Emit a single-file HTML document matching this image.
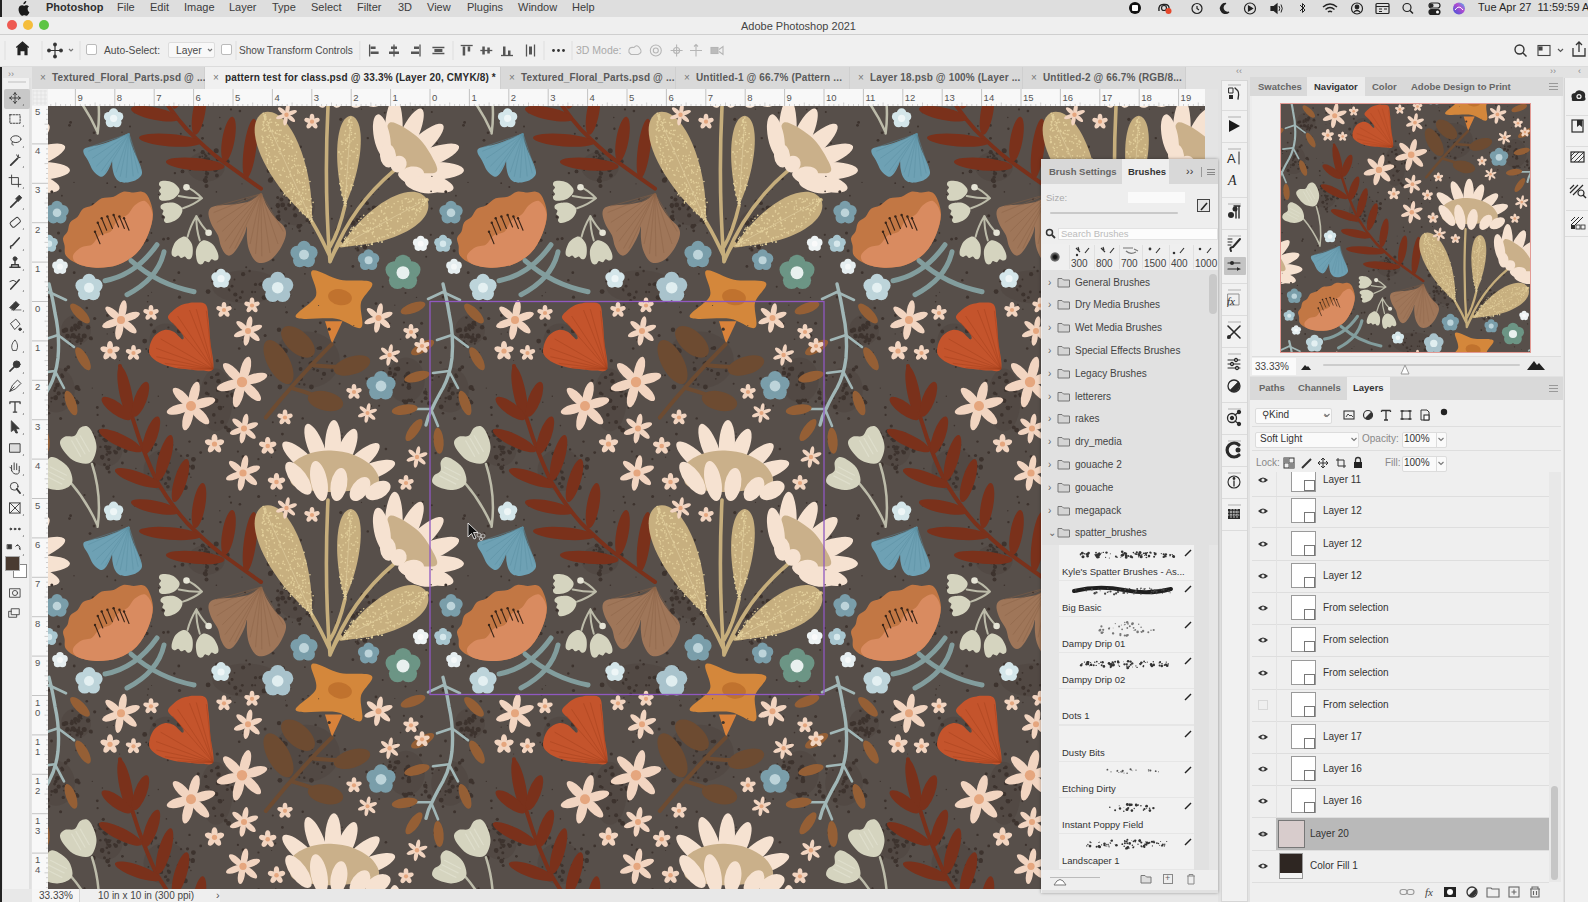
<!DOCTYPE html><html><head><meta charset="utf-8"><style>
*{margin:0;padding:0;box-sizing:border-box}
html,body{width:1588px;height:902px;overflow:hidden;background:#e9e9e9;font-family:"Liberation Sans",sans-serif;color:#333}
.a{position:absolute}
.t{position:absolute;white-space:nowrap;line-height:1}
</style></head><body><div class="a" style="left:0px;top:0px;width:1588px;height:17px;background:#dedede;"></div><div class="a" style="left:0px;top:0px;width:1.6px;height:902px;background:#222;"></div><svg class="a" style="left:16px;top:1px" width="14" height="15" viewBox="0 0 14 15"><path d="M9.5 2.2c.6-.7.9-1.5.8-2.2-.8 0-1.6.5-2.1 1.1-.5.5-.9 1.4-.8 2.2.8.1 1.6-.4 2.1-1.1zM11.6 8c0-1.6 1.3-2.4 1.4-2.4-.8-1.1-2-1.3-2.4-1.3-1-.1-2 .6-2.5.6s-1.3-.6-2.200-.6C4.800 4.300 3.700 5 3.100 6.100c-1.200 2.100-.3 5.200.9 6.900.6.800 1.200 1.700 2.100 1.700.8 0 1.200-.5 2.200-.5s1.300.5 2.200.5c.9 0 1.500-.9 2-1.700.6-.9.900-1.800.9-1.800S11.600 10.400 11.600 8z" fill="#1a1a1a"/></svg><div class="t" style="left:46px;top:2px;font-size:11px;color:#2e2e2e;font-weight:bold">Photoshop</div><div class="t" style="left:117px;top:2px;font-size:11px;color:#3c3c3c;">File</div><div class="t" style="left:150px;top:2px;font-size:11px;color:#3c3c3c;">Edit</div><div class="t" style="left:184px;top:2px;font-size:11px;color:#3c3c3c;">Image</div><div class="t" style="left:229px;top:2px;font-size:11px;color:#3c3c3c;">Layer</div><div class="t" style="left:272px;top:2px;font-size:11px;color:#3c3c3c;">Type</div><div class="t" style="left:311px;top:2px;font-size:11px;color:#3c3c3c;">Select</div><div class="t" style="left:357px;top:2px;font-size:11px;color:#3c3c3c;">Filter</div><div class="t" style="left:398px;top:2px;font-size:11px;color:#3c3c3c;">3D</div><div class="t" style="left:427px;top:2px;font-size:11px;color:#3c3c3c;">View</div><div class="t" style="left:467px;top:2px;font-size:11px;color:#3c3c3c;">Plugins</div><div class="t" style="left:518px;top:2px;font-size:11px;color:#3c3c3c;">Window</div><div class="t" style="left:572px;top:2px;font-size:11px;color:#3c3c3c;">Help</div><div class="t" style="left:1478px;top:2px;font-size:11px;color:#262626;">Tue Apr 27&nbsp;&nbsp;11:59:59 AM</div><div class="a" style="left:0px;top:17px;width:1588px;height:18px;background:#efefef;"></div><div class="a" style="left:0px;top:34px;width:1588px;height:1px;background:#cfcfcf;"></div><div class="a" style="left:7px;top:20px;width:10px;height:10px;border-radius:50%;background:#ee5a52"></div><div class="a" style="left:23px;top:20px;width:10px;height:10px;border-radius:50%;background:#f4bd3c"></div><div class="a" style="left:39px;top:20px;width:10px;height:10px;border-radius:50%;background:#5cc443"></div><div class="t" style="left:741px;top:21px;font-size:11px;color:#444;">Adobe Photoshop 2021</div><div class="a" style="left:0px;top:35px;width:1588px;height:31px;background:#f0f0f0;"></div><div class="a" style="left:0px;top:66px;width:1588px;height:1px;background:#dcdcdc;"></div><div class="t" style="left:104px;top:46px;font-size:10.3px;color:#4a4a4a;">Auto-Select:</div><div class="t" style="left:239px;top:46px;font-size:10.1px;color:#4a4a4a;">Show Transform Controls</div><div class="t" style="left:576px;top:45px;font-size:10.5px;color:#aaa;">3D Mode:</div><div class="a" style="left:168px;top:42px;width:47px;height:16px;background:#f8f8f8;border:1px solid #ddd;border-radius:2px"></div><div class="t" style="left:176px;top:46px;font-size:10.3px;color:#4a4a4a;">Layer</div><div class="a" style="left:86px;top:44px;width:11px;height:11px;background:#fff;border:1px solid #bbb;border-radius:2px"></div><div class="a" style="left:221px;top:44px;width:11px;height:11px;background:#fff;border:1px solid #bbb;border-radius:2px"></div><svg class="a" style="left:0;top:35px" width="1588" height="31" fill="none" stroke="#555" stroke-width="1.2"><g transform="translate(22.5,14) scale(0.78) translate(-22.5,-13)"><path d="M16 10 L22.5 4.5 L29 10 V21 H25 V16 H20 V21 H16Z" fill="#222" stroke="none"/><path d="M14.5 11 L22.5 4 L30.5 11" stroke="#222" stroke-width="1.6"/></g><g stroke="#333" stroke-width="1.2"><path d="M49 15.5 H61 M55 9.5 V21.5"/><circle cx="49" cy="15.5" r="1.3" fill="#333"/><circle cx="61" cy="15.5" r="1.3" fill="#333"/><circle cx="55" cy="9.5" r="1.3" fill="#333"/><circle cx="55" cy="21.5" r="1.3" fill="#333"/></g><path d="M69 14 L71 16 L73 14" stroke="#777"/><path d="M208 14 L210 16 L212 14" stroke="#777"/><line x1="5" y1="6" x2="5" y2="25" stroke="#dedede" stroke-width="1"/><line x1="42" y1="6" x2="42" y2="25" stroke="#dedede" stroke-width="1"/><line x1="80" y1="6" x2="80" y2="25" stroke="#dedede" stroke-width="1"/><line x1="359.8" y1="6" x2="359.8" y2="25" stroke="#dedede" stroke-width="1"/><line x1="453" y1="6" x2="453" y2="25" stroke="#dedede" stroke-width="1"/><line x1="544" y1="6" x2="544" y2="25" stroke="#dedede" stroke-width="1"/><line x1="572" y1="6" x2="572" y2="25" stroke="#dedede" stroke-width="1"/><line x1="236" y1="6" x2="236" y2="25" stroke="#dedede" stroke-width="1"/><g transform="translate(374.6,15.5)" stroke="#555" stroke-width="1.3"><path d="M-5 -6 V6"/><rect x="-4" y="-4" width="5" height="2.5" fill="#555" stroke="none"/><rect x="-4" y="1" width="8" height="2.5" fill="#555" stroke="none"/></g><g transform="translate(394,15.5)" stroke="#555" stroke-width="1.3"><path d="M0 -6 V6"/><rect x="-3" y="-4" width="6" height="2.5" fill="#555" stroke="none"/><rect x="-5" y="1" width="10" height="2.5" fill="#555" stroke="none"/></g><g transform="translate(415,15.5)" stroke="#555" stroke-width="1.3"><path d="M5 -6 V6"/><rect x="-1" y="-4" width="5" height="2.5" fill="#555" stroke="none"/><rect x="-4" y="1" width="8" height="2.5" fill="#555" stroke="none"/></g><g transform="translate(438.4,15.5)" stroke="#555" stroke-width="1.3"><path d="M-6 -3 H6 M-6 3 H6"/><rect x="-4" y="-1.5" width="8" height="3" fill="#555" stroke="none"/></g><g transform="translate(466.7,15.5)" stroke="#555" stroke-width="1.3"><path d="M-6 -5 H6"/><rect x="-4" y="-4" width="2.5" height="9" fill="#555" stroke="none"/><rect x="1" y="-4" width="2.5" height="5" fill="#555" stroke="none"/></g><g transform="translate(486.3,15.5)" stroke="#555" stroke-width="1.3"><path d="M-6 0 H6"/><rect x="-4" y="-4" width="2.5" height="8" fill="#555" stroke="none"/><rect x="1" y="-3" width="2.5" height="6" fill="#555" stroke="none"/></g><g transform="translate(507,15.5)" stroke="#555" stroke-width="1.3"><path d="M-6 5 H6"/><rect x="-4" y="-4" width="2.5" height="9" fill="#555" stroke="none"/><rect x="1" y="0" width="2.5" height="5" fill="#555" stroke="none"/></g><g transform="translate(530.5,15.5)" stroke="#555" stroke-width="1.3"><path d="M-4 -6 V6 M4 -6 V6"/><rect x="-1.5" y="-4" width="3" height="8" fill="#555" stroke="none"/></g><circle cx="553.5" cy="15.5" r="1.4" fill="#333" stroke="none"/><circle cx="558.5" cy="15.5" r="1.4" fill="#333" stroke="none"/><circle cx="563.5" cy="15.5" r="1.4" fill="#333" stroke="none"/><g transform="translate(635,15.5)" stroke="#b5b5b5" stroke-width="1.1"><path d="M-6 2 Q-7 -4 -1 -3 Q2 -7 5 -2 Q8 2 3 4 H-4Z"/></g><g transform="translate(655.8,15.5)" stroke="#b5b5b5" stroke-width="1.1"><circle r="5.5"/><circle r="2.5"/></g><g transform="translate(676.6,15.5)" stroke="#b5b5b5" stroke-width="1.1"><path d="M0 -6 V6 M-6 0 H6"/><circle r="3"/></g><g transform="translate(696,15.5)" stroke="#b5b5b5" stroke-width="1.1"><path d="M0 -6 V6 M-6 0 H6 M-2 -4 L0 -6 L2 -4"/></g><g transform="translate(717,15.5)" stroke="#b5b5b5" stroke-width="1.1"><rect x="-6" y="-3" width="7" height="6" fill="#bbb"/><path d="M2 -1 L6 -4 V4 L2 1"/></g><g stroke="#333" stroke-width="1.4"><circle cx="1519.5" cy="14.5" r="4.5"/><path d="M1523 18 L1526.5 21.5"/></g><g stroke="#444" stroke-width="1.1"><rect x="1538" y="10.5" width="12" height="10"/><rect x="1539" y="12" width="3" height="3" fill="#444"/></g><path d="M1558 14 L1560.5 16.5 L1563 14" stroke="#555"/><g stroke="#333" stroke-width="1.3"><path d="M1573 13 V21 H1585 V13 M1579 17 V7 M1576 10 L1579 7 L1582 10"/></g></svg><svg class="a" style="left:1120px;top:0" width="360" height="17" fill="none" stroke="#222" stroke-width="1.2"><circle cx="15" cy="8" r="6" fill="#111" stroke="none"/><rect x="12" y="5" width="6" height="6" rx="1" fill="#fff" stroke="none"/><path d="M39 11 Q38 4 44 4.5 Q50 4 49 10" stroke-width="1.4"/><circle cx="44" cy="8" r="2.5"/><circle cx="48.5" cy="11" r="3" fill="#e5482c" stroke="none"/><circle cx="77" cy="8.5" r="5"/><path d="M77 6 V8.5 L79 10"/><path d="M106 3.5 A5 5 0 1 0 109 12 A4 4 0 0 1 106 3.5Z" fill="#222"/><circle cx="130" cy="8.5" r="5.5"/><path d="M128.5 6 L132.5 8.5 L128.5 11Z" fill="#222"/><path d="M151 6.5 H154 L157 4 V13 L154 10.5 H151Z" fill="#222"/><path d="M159 6 Q160.5 8.5 159 11 M161 4.5 Q163.5 8.5 161 12.5" stroke-width="1"/><path d="M180 5 L185 10 L182.5 12.5 V3.5 L185 6 L180 11" stroke-width="1"/><path d="M203 7 Q210 1 217 7 M205.5 9.5 Q210 5.5 214.5 9.5 M208 12 Q210 10.5 212 12" stroke-width="1.5"/><circle cx="237" cy="8.5" r="5.5"/><circle cx="237" cy="7" r="1.8" fill="#222"/><path d="M234 12 Q237 9 240 12" /><rect x="256" y="3.5" width="13" height="10" rx="1"/><path d="M256 6.5 H269 M259 9 H262 M264 9 H267 M259 11.5 H262"/><circle cx="287" cy="7.5" r="4"/><path d="M290 10.5 L293 13.5" stroke-width="1.5"/><rect x="309" y="3" width="11" height="5" rx="2.5"/><circle cx="311.5" cy="5.5" r="1.5" fill="#222"/><rect x="309" y="9.5" width="11" height="5" rx="2.5" fill="#222"/><circle cx="317.5" cy="12" r="1.5" fill="#fff" stroke="none"/><defs><linearGradient id="sg" x1="0" x2="1" y1="1" y2="0"><stop offset="0" stop-color="#3a56d8"/><stop offset="0.6" stop-color="#b44bd0"/><stop offset="1" stop-color="#44c0ee"/></linearGradient></defs><circle cx="339" cy="8.5" r="6" fill="url(#sg)" stroke="none"/><path d="M335 10 Q339 4 343 10" stroke="#fff" stroke-width="1"/></svg><div class="a" style="left:2px;top:67px;width:1586px;height:22px;background:#e2e2e2;"></div><div class="a" style="left:32px;top:67px;width:173px;height:22px;background:#d9d9d9;border-right:1px solid #cfcfcf"></div><div class="t" style="left:40px;top:73px;font-size:10px;color:#777;">&#215;</div><div class="t" style="left:52px;top:73px;font-size:10px;color:#5a5a5a;font-weight:bold;letter-spacing:0.15px">Textured_Floral_Parts.psd @ ...</div><div class="a" style="left:205px;top:67px;width:296px;height:22px;background:#f0f0f0;border-right:1px solid #cfcfcf"></div><div class="t" style="left:213px;top:73px;font-size:10px;color:#777;">&#215;</div><div class="t" style="left:225px;top:73px;font-size:10px;color:#2a2a2a;font-weight:bold;letter-spacing:0.15px">pattern test for class.psd @ 33.3% (Layer 20, CMYK/8) *</div><div class="a" style="left:501px;top:67px;width:175px;height:22px;background:#d9d9d9;border-right:1px solid #cfcfcf"></div><div class="t" style="left:509px;top:73px;font-size:10px;color:#777;">&#215;</div><div class="t" style="left:521px;top:73px;font-size:10px;color:#5a5a5a;font-weight:bold;letter-spacing:0.15px">Textured_Floral_Parts.psd @ ...</div><div class="a" style="left:676px;top:67px;width:174px;height:22px;background:#d9d9d9;border-right:1px solid #cfcfcf"></div><div class="t" style="left:684px;top:73px;font-size:10px;color:#777;">&#215;</div><div class="t" style="left:696px;top:73px;font-size:10px;color:#5a5a5a;font-weight:bold;letter-spacing:0.15px">Untitled-1 @ 66.7% (Pattern ...</div><div class="a" style="left:850px;top:67px;width:173px;height:22px;background:#d9d9d9;border-right:1px solid #cfcfcf"></div><div class="t" style="left:858px;top:73px;font-size:10px;color:#777;">&#215;</div><div class="t" style="left:870px;top:73px;font-size:10px;color:#5a5a5a;font-weight:bold;letter-spacing:0.15px">Layer 18.psb @ 100% (Layer ...</div><div class="a" style="left:1023px;top:67px;width:163px;height:22px;background:#d9d9d9;border-right:1px solid #cfcfcf"></div><div class="t" style="left:1031px;top:73px;font-size:10px;color:#777;">&#215;</div><div class="t" style="left:1043px;top:73px;font-size:10px;color:#5a5a5a;font-weight:bold;letter-spacing:0.15px">Untitled-2 @ 66.7% (RGB/8...</div><div class="a" style="left:2px;top:67px;width:30px;height:835px;background:#e4e4e4;"></div><div class="a" style="left:3px;top:78px;width:28px;height:811px;background:#f1f1f1;border-right:2px solid #e0e0e0"></div><div class="t" style="left:8px;top:70px;font-size:9px;color:#888;">&#8250;&#8250;</div><div class="a" style="left:8px;top:81px;width:18px;height:1.5px;background:#d8d8d8;"></div><div class="a" style="left:4px;top:89px;width:26px;height:20px;background:#c8c8c8;border-radius:2px"></div><div class="a" style="left:32px;top:89px;width:1186px;height:17px;background:#e4e4e4;"></div><div class="a" style="left:48px;top:89px;width:1157px;height:17px;background:#f8f8f8;"></div><div class="a" style="left:32px;top:106px;width:16px;height:783px;background:#f8f8f8;"></div><div class="a" style="left:32px;top:89px;width:16px;height:17px;background:#f0f0f0;"></div><svg class="a" style="left:0;top:0" width="1218" height="902"><line x1="50.8" y1="104" x2="50.8" y2="106" stroke="#c4c4c4" stroke-width="0.8"/><line x1="55.7" y1="102.5" x2="55.7" y2="106" stroke="#c4c4c4" stroke-width="0.8"/><line x1="60.6" y1="104" x2="60.6" y2="106" stroke="#c4c4c4" stroke-width="0.8"/><line x1="65.6" y1="104" x2="65.6" y2="106" stroke="#c4c4c4" stroke-width="0.8"/><line x1="70.5" y1="104" x2="70.5" y2="106" stroke="#c4c4c4" stroke-width="0.8"/><line x1="75.4" y1="89" x2="75.4" y2="106" stroke="#b5b5b5" stroke-width="0.8"/><text x="77.4" y="101" font-size="9.5" fill="#555" font-family="Liberation Sans">9</text><line x1="80.3" y1="104" x2="80.3" y2="106" stroke="#c4c4c4" stroke-width="0.8"/><line x1="85.2" y1="104" x2="85.2" y2="106" stroke="#c4c4c4" stroke-width="0.8"/><line x1="90.2" y1="104" x2="90.2" y2="106" stroke="#c4c4c4" stroke-width="0.8"/><line x1="95.1" y1="102.5" x2="95.1" y2="106" stroke="#c4c4c4" stroke-width="0.8"/><line x1="100.0" y1="104" x2="100.0" y2="106" stroke="#c4c4c4" stroke-width="0.8"/><line x1="104.9" y1="104" x2="104.9" y2="106" stroke="#c4c4c4" stroke-width="0.8"/><line x1="109.9" y1="104" x2="109.9" y2="106" stroke="#c4c4c4" stroke-width="0.8"/><line x1="114.8" y1="89" x2="114.8" y2="106" stroke="#b5b5b5" stroke-width="0.8"/><text x="116.8" y="101" font-size="9.5" fill="#555" font-family="Liberation Sans">8</text><line x1="119.7" y1="104" x2="119.7" y2="106" stroke="#c4c4c4" stroke-width="0.8"/><line x1="124.7" y1="104" x2="124.7" y2="106" stroke="#c4c4c4" stroke-width="0.8"/><line x1="129.6" y1="104" x2="129.6" y2="106" stroke="#c4c4c4" stroke-width="0.8"/><line x1="134.5" y1="102.5" x2="134.5" y2="106" stroke="#c4c4c4" stroke-width="0.8"/><line x1="139.4" y1="104" x2="139.4" y2="106" stroke="#c4c4c4" stroke-width="0.8"/><line x1="144.4" y1="104" x2="144.4" y2="106" stroke="#c4c4c4" stroke-width="0.8"/><line x1="149.3" y1="104" x2="149.3" y2="106" stroke="#c4c4c4" stroke-width="0.8"/><line x1="154.2" y1="89" x2="154.2" y2="106" stroke="#b5b5b5" stroke-width="0.8"/><text x="156.2" y="101" font-size="9.5" fill="#555" font-family="Liberation Sans">7</text><line x1="159.1" y1="104" x2="159.1" y2="106" stroke="#c4c4c4" stroke-width="0.8"/><line x1="164.1" y1="104" x2="164.1" y2="106" stroke="#c4c4c4" stroke-width="0.8"/><line x1="169.0" y1="104" x2="169.0" y2="106" stroke="#c4c4c4" stroke-width="0.8"/><line x1="173.9" y1="102.5" x2="173.9" y2="106" stroke="#c4c4c4" stroke-width="0.8"/><line x1="178.8" y1="104" x2="178.8" y2="106" stroke="#c4c4c4" stroke-width="0.8"/><line x1="183.8" y1="104" x2="183.8" y2="106" stroke="#c4c4c4" stroke-width="0.8"/><line x1="188.7" y1="104" x2="188.7" y2="106" stroke="#c4c4c4" stroke-width="0.8"/><line x1="193.6" y1="89" x2="193.6" y2="106" stroke="#b5b5b5" stroke-width="0.8"/><text x="195.6" y="101" font-size="9.5" fill="#555" font-family="Liberation Sans">6</text><line x1="198.5" y1="104" x2="198.5" y2="106" stroke="#c4c4c4" stroke-width="0.8"/><line x1="203.5" y1="104" x2="203.5" y2="106" stroke="#c4c4c4" stroke-width="0.8"/><line x1="208.4" y1="104" x2="208.4" y2="106" stroke="#c4c4c4" stroke-width="0.8"/><line x1="213.3" y1="102.5" x2="213.3" y2="106" stroke="#c4c4c4" stroke-width="0.8"/><line x1="218.2" y1="104" x2="218.2" y2="106" stroke="#c4c4c4" stroke-width="0.8"/><line x1="223.2" y1="104" x2="223.2" y2="106" stroke="#c4c4c4" stroke-width="0.8"/><line x1="228.1" y1="104" x2="228.1" y2="106" stroke="#c4c4c4" stroke-width="0.8"/><line x1="233.0" y1="89" x2="233.0" y2="106" stroke="#b5b5b5" stroke-width="0.8"/><text x="235.0" y="101" font-size="9.5" fill="#555" font-family="Liberation Sans">5</text><line x1="237.9" y1="104" x2="237.9" y2="106" stroke="#c4c4c4" stroke-width="0.8"/><line x1="242.8" y1="104" x2="242.8" y2="106" stroke="#c4c4c4" stroke-width="0.8"/><line x1="247.8" y1="104" x2="247.8" y2="106" stroke="#c4c4c4" stroke-width="0.8"/><line x1="252.7" y1="102.5" x2="252.7" y2="106" stroke="#c4c4c4" stroke-width="0.8"/><line x1="257.6" y1="104" x2="257.6" y2="106" stroke="#c4c4c4" stroke-width="0.8"/><line x1="262.6" y1="104" x2="262.6" y2="106" stroke="#c4c4c4" stroke-width="0.8"/><line x1="267.5" y1="104" x2="267.5" y2="106" stroke="#c4c4c4" stroke-width="0.8"/><line x1="272.4" y1="89" x2="272.4" y2="106" stroke="#b5b5b5" stroke-width="0.8"/><text x="274.4" y="101" font-size="9.5" fill="#555" font-family="Liberation Sans">4</text><line x1="277.3" y1="104" x2="277.3" y2="106" stroke="#c4c4c4" stroke-width="0.8"/><line x1="282.2" y1="104" x2="282.2" y2="106" stroke="#c4c4c4" stroke-width="0.8"/><line x1="287.2" y1="104" x2="287.2" y2="106" stroke="#c4c4c4" stroke-width="0.8"/><line x1="292.1" y1="102.5" x2="292.1" y2="106" stroke="#c4c4c4" stroke-width="0.8"/><line x1="297.0" y1="104" x2="297.0" y2="106" stroke="#c4c4c4" stroke-width="0.8"/><line x1="302.0" y1="104" x2="302.0" y2="106" stroke="#c4c4c4" stroke-width="0.8"/><line x1="306.9" y1="104" x2="306.9" y2="106" stroke="#c4c4c4" stroke-width="0.8"/><line x1="311.8" y1="89" x2="311.8" y2="106" stroke="#b5b5b5" stroke-width="0.8"/><text x="313.8" y="101" font-size="9.5" fill="#555" font-family="Liberation Sans">3</text><line x1="316.7" y1="104" x2="316.7" y2="106" stroke="#c4c4c4" stroke-width="0.8"/><line x1="321.6" y1="104" x2="321.6" y2="106" stroke="#c4c4c4" stroke-width="0.8"/><line x1="326.6" y1="104" x2="326.6" y2="106" stroke="#c4c4c4" stroke-width="0.8"/><line x1="331.5" y1="102.5" x2="331.5" y2="106" stroke="#c4c4c4" stroke-width="0.8"/><line x1="336.4" y1="104" x2="336.4" y2="106" stroke="#c4c4c4" stroke-width="0.8"/><line x1="341.4" y1="104" x2="341.4" y2="106" stroke="#c4c4c4" stroke-width="0.8"/><line x1="346.3" y1="104" x2="346.3" y2="106" stroke="#c4c4c4" stroke-width="0.8"/><line x1="351.2" y1="89" x2="351.2" y2="106" stroke="#b5b5b5" stroke-width="0.8"/><text x="353.2" y="101" font-size="9.5" fill="#555" font-family="Liberation Sans">2</text><line x1="356.1" y1="104" x2="356.1" y2="106" stroke="#c4c4c4" stroke-width="0.8"/><line x1="361.1" y1="104" x2="361.1" y2="106" stroke="#c4c4c4" stroke-width="0.8"/><line x1="366.0" y1="104" x2="366.0" y2="106" stroke="#c4c4c4" stroke-width="0.8"/><line x1="370.9" y1="102.5" x2="370.9" y2="106" stroke="#c4c4c4" stroke-width="0.8"/><line x1="375.8" y1="104" x2="375.8" y2="106" stroke="#c4c4c4" stroke-width="0.8"/><line x1="380.8" y1="104" x2="380.8" y2="106" stroke="#c4c4c4" stroke-width="0.8"/><line x1="385.7" y1="104" x2="385.7" y2="106" stroke="#c4c4c4" stroke-width="0.8"/><line x1="390.6" y1="89" x2="390.6" y2="106" stroke="#b5b5b5" stroke-width="0.8"/><text x="392.6" y="101" font-size="9.5" fill="#555" font-family="Liberation Sans">1</text><line x1="395.5" y1="104" x2="395.5" y2="106" stroke="#c4c4c4" stroke-width="0.8"/><line x1="400.4" y1="104" x2="400.4" y2="106" stroke="#c4c4c4" stroke-width="0.8"/><line x1="405.4" y1="104" x2="405.4" y2="106" stroke="#c4c4c4" stroke-width="0.8"/><line x1="410.3" y1="102.5" x2="410.3" y2="106" stroke="#c4c4c4" stroke-width="0.8"/><line x1="415.2" y1="104" x2="415.2" y2="106" stroke="#c4c4c4" stroke-width="0.8"/><line x1="420.1" y1="104" x2="420.1" y2="106" stroke="#c4c4c4" stroke-width="0.8"/><line x1="425.1" y1="104" x2="425.1" y2="106" stroke="#c4c4c4" stroke-width="0.8"/><line x1="430.0" y1="89" x2="430.0" y2="106" stroke="#b5b5b5" stroke-width="0.8"/><text x="432.0" y="101" font-size="9.5" fill="#555" font-family="Liberation Sans">0</text><line x1="434.9" y1="104" x2="434.9" y2="106" stroke="#c4c4c4" stroke-width="0.8"/><line x1="439.9" y1="104" x2="439.9" y2="106" stroke="#c4c4c4" stroke-width="0.8"/><line x1="444.8" y1="104" x2="444.8" y2="106" stroke="#c4c4c4" stroke-width="0.8"/><line x1="449.7" y1="102.5" x2="449.7" y2="106" stroke="#c4c4c4" stroke-width="0.8"/><line x1="454.6" y1="104" x2="454.6" y2="106" stroke="#c4c4c4" stroke-width="0.8"/><line x1="459.6" y1="104" x2="459.6" y2="106" stroke="#c4c4c4" stroke-width="0.8"/><line x1="464.5" y1="104" x2="464.5" y2="106" stroke="#c4c4c4" stroke-width="0.8"/><line x1="469.4" y1="89" x2="469.4" y2="106" stroke="#b5b5b5" stroke-width="0.8"/><text x="471.4" y="101" font-size="9.5" fill="#555" font-family="Liberation Sans">1</text><line x1="474.3" y1="104" x2="474.3" y2="106" stroke="#c4c4c4" stroke-width="0.8"/><line x1="479.2" y1="104" x2="479.2" y2="106" stroke="#c4c4c4" stroke-width="0.8"/><line x1="484.2" y1="104" x2="484.2" y2="106" stroke="#c4c4c4" stroke-width="0.8"/><line x1="489.1" y1="102.5" x2="489.1" y2="106" stroke="#c4c4c4" stroke-width="0.8"/><line x1="494.0" y1="104" x2="494.0" y2="106" stroke="#c4c4c4" stroke-width="0.8"/><line x1="498.9" y1="104" x2="498.9" y2="106" stroke="#c4c4c4" stroke-width="0.8"/><line x1="503.9" y1="104" x2="503.9" y2="106" stroke="#c4c4c4" stroke-width="0.8"/><line x1="508.8" y1="89" x2="508.8" y2="106" stroke="#b5b5b5" stroke-width="0.8"/><text x="510.8" y="101" font-size="9.5" fill="#555" font-family="Liberation Sans">2</text><line x1="513.7" y1="104" x2="513.7" y2="106" stroke="#c4c4c4" stroke-width="0.8"/><line x1="518.6" y1="104" x2="518.6" y2="106" stroke="#c4c4c4" stroke-width="0.8"/><line x1="523.6" y1="104" x2="523.6" y2="106" stroke="#c4c4c4" stroke-width="0.8"/><line x1="528.5" y1="102.5" x2="528.5" y2="106" stroke="#c4c4c4" stroke-width="0.8"/><line x1="533.4" y1="104" x2="533.4" y2="106" stroke="#c4c4c4" stroke-width="0.8"/><line x1="538.4" y1="104" x2="538.4" y2="106" stroke="#c4c4c4" stroke-width="0.8"/><line x1="543.3" y1="104" x2="543.3" y2="106" stroke="#c4c4c4" stroke-width="0.8"/><line x1="548.2" y1="89" x2="548.2" y2="106" stroke="#b5b5b5" stroke-width="0.8"/><text x="550.2" y="101" font-size="9.5" fill="#555" font-family="Liberation Sans">3</text><line x1="553.1" y1="104" x2="553.1" y2="106" stroke="#c4c4c4" stroke-width="0.8"/><line x1="558.0" y1="104" x2="558.0" y2="106" stroke="#c4c4c4" stroke-width="0.8"/><line x1="563.0" y1="104" x2="563.0" y2="106" stroke="#c4c4c4" stroke-width="0.8"/><line x1="567.9" y1="102.5" x2="567.9" y2="106" stroke="#c4c4c4" stroke-width="0.8"/><line x1="572.8" y1="104" x2="572.8" y2="106" stroke="#c4c4c4" stroke-width="0.8"/><line x1="577.8" y1="104" x2="577.8" y2="106" stroke="#c4c4c4" stroke-width="0.8"/><line x1="582.7" y1="104" x2="582.7" y2="106" stroke="#c4c4c4" stroke-width="0.8"/><line x1="587.6" y1="89" x2="587.6" y2="106" stroke="#b5b5b5" stroke-width="0.8"/><text x="589.6" y="101" font-size="9.5" fill="#555" font-family="Liberation Sans">4</text><line x1="592.5" y1="104" x2="592.5" y2="106" stroke="#c4c4c4" stroke-width="0.8"/><line x1="597.5" y1="104" x2="597.5" y2="106" stroke="#c4c4c4" stroke-width="0.8"/><line x1="602.4" y1="104" x2="602.4" y2="106" stroke="#c4c4c4" stroke-width="0.8"/><line x1="607.3" y1="102.5" x2="607.3" y2="106" stroke="#c4c4c4" stroke-width="0.8"/><line x1="612.2" y1="104" x2="612.2" y2="106" stroke="#c4c4c4" stroke-width="0.8"/><line x1="617.1" y1="104" x2="617.1" y2="106" stroke="#c4c4c4" stroke-width="0.8"/><line x1="622.1" y1="104" x2="622.1" y2="106" stroke="#c4c4c4" stroke-width="0.8"/><line x1="627.0" y1="89" x2="627.0" y2="106" stroke="#b5b5b5" stroke-width="0.8"/><text x="629.0" y="101" font-size="9.5" fill="#555" font-family="Liberation Sans">5</text><line x1="631.9" y1="104" x2="631.9" y2="106" stroke="#c4c4c4" stroke-width="0.8"/><line x1="636.9" y1="104" x2="636.9" y2="106" stroke="#c4c4c4" stroke-width="0.8"/><line x1="641.8" y1="104" x2="641.8" y2="106" stroke="#c4c4c4" stroke-width="0.8"/><line x1="646.7" y1="102.5" x2="646.7" y2="106" stroke="#c4c4c4" stroke-width="0.8"/><line x1="651.6" y1="104" x2="651.6" y2="106" stroke="#c4c4c4" stroke-width="0.8"/><line x1="656.5" y1="104" x2="656.5" y2="106" stroke="#c4c4c4" stroke-width="0.8"/><line x1="661.5" y1="104" x2="661.5" y2="106" stroke="#c4c4c4" stroke-width="0.8"/><line x1="666.4" y1="89" x2="666.4" y2="106" stroke="#b5b5b5" stroke-width="0.8"/><text x="668.4" y="101" font-size="9.5" fill="#555" font-family="Liberation Sans">6</text><line x1="671.3" y1="104" x2="671.3" y2="106" stroke="#c4c4c4" stroke-width="0.8"/><line x1="676.2" y1="104" x2="676.2" y2="106" stroke="#c4c4c4" stroke-width="0.8"/><line x1="681.2" y1="104" x2="681.2" y2="106" stroke="#c4c4c4" stroke-width="0.8"/><line x1="686.1" y1="102.5" x2="686.1" y2="106" stroke="#c4c4c4" stroke-width="0.8"/><line x1="691.0" y1="104" x2="691.0" y2="106" stroke="#c4c4c4" stroke-width="0.8"/><line x1="696.0" y1="104" x2="696.0" y2="106" stroke="#c4c4c4" stroke-width="0.8"/><line x1="700.9" y1="104" x2="700.9" y2="106" stroke="#c4c4c4" stroke-width="0.8"/><line x1="705.8" y1="89" x2="705.8" y2="106" stroke="#b5b5b5" stroke-width="0.8"/><text x="707.8" y="101" font-size="9.5" fill="#555" font-family="Liberation Sans">7</text><line x1="710.7" y1="104" x2="710.7" y2="106" stroke="#c4c4c4" stroke-width="0.8"/><line x1="715.6" y1="104" x2="715.6" y2="106" stroke="#c4c4c4" stroke-width="0.8"/><line x1="720.6" y1="104" x2="720.6" y2="106" stroke="#c4c4c4" stroke-width="0.8"/><line x1="725.5" y1="102.5" x2="725.5" y2="106" stroke="#c4c4c4" stroke-width="0.8"/><line x1="730.4" y1="104" x2="730.4" y2="106" stroke="#c4c4c4" stroke-width="0.8"/><line x1="735.3" y1="104" x2="735.3" y2="106" stroke="#c4c4c4" stroke-width="0.8"/><line x1="740.3" y1="104" x2="740.3" y2="106" stroke="#c4c4c4" stroke-width="0.8"/><line x1="745.2" y1="89" x2="745.2" y2="106" stroke="#b5b5b5" stroke-width="0.8"/><text x="747.2" y="101" font-size="9.5" fill="#555" font-family="Liberation Sans">8</text><line x1="750.1" y1="104" x2="750.1" y2="106" stroke="#c4c4c4" stroke-width="0.8"/><line x1="755.0" y1="104" x2="755.0" y2="106" stroke="#c4c4c4" stroke-width="0.8"/><line x1="760.0" y1="104" x2="760.0" y2="106" stroke="#c4c4c4" stroke-width="0.8"/><line x1="764.9" y1="102.5" x2="764.9" y2="106" stroke="#c4c4c4" stroke-width="0.8"/><line x1="769.8" y1="104" x2="769.8" y2="106" stroke="#c4c4c4" stroke-width="0.8"/><line x1="774.8" y1="104" x2="774.8" y2="106" stroke="#c4c4c4" stroke-width="0.8"/><line x1="779.7" y1="104" x2="779.7" y2="106" stroke="#c4c4c4" stroke-width="0.8"/><line x1="784.6" y1="89" x2="784.6" y2="106" stroke="#b5b5b5" stroke-width="0.8"/><text x="786.6" y="101" font-size="9.5" fill="#555" font-family="Liberation Sans">9</text><line x1="789.5" y1="104" x2="789.5" y2="106" stroke="#c4c4c4" stroke-width="0.8"/><line x1="794.5" y1="104" x2="794.5" y2="106" stroke="#c4c4c4" stroke-width="0.8"/><line x1="799.4" y1="104" x2="799.4" y2="106" stroke="#c4c4c4" stroke-width="0.8"/><line x1="804.3" y1="102.5" x2="804.3" y2="106" stroke="#c4c4c4" stroke-width="0.8"/><line x1="809.2" y1="104" x2="809.2" y2="106" stroke="#c4c4c4" stroke-width="0.8"/><line x1="814.1" y1="104" x2="814.1" y2="106" stroke="#c4c4c4" stroke-width="0.8"/><line x1="819.1" y1="104" x2="819.1" y2="106" stroke="#c4c4c4" stroke-width="0.8"/><line x1="824.0" y1="89" x2="824.0" y2="106" stroke="#b5b5b5" stroke-width="0.8"/><text x="826.0" y="101" font-size="9.5" fill="#555" font-family="Liberation Sans">10</text><line x1="828.9" y1="104" x2="828.9" y2="106" stroke="#c4c4c4" stroke-width="0.8"/><line x1="833.8" y1="104" x2="833.8" y2="106" stroke="#c4c4c4" stroke-width="0.8"/><line x1="838.8" y1="104" x2="838.8" y2="106" stroke="#c4c4c4" stroke-width="0.8"/><line x1="843.7" y1="102.5" x2="843.7" y2="106" stroke="#c4c4c4" stroke-width="0.8"/><line x1="848.6" y1="104" x2="848.6" y2="106" stroke="#c4c4c4" stroke-width="0.8"/><line x1="853.5" y1="104" x2="853.5" y2="106" stroke="#c4c4c4" stroke-width="0.8"/><line x1="858.5" y1="104" x2="858.5" y2="106" stroke="#c4c4c4" stroke-width="0.8"/><line x1="863.4" y1="89" x2="863.4" y2="106" stroke="#b5b5b5" stroke-width="0.8"/><text x="865.4" y="101" font-size="9.5" fill="#555" font-family="Liberation Sans">11</text><line x1="868.3" y1="104" x2="868.3" y2="106" stroke="#c4c4c4" stroke-width="0.8"/><line x1="873.2" y1="104" x2="873.2" y2="106" stroke="#c4c4c4" stroke-width="0.8"/><line x1="878.2" y1="104" x2="878.2" y2="106" stroke="#c4c4c4" stroke-width="0.8"/><line x1="883.1" y1="102.5" x2="883.1" y2="106" stroke="#c4c4c4" stroke-width="0.8"/><line x1="888.0" y1="104" x2="888.0" y2="106" stroke="#c4c4c4" stroke-width="0.8"/><line x1="893.0" y1="104" x2="893.0" y2="106" stroke="#c4c4c4" stroke-width="0.8"/><line x1="897.9" y1="104" x2="897.9" y2="106" stroke="#c4c4c4" stroke-width="0.8"/><line x1="902.8" y1="89" x2="902.8" y2="106" stroke="#b5b5b5" stroke-width="0.8"/><text x="904.8" y="101" font-size="9.5" fill="#555" font-family="Liberation Sans">12</text><line x1="907.7" y1="104" x2="907.7" y2="106" stroke="#c4c4c4" stroke-width="0.8"/><line x1="912.6" y1="104" x2="912.6" y2="106" stroke="#c4c4c4" stroke-width="0.8"/><line x1="917.6" y1="104" x2="917.6" y2="106" stroke="#c4c4c4" stroke-width="0.8"/><line x1="922.5" y1="102.5" x2="922.5" y2="106" stroke="#c4c4c4" stroke-width="0.8"/><line x1="927.4" y1="104" x2="927.4" y2="106" stroke="#c4c4c4" stroke-width="0.8"/><line x1="932.3" y1="104" x2="932.3" y2="106" stroke="#c4c4c4" stroke-width="0.8"/><line x1="937.3" y1="104" x2="937.3" y2="106" stroke="#c4c4c4" stroke-width="0.8"/><line x1="942.2" y1="89" x2="942.2" y2="106" stroke="#b5b5b5" stroke-width="0.8"/><text x="944.2" y="101" font-size="9.5" fill="#555" font-family="Liberation Sans">13</text><line x1="947.1" y1="104" x2="947.1" y2="106" stroke="#c4c4c4" stroke-width="0.8"/><line x1="952.0" y1="104" x2="952.0" y2="106" stroke="#c4c4c4" stroke-width="0.8"/><line x1="957.0" y1="104" x2="957.0" y2="106" stroke="#c4c4c4" stroke-width="0.8"/><line x1="961.9" y1="102.5" x2="961.9" y2="106" stroke="#c4c4c4" stroke-width="0.8"/><line x1="966.8" y1="104" x2="966.8" y2="106" stroke="#c4c4c4" stroke-width="0.8"/><line x1="971.8" y1="104" x2="971.8" y2="106" stroke="#c4c4c4" stroke-width="0.8"/><line x1="976.7" y1="104" x2="976.7" y2="106" stroke="#c4c4c4" stroke-width="0.8"/><line x1="981.6" y1="89" x2="981.6" y2="106" stroke="#b5b5b5" stroke-width="0.8"/><text x="983.6" y="101" font-size="9.5" fill="#555" font-family="Liberation Sans">14</text><line x1="986.5" y1="104" x2="986.5" y2="106" stroke="#c4c4c4" stroke-width="0.8"/><line x1="991.4" y1="104" x2="991.4" y2="106" stroke="#c4c4c4" stroke-width="0.8"/><line x1="996.4" y1="104" x2="996.4" y2="106" stroke="#c4c4c4" stroke-width="0.8"/><line x1="1001.3" y1="102.5" x2="1001.3" y2="106" stroke="#c4c4c4" stroke-width="0.8"/><line x1="1006.2" y1="104" x2="1006.2" y2="106" stroke="#c4c4c4" stroke-width="0.8"/><line x1="1011.1" y1="104" x2="1011.1" y2="106" stroke="#c4c4c4" stroke-width="0.8"/><line x1="1016.1" y1="104" x2="1016.1" y2="106" stroke="#c4c4c4" stroke-width="0.8"/><line x1="1021.0" y1="89" x2="1021.0" y2="106" stroke="#b5b5b5" stroke-width="0.8"/><text x="1023.0" y="101" font-size="9.5" fill="#555" font-family="Liberation Sans">15</text><line x1="1025.9" y1="104" x2="1025.9" y2="106" stroke="#c4c4c4" stroke-width="0.8"/><line x1="1030.8" y1="104" x2="1030.8" y2="106" stroke="#c4c4c4" stroke-width="0.8"/><line x1="1035.8" y1="104" x2="1035.8" y2="106" stroke="#c4c4c4" stroke-width="0.8"/><line x1="1040.7" y1="102.5" x2="1040.7" y2="106" stroke="#c4c4c4" stroke-width="0.8"/><line x1="1045.6" y1="104" x2="1045.6" y2="106" stroke="#c4c4c4" stroke-width="0.8"/><line x1="1050.5" y1="104" x2="1050.5" y2="106" stroke="#c4c4c4" stroke-width="0.8"/><line x1="1055.5" y1="104" x2="1055.5" y2="106" stroke="#c4c4c4" stroke-width="0.8"/><line x1="1060.4" y1="89" x2="1060.4" y2="106" stroke="#b5b5b5" stroke-width="0.8"/><text x="1062.4" y="101" font-size="9.5" fill="#555" font-family="Liberation Sans">16</text><line x1="1065.3" y1="104" x2="1065.3" y2="106" stroke="#c4c4c4" stroke-width="0.8"/><line x1="1070.2" y1="104" x2="1070.2" y2="106" stroke="#c4c4c4" stroke-width="0.8"/><line x1="1075.2" y1="104" x2="1075.2" y2="106" stroke="#c4c4c4" stroke-width="0.8"/><line x1="1080.1" y1="102.5" x2="1080.1" y2="106" stroke="#c4c4c4" stroke-width="0.8"/><line x1="1085.0" y1="104" x2="1085.0" y2="106" stroke="#c4c4c4" stroke-width="0.8"/><line x1="1089.9" y1="104" x2="1089.9" y2="106" stroke="#c4c4c4" stroke-width="0.8"/><line x1="1094.9" y1="104" x2="1094.9" y2="106" stroke="#c4c4c4" stroke-width="0.8"/><line x1="1099.8" y1="89" x2="1099.8" y2="106" stroke="#b5b5b5" stroke-width="0.8"/><text x="1101.8" y="101" font-size="9.5" fill="#555" font-family="Liberation Sans">17</text><line x1="1104.7" y1="104" x2="1104.7" y2="106" stroke="#c4c4c4" stroke-width="0.8"/><line x1="1109.7" y1="104" x2="1109.7" y2="106" stroke="#c4c4c4" stroke-width="0.8"/><line x1="1114.6" y1="104" x2="1114.6" y2="106" stroke="#c4c4c4" stroke-width="0.8"/><line x1="1119.5" y1="102.5" x2="1119.5" y2="106" stroke="#c4c4c4" stroke-width="0.8"/><line x1="1124.4" y1="104" x2="1124.4" y2="106" stroke="#c4c4c4" stroke-width="0.8"/><line x1="1129.3" y1="104" x2="1129.3" y2="106" stroke="#c4c4c4" stroke-width="0.8"/><line x1="1134.3" y1="104" x2="1134.3" y2="106" stroke="#c4c4c4" stroke-width="0.8"/><line x1="1139.2" y1="89" x2="1139.2" y2="106" stroke="#b5b5b5" stroke-width="0.8"/><text x="1141.2" y="101" font-size="9.5" fill="#555" font-family="Liberation Sans">18</text><line x1="1144.1" y1="104" x2="1144.1" y2="106" stroke="#c4c4c4" stroke-width="0.8"/><line x1="1149.0" y1="104" x2="1149.0" y2="106" stroke="#c4c4c4" stroke-width="0.8"/><line x1="1154.0" y1="104" x2="1154.0" y2="106" stroke="#c4c4c4" stroke-width="0.8"/><line x1="1158.9" y1="102.5" x2="1158.9" y2="106" stroke="#c4c4c4" stroke-width="0.8"/><line x1="1163.8" y1="104" x2="1163.8" y2="106" stroke="#c4c4c4" stroke-width="0.8"/><line x1="1168.8" y1="104" x2="1168.8" y2="106" stroke="#c4c4c4" stroke-width="0.8"/><line x1="1173.7" y1="104" x2="1173.7" y2="106" stroke="#c4c4c4" stroke-width="0.8"/><line x1="1178.6" y1="89" x2="1178.6" y2="106" stroke="#b5b5b5" stroke-width="0.8"/><text x="1180.6" y="101" font-size="9.5" fill="#555" font-family="Liberation Sans">19</text><line x1="1183.5" y1="104" x2="1183.5" y2="106" stroke="#c4c4c4" stroke-width="0.8"/><line x1="1188.4" y1="104" x2="1188.4" y2="106" stroke="#c4c4c4" stroke-width="0.8"/><line x1="1193.4" y1="104" x2="1193.4" y2="106" stroke="#c4c4c4" stroke-width="0.8"/><line x1="1198.3" y1="102.5" x2="1198.3" y2="106" stroke="#c4c4c4" stroke-width="0.8"/><line x1="1203.2" y1="104" x2="1203.2" y2="106" stroke="#c4c4c4" stroke-width="0.8"/><text x="35" y="114.5" font-size="9.5" fill="#555" font-family="Liberation Sans">5</text><line x1="46" y1="109.4" x2="48" y2="109.4" stroke="#c4c4c4" stroke-width="0.8"/><line x1="46" y1="114.3" x2="48" y2="114.3" stroke="#c4c4c4" stroke-width="0.8"/><line x1="46" y1="119.3" x2="48" y2="119.3" stroke="#c4c4c4" stroke-width="0.8"/><line x1="44.5" y1="124.2" x2="48" y2="124.2" stroke="#c4c4c4" stroke-width="0.8"/><line x1="46" y1="129.1" x2="48" y2="129.1" stroke="#c4c4c4" stroke-width="0.8"/><line x1="46" y1="134.1" x2="48" y2="134.1" stroke="#c4c4c4" stroke-width="0.8"/><line x1="46" y1="139.0" x2="48" y2="139.0" stroke="#c4c4c4" stroke-width="0.8"/><line x1="32" y1="143.9" x2="48" y2="143.9" stroke="#b5b5b5" stroke-width="0.8"/><text x="35" y="153.9" font-size="9.5" fill="#555" font-family="Liberation Sans">4</text><line x1="46" y1="148.8" x2="48" y2="148.8" stroke="#c4c4c4" stroke-width="0.8"/><line x1="46" y1="153.8" x2="48" y2="153.8" stroke="#c4c4c4" stroke-width="0.8"/><line x1="46" y1="158.7" x2="48" y2="158.7" stroke="#c4c4c4" stroke-width="0.8"/><line x1="44.5" y1="163.6" x2="48" y2="163.6" stroke="#c4c4c4" stroke-width="0.8"/><line x1="46" y1="168.5" x2="48" y2="168.5" stroke="#c4c4c4" stroke-width="0.8"/><line x1="46" y1="173.5" x2="48" y2="173.5" stroke="#c4c4c4" stroke-width="0.8"/><line x1="46" y1="178.4" x2="48" y2="178.4" stroke="#c4c4c4" stroke-width="0.8"/><line x1="32" y1="183.3" x2="48" y2="183.3" stroke="#b5b5b5" stroke-width="0.8"/><text x="35" y="193.3" font-size="9.5" fill="#555" font-family="Liberation Sans">3</text><line x1="46" y1="188.2" x2="48" y2="188.2" stroke="#c4c4c4" stroke-width="0.8"/><line x1="46" y1="193.2" x2="48" y2="193.2" stroke="#c4c4c4" stroke-width="0.8"/><line x1="46" y1="198.1" x2="48" y2="198.1" stroke="#c4c4c4" stroke-width="0.8"/><line x1="44.5" y1="203.0" x2="48" y2="203.0" stroke="#c4c4c4" stroke-width="0.8"/><line x1="46" y1="207.9" x2="48" y2="207.9" stroke="#c4c4c4" stroke-width="0.8"/><line x1="46" y1="212.9" x2="48" y2="212.9" stroke="#c4c4c4" stroke-width="0.8"/><line x1="46" y1="217.8" x2="48" y2="217.8" stroke="#c4c4c4" stroke-width="0.8"/><line x1="32" y1="222.7" x2="48" y2="222.7" stroke="#b5b5b5" stroke-width="0.8"/><text x="35" y="232.7" font-size="9.5" fill="#555" font-family="Liberation Sans">2</text><line x1="46" y1="227.6" x2="48" y2="227.6" stroke="#c4c4c4" stroke-width="0.8"/><line x1="46" y1="232.6" x2="48" y2="232.6" stroke="#c4c4c4" stroke-width="0.8"/><line x1="46" y1="237.5" x2="48" y2="237.5" stroke="#c4c4c4" stroke-width="0.8"/><line x1="44.5" y1="242.4" x2="48" y2="242.4" stroke="#c4c4c4" stroke-width="0.8"/><line x1="46" y1="247.3" x2="48" y2="247.3" stroke="#c4c4c4" stroke-width="0.8"/><line x1="46" y1="252.2" x2="48" y2="252.2" stroke="#c4c4c4" stroke-width="0.8"/><line x1="46" y1="257.2" x2="48" y2="257.2" stroke="#c4c4c4" stroke-width="0.8"/><line x1="32" y1="262.1" x2="48" y2="262.1" stroke="#b5b5b5" stroke-width="0.8"/><text x="35" y="272.1" font-size="9.5" fill="#555" font-family="Liberation Sans">1</text><line x1="46" y1="267.0" x2="48" y2="267.0" stroke="#c4c4c4" stroke-width="0.8"/><line x1="46" y1="271.9" x2="48" y2="271.9" stroke="#c4c4c4" stroke-width="0.8"/><line x1="46" y1="276.9" x2="48" y2="276.9" stroke="#c4c4c4" stroke-width="0.8"/><line x1="44.5" y1="281.8" x2="48" y2="281.8" stroke="#c4c4c4" stroke-width="0.8"/><line x1="46" y1="286.7" x2="48" y2="286.7" stroke="#c4c4c4" stroke-width="0.8"/><line x1="46" y1="291.6" x2="48" y2="291.6" stroke="#c4c4c4" stroke-width="0.8"/><line x1="46" y1="296.6" x2="48" y2="296.6" stroke="#c4c4c4" stroke-width="0.8"/><line x1="32" y1="301.5" x2="48" y2="301.5" stroke="#b5b5b5" stroke-width="0.8"/><text x="35" y="311.5" font-size="9.5" fill="#555" font-family="Liberation Sans">0</text><line x1="46" y1="306.4" x2="48" y2="306.4" stroke="#c4c4c4" stroke-width="0.8"/><line x1="46" y1="311.4" x2="48" y2="311.4" stroke="#c4c4c4" stroke-width="0.8"/><line x1="46" y1="316.3" x2="48" y2="316.3" stroke="#c4c4c4" stroke-width="0.8"/><line x1="44.5" y1="321.2" x2="48" y2="321.2" stroke="#c4c4c4" stroke-width="0.8"/><line x1="46" y1="326.1" x2="48" y2="326.1" stroke="#c4c4c4" stroke-width="0.8"/><line x1="46" y1="331.1" x2="48" y2="331.1" stroke="#c4c4c4" stroke-width="0.8"/><line x1="46" y1="336.0" x2="48" y2="336.0" stroke="#c4c4c4" stroke-width="0.8"/><line x1="32" y1="340.9" x2="48" y2="340.9" stroke="#b5b5b5" stroke-width="0.8"/><text x="35" y="350.9" font-size="9.5" fill="#555" font-family="Liberation Sans">1</text><line x1="46" y1="345.8" x2="48" y2="345.8" stroke="#c4c4c4" stroke-width="0.8"/><line x1="46" y1="350.8" x2="48" y2="350.8" stroke="#c4c4c4" stroke-width="0.8"/><line x1="46" y1="355.7" x2="48" y2="355.7" stroke="#c4c4c4" stroke-width="0.8"/><line x1="44.5" y1="360.6" x2="48" y2="360.6" stroke="#c4c4c4" stroke-width="0.8"/><line x1="46" y1="365.5" x2="48" y2="365.5" stroke="#c4c4c4" stroke-width="0.8"/><line x1="46" y1="370.4" x2="48" y2="370.4" stroke="#c4c4c4" stroke-width="0.8"/><line x1="46" y1="375.4" x2="48" y2="375.4" stroke="#c4c4c4" stroke-width="0.8"/><line x1="32" y1="380.3" x2="48" y2="380.3" stroke="#b5b5b5" stroke-width="0.8"/><text x="35" y="390.3" font-size="9.5" fill="#555" font-family="Liberation Sans">2</text><line x1="46" y1="385.2" x2="48" y2="385.2" stroke="#c4c4c4" stroke-width="0.8"/><line x1="46" y1="390.1" x2="48" y2="390.1" stroke="#c4c4c4" stroke-width="0.8"/><line x1="46" y1="395.1" x2="48" y2="395.1" stroke="#c4c4c4" stroke-width="0.8"/><line x1="44.5" y1="400.0" x2="48" y2="400.0" stroke="#c4c4c4" stroke-width="0.8"/><line x1="46" y1="404.9" x2="48" y2="404.9" stroke="#c4c4c4" stroke-width="0.8"/><line x1="46" y1="409.9" x2="48" y2="409.9" stroke="#c4c4c4" stroke-width="0.8"/><line x1="46" y1="414.8" x2="48" y2="414.8" stroke="#c4c4c4" stroke-width="0.8"/><line x1="32" y1="419.7" x2="48" y2="419.7" stroke="#b5b5b5" stroke-width="0.8"/><text x="35" y="429.7" font-size="9.5" fill="#555" font-family="Liberation Sans">3</text><line x1="46" y1="424.6" x2="48" y2="424.6" stroke="#c4c4c4" stroke-width="0.8"/><line x1="46" y1="429.5" x2="48" y2="429.5" stroke="#c4c4c4" stroke-width="0.8"/><line x1="46" y1="434.5" x2="48" y2="434.5" stroke="#c4c4c4" stroke-width="0.8"/><line x1="44.5" y1="439.4" x2="48" y2="439.4" stroke="#c4c4c4" stroke-width="0.8"/><line x1="46" y1="444.3" x2="48" y2="444.3" stroke="#c4c4c4" stroke-width="0.8"/><line x1="46" y1="449.2" x2="48" y2="449.2" stroke="#c4c4c4" stroke-width="0.8"/><line x1="46" y1="454.2" x2="48" y2="454.2" stroke="#c4c4c4" stroke-width="0.8"/><line x1="32" y1="459.1" x2="48" y2="459.1" stroke="#b5b5b5" stroke-width="0.8"/><text x="35" y="469.1" font-size="9.5" fill="#555" font-family="Liberation Sans">4</text><line x1="46" y1="464.0" x2="48" y2="464.0" stroke="#c4c4c4" stroke-width="0.8"/><line x1="46" y1="468.9" x2="48" y2="468.9" stroke="#c4c4c4" stroke-width="0.8"/><line x1="46" y1="473.9" x2="48" y2="473.9" stroke="#c4c4c4" stroke-width="0.8"/><line x1="44.5" y1="478.8" x2="48" y2="478.8" stroke="#c4c4c4" stroke-width="0.8"/><line x1="46" y1="483.7" x2="48" y2="483.7" stroke="#c4c4c4" stroke-width="0.8"/><line x1="46" y1="488.6" x2="48" y2="488.6" stroke="#c4c4c4" stroke-width="0.8"/><line x1="46" y1="493.6" x2="48" y2="493.6" stroke="#c4c4c4" stroke-width="0.8"/><line x1="32" y1="498.5" x2="48" y2="498.5" stroke="#b5b5b5" stroke-width="0.8"/><text x="35" y="508.5" font-size="9.5" fill="#555" font-family="Liberation Sans">5</text><line x1="46" y1="503.4" x2="48" y2="503.4" stroke="#c4c4c4" stroke-width="0.8"/><line x1="46" y1="508.4" x2="48" y2="508.4" stroke="#c4c4c4" stroke-width="0.8"/><line x1="46" y1="513.3" x2="48" y2="513.3" stroke="#c4c4c4" stroke-width="0.8"/><line x1="44.5" y1="518.2" x2="48" y2="518.2" stroke="#c4c4c4" stroke-width="0.8"/><line x1="46" y1="523.1" x2="48" y2="523.1" stroke="#c4c4c4" stroke-width="0.8"/><line x1="46" y1="528.0" x2="48" y2="528.0" stroke="#c4c4c4" stroke-width="0.8"/><line x1="46" y1="533.0" x2="48" y2="533.0" stroke="#c4c4c4" stroke-width="0.8"/><line x1="32" y1="537.9" x2="48" y2="537.9" stroke="#b5b5b5" stroke-width="0.8"/><text x="35" y="547.9" font-size="9.5" fill="#555" font-family="Liberation Sans">6</text><line x1="46" y1="542.8" x2="48" y2="542.8" stroke="#c4c4c4" stroke-width="0.8"/><line x1="46" y1="547.8" x2="48" y2="547.8" stroke="#c4c4c4" stroke-width="0.8"/><line x1="46" y1="552.7" x2="48" y2="552.7" stroke="#c4c4c4" stroke-width="0.8"/><line x1="44.5" y1="557.6" x2="48" y2="557.6" stroke="#c4c4c4" stroke-width="0.8"/><line x1="46" y1="562.5" x2="48" y2="562.5" stroke="#c4c4c4" stroke-width="0.8"/><line x1="46" y1="567.5" x2="48" y2="567.5" stroke="#c4c4c4" stroke-width="0.8"/><line x1="46" y1="572.4" x2="48" y2="572.4" stroke="#c4c4c4" stroke-width="0.8"/><line x1="32" y1="577.3" x2="48" y2="577.3" stroke="#b5b5b5" stroke-width="0.8"/><text x="35" y="587.3" font-size="9.5" fill="#555" font-family="Liberation Sans">7</text><line x1="46" y1="582.2" x2="48" y2="582.2" stroke="#c4c4c4" stroke-width="0.8"/><line x1="46" y1="587.1" x2="48" y2="587.1" stroke="#c4c4c4" stroke-width="0.8"/><line x1="46" y1="592.1" x2="48" y2="592.1" stroke="#c4c4c4" stroke-width="0.8"/><line x1="44.5" y1="597.0" x2="48" y2="597.0" stroke="#c4c4c4" stroke-width="0.8"/><line x1="46" y1="601.9" x2="48" y2="601.9" stroke="#c4c4c4" stroke-width="0.8"/><line x1="46" y1="606.8" x2="48" y2="606.8" stroke="#c4c4c4" stroke-width="0.8"/><line x1="46" y1="611.8" x2="48" y2="611.8" stroke="#c4c4c4" stroke-width="0.8"/><line x1="32" y1="616.7" x2="48" y2="616.7" stroke="#b5b5b5" stroke-width="0.8"/><text x="35" y="626.7" font-size="9.5" fill="#555" font-family="Liberation Sans">8</text><line x1="46" y1="621.6" x2="48" y2="621.6" stroke="#c4c4c4" stroke-width="0.8"/><line x1="46" y1="626.5" x2="48" y2="626.5" stroke="#c4c4c4" stroke-width="0.8"/><line x1="46" y1="631.5" x2="48" y2="631.5" stroke="#c4c4c4" stroke-width="0.8"/><line x1="44.5" y1="636.4" x2="48" y2="636.4" stroke="#c4c4c4" stroke-width="0.8"/><line x1="46" y1="641.3" x2="48" y2="641.3" stroke="#c4c4c4" stroke-width="0.8"/><line x1="46" y1="646.2" x2="48" y2="646.2" stroke="#c4c4c4" stroke-width="0.8"/><line x1="46" y1="651.2" x2="48" y2="651.2" stroke="#c4c4c4" stroke-width="0.8"/><line x1="32" y1="656.1" x2="48" y2="656.1" stroke="#b5b5b5" stroke-width="0.8"/><text x="35" y="666.1" font-size="9.5" fill="#555" font-family="Liberation Sans">9</text><line x1="46" y1="661.0" x2="48" y2="661.0" stroke="#c4c4c4" stroke-width="0.8"/><line x1="46" y1="666.0" x2="48" y2="666.0" stroke="#c4c4c4" stroke-width="0.8"/><line x1="46" y1="670.9" x2="48" y2="670.9" stroke="#c4c4c4" stroke-width="0.8"/><line x1="44.5" y1="675.8" x2="48" y2="675.8" stroke="#c4c4c4" stroke-width="0.8"/><line x1="46" y1="680.7" x2="48" y2="680.7" stroke="#c4c4c4" stroke-width="0.8"/><line x1="46" y1="685.6" x2="48" y2="685.6" stroke="#c4c4c4" stroke-width="0.8"/><line x1="46" y1="690.6" x2="48" y2="690.6" stroke="#c4c4c4" stroke-width="0.8"/><line x1="32" y1="695.5" x2="48" y2="695.5" stroke="#b5b5b5" stroke-width="0.8"/><text x="35" y="705.5" font-size="9.5" fill="#555" font-family="Liberation Sans">1</text><text x="35" y="715.5" font-size="9.5" fill="#555" font-family="Liberation Sans">0</text><line x1="46" y1="700.4" x2="48" y2="700.4" stroke="#c4c4c4" stroke-width="0.8"/><line x1="46" y1="705.3" x2="48" y2="705.3" stroke="#c4c4c4" stroke-width="0.8"/><line x1="46" y1="710.3" x2="48" y2="710.3" stroke="#c4c4c4" stroke-width="0.8"/><line x1="44.5" y1="715.2" x2="48" y2="715.2" stroke="#c4c4c4" stroke-width="0.8"/><line x1="46" y1="720.1" x2="48" y2="720.1" stroke="#c4c4c4" stroke-width="0.8"/><line x1="46" y1="725.0" x2="48" y2="725.0" stroke="#c4c4c4" stroke-width="0.8"/><line x1="46" y1="730.0" x2="48" y2="730.0" stroke="#c4c4c4" stroke-width="0.8"/><line x1="32" y1="734.9" x2="48" y2="734.9" stroke="#b5b5b5" stroke-width="0.8"/><text x="35" y="744.9" font-size="9.5" fill="#555" font-family="Liberation Sans">1</text><text x="35" y="754.9" font-size="9.5" fill="#555" font-family="Liberation Sans">1</text><line x1="46" y1="739.8" x2="48" y2="739.8" stroke="#c4c4c4" stroke-width="0.8"/><line x1="46" y1="744.8" x2="48" y2="744.8" stroke="#c4c4c4" stroke-width="0.8"/><line x1="46" y1="749.7" x2="48" y2="749.7" stroke="#c4c4c4" stroke-width="0.8"/><line x1="44.5" y1="754.6" x2="48" y2="754.6" stroke="#c4c4c4" stroke-width="0.8"/><line x1="46" y1="759.5" x2="48" y2="759.5" stroke="#c4c4c4" stroke-width="0.8"/><line x1="46" y1="764.5" x2="48" y2="764.5" stroke="#c4c4c4" stroke-width="0.8"/><line x1="46" y1="769.4" x2="48" y2="769.4" stroke="#c4c4c4" stroke-width="0.8"/><line x1="32" y1="774.3" x2="48" y2="774.3" stroke="#b5b5b5" stroke-width="0.8"/><text x="35" y="784.3" font-size="9.5" fill="#555" font-family="Liberation Sans">1</text><text x="35" y="794.3" font-size="9.5" fill="#555" font-family="Liberation Sans">2</text><line x1="46" y1="779.2" x2="48" y2="779.2" stroke="#c4c4c4" stroke-width="0.8"/><line x1="46" y1="784.1" x2="48" y2="784.1" stroke="#c4c4c4" stroke-width="0.8"/><line x1="46" y1="789.1" x2="48" y2="789.1" stroke="#c4c4c4" stroke-width="0.8"/><line x1="44.5" y1="794.0" x2="48" y2="794.0" stroke="#c4c4c4" stroke-width="0.8"/><line x1="46" y1="798.9" x2="48" y2="798.9" stroke="#c4c4c4" stroke-width="0.8"/><line x1="46" y1="803.8" x2="48" y2="803.8" stroke="#c4c4c4" stroke-width="0.8"/><line x1="46" y1="808.8" x2="48" y2="808.8" stroke="#c4c4c4" stroke-width="0.8"/><line x1="32" y1="813.7" x2="48" y2="813.7" stroke="#b5b5b5" stroke-width="0.8"/><text x="35" y="823.7" font-size="9.5" fill="#555" font-family="Liberation Sans">1</text><text x="35" y="833.7" font-size="9.5" fill="#555" font-family="Liberation Sans">3</text><line x1="46" y1="818.6" x2="48" y2="818.6" stroke="#c4c4c4" stroke-width="0.8"/><line x1="46" y1="823.5" x2="48" y2="823.5" stroke="#c4c4c4" stroke-width="0.8"/><line x1="46" y1="828.5" x2="48" y2="828.5" stroke="#c4c4c4" stroke-width="0.8"/><line x1="44.5" y1="833.4" x2="48" y2="833.4" stroke="#c4c4c4" stroke-width="0.8"/><line x1="46" y1="838.3" x2="48" y2="838.3" stroke="#c4c4c4" stroke-width="0.8"/><line x1="46" y1="843.2" x2="48" y2="843.2" stroke="#c4c4c4" stroke-width="0.8"/><line x1="46" y1="848.2" x2="48" y2="848.2" stroke="#c4c4c4" stroke-width="0.8"/><line x1="32" y1="853.1" x2="48" y2="853.1" stroke="#b5b5b5" stroke-width="0.8"/><text x="35" y="863.1" font-size="9.5" fill="#555" font-family="Liberation Sans">1</text><text x="35" y="873.1" font-size="9.5" fill="#555" font-family="Liberation Sans">4</text><line x1="46" y1="858.0" x2="48" y2="858.0" stroke="#c4c4c4" stroke-width="0.8"/><line x1="46" y1="862.9" x2="48" y2="862.9" stroke="#c4c4c4" stroke-width="0.8"/><line x1="46" y1="867.9" x2="48" y2="867.9" stroke="#c4c4c4" stroke-width="0.8"/><line x1="44.5" y1="872.8" x2="48" y2="872.8" stroke="#c4c4c4" stroke-width="0.8"/><line x1="46" y1="877.7" x2="48" y2="877.7" stroke="#c4c4c4" stroke-width="0.8"/><line x1="46" y1="882.6" x2="48" y2="882.6" stroke="#c4c4c4" stroke-width="0.8"/><line x1="46" y1="887.6" x2="48" y2="887.6" stroke="#c4c4c4" stroke-width="0.8"/><line x1="33" y1="90" x2="33" y2="105" stroke="#ddd" stroke-width="0.6"/><line x1="33" y1="91" x2="47" y2="91" stroke="#ddd" stroke-width="0.6"/><line x1="37" y1="90" x2="37" y2="105" stroke="#ddd" stroke-width="0.6"/><line x1="33" y1="95" x2="47" y2="95" stroke="#ddd" stroke-width="0.6"/><line x1="41" y1="90" x2="41" y2="105" stroke="#ddd" stroke-width="0.6"/><line x1="33" y1="99" x2="47" y2="99" stroke="#ddd" stroke-width="0.6"/><line x1="45" y1="90" x2="45" y2="105" stroke="#ddd" stroke-width="0.6"/><line x1="33" y1="103" x2="47" y2="103" stroke="#ddd" stroke-width="0.6"/></svg><svg class="a" style="left:0;top:0" width="32" height="630" fill="none" stroke="#3a3a3a" stroke-width="1.1" stroke-linecap="round" stroke-linejoin="round"><g transform="translate(15,98) scale(0.85)"><path d="M-6 0H6M0 -6V6M-6 0l2-2M-6 0l2 2M6 0l-2-2M6 0l-2 2M0 -6l-2 2M0 -6l2 2M0 6l-2-2M0 6l2-2"/></g><path d="M22.5 105.5 l1.5 -1.5 v1.5z" fill="#555" stroke="none"/><g transform="translate(15,119) scale(0.85)"><rect x="-6" y="-5" width="12" height="10" stroke-dasharray="2 1.5"/></g><path d="M22.5 126.5 l1.5 -1.5 v1.5z" fill="#555" stroke="none"/><g transform="translate(15,140) scale(0.85)"><ellipse cx="1" cy="-1" rx="6" ry="4"/><path d="M-3 2 Q-5 6 -2 6"/></g><path d="M22.5 147.5 l1.5 -1.5 v1.5z" fill="#555" stroke="none"/><g transform="translate(15,160) scale(0.85)"><path d="M-5 6 L3 -2" stroke-width="2.2"/><path d="M4 -6 V-4 M6 -3 H4 M2 -6 L3 -4"/></g><path d="M22.5 167.5 l1.5 -1.5 v1.5z" fill="#555" stroke="none"/><g transform="translate(15,181) scale(0.85)"><path d="M-4 -7 V4 H7 M-7 -4 H4 V7"/></g><path d="M22.5 188.5 l1.5 -1.5 v1.5z" fill="#555" stroke="none"/><g transform="translate(15,202) scale(0.85)"><path d="M-5 6 L3 -2" stroke-width="2"/><path d="M1 -4 L5 -8 L8 -5 L4 -1Z" fill="#3a3a3a"/></g><path d="M22.5 209.5 l1.5 -1.5 v1.5z" fill="#555" stroke="none"/><g transform="translate(15,222) scale(0.85)"><rect x="-6" y="-3" width="12" height="7" rx="2" transform="rotate(-40)"/></g><path d="M22.5 229.5 l1.5 -1.5 v1.5z" fill="#555" stroke="none"/><g transform="translate(15,243) scale(0.85)"><path d="M-5 6 Q-6 3 -3 3 L5 -6" stroke-width="1.8"/></g><path d="M22.5 250.5 l1.5 -1.5 v1.5z" fill="#555" stroke="none"/><g transform="translate(15,263) scale(0.85)"><path d="M-6 5 H6 M-4 2 H4 V5 H-4Z M0 2 V-3" stroke-width="1.6"/><circle cx="0" cy="-5" r="2.3" fill="#3a3a3a"/></g><path d="M22.5 270.5 l1.5 -1.5 v1.5z" fill="#555" stroke="none"/><g transform="translate(15,284) scale(0.85)"><path d="M-5 6 L5 -5" stroke-width="1.8"/><path d="M-6 -3 Q-2 -6 1 -3"/></g><path d="M22.5 291.5 l1.5 -1.5 v1.5z" fill="#555" stroke="none"/><g transform="translate(15,304) scale(0.85)"><path d="M-6 4 L1 -3 L5 1 L-1 7Z M-1 -1 L3 3" fill="#3a3a3a"/><path d="M-4 7 H7" stroke-width="0.8"/></g><path d="M22.5 311.5 l1.5 -1.5 v1.5z" fill="#555" stroke="none"/><g transform="translate(15,325) scale(0.85)"><path d="M-5 -2 L1 -7 L6 -1 L0 5Z"/><circle cx="6" cy="5" r="1.5" fill="#3a3a3a"/></g><path d="M22.5 332.5 l1.5 -1.5 v1.5z" fill="#555" stroke="none"/><g transform="translate(15,345) scale(0.85)"><path d="M-3 6 Q-6 0 0 -6 Q5 0 2 6Z" stroke-width="1"/></g><path d="M22.5 352.5 l1.5 -1.5 v1.5z" fill="#555" stroke="none"/><g transform="translate(15,366) scale(0.85)"><circle cx="2" cy="-2" r="4" fill="#3a3a3a"/><path d="M-1 1 L-6 6" stroke-width="1.8"/></g><path d="M22.5 373.5 l1.5 -1.5 v1.5z" fill="#555" stroke="none"/><g transform="translate(15,386) scale(0.85)"><path d="M-6 6 L-3 -1 L3 -7 L7 -3 L1 3Z M-6 6 L-1 1"/></g><path d="M22.5 393.5 l1.5 -1.5 v1.5z" fill="#555" stroke="none"/><g transform="translate(15,407) scale(0.85)"><path d="M-6 -6 H6 M0 -6 V6 M-2 6 H2 M-6 -6 V-4 M6 -6 V-4" stroke-width="1.5"/></g><path d="M22.5 414.5 l1.5 -1.5 v1.5z" fill="#555" stroke="none"/><g transform="translate(15,427) scale(0.85)"><path d="M-4 -7 L5 2 L1 2 L3 7 L1 7 L-1 3 L-4 5Z" fill="#3a3a3a"/></g><path d="M22.5 434.5 l1.5 -1.5 v1.5z" fill="#555" stroke="none"/><g transform="translate(15,448) scale(0.85)"><rect x="-6" y="-5" width="12" height="10" fill="#ddd"/></g><path d="M22.5 455.5 l1.5 -1.5 v1.5z" fill="#555" stroke="none"/><g transform="translate(15,468) scale(0.85)"><path d="M-4 3 V-3 M-1 2 V-6 M2 2 V-5 M5 3 V-2 M-4 3 Q-2 8 3 7 Q6 6 5 3 M-4 1 L-6 -1"/></g><path d="M22.5 475.5 l1.5 -1.5 v1.5z" fill="#555" stroke="none"/><g transform="translate(15,488) scale(0.85)"><circle cx="-1" cy="-2" r="4.5"/><path d="M2 1 L6 6" stroke-width="2"/></g><path d="M22.5 495.5 l1.5 -1.5 v1.5z" fill="#555" stroke="none"/><g transform="translate(15,508) scale(0.85)"><rect x="-6" y="-6" width="12" height="12"/><path d="M-6 -6 L6 6 M6 -6 L-6 6"/></g><path d="M22.5 515.5 l1.5 -1.5 v1.5z" fill="#555" stroke="none"/><g transform="translate(15,529) scale(0.85)"><circle cx="-5" cy="0" r="1" fill="#3a3a3a"/><circle cx="0" cy="0" r="1" fill="#3a3a3a"/><circle cx="5" cy="0" r="1" fill="#3a3a3a"/></g><path d="M22.5 536.5 l1.5 -1.5 v1.5z" fill="#555" stroke="none"/><g transform="translate(15,548) scale(0.85)"><rect x="-9" y="-4" width="5" height="5" fill="#3a3a3a" stroke-width="0.8"/><path d="M2 -3 Q6 -4 6 1 M1 -2 L3 -4 M5 0 L6 2"/></g><path d="M22.5 555.5 l1.5 -1.5 v1.5z" fill="#555" stroke="none"/><g transform="translate(15,593) scale(0.85)"><rect x="-6" y="-5" width="12" height="10" stroke-width="1"/><circle cx="0" cy="0" r="3" stroke-width="1"/></g><g transform="translate(15,613) scale(0.85)"><rect x="-7" y="-2" width="9" height="7" stroke-width="1"/><rect x="-4" y="-5" width="9" height="7" stroke-width="1" fill="#f2f2f2"/></g></svg><div class="a" style="left:13px;top:564px;width:14px;height:14px;background:#fff;border:1px solid #888"></div><div class="a" style="left:5px;top:556px;width:15px;height:15px;background:#4a3b31;border:1px solid #aaa"></div><svg class="a" style="left:0;top:0" width="1588" height="902"><defs><clipPath id="cc"><rect x="48" y="106" width="1157" height="783"/></clipPath><g id="tile"><ellipse cx="700.0" cy="360.0" rx="33.8" ry="28.5" transform="rotate(0.0 700.0 360.0)" fill="#4b423d" opacity="0.4"/><circle cx="694.6" cy="369.0" r="1.9" fill="#3d332e"/><circle cx="726.1" cy="370.8" r="1.4" fill="#3d332e"/><circle cx="726.2" cy="368.4" r="0.9" fill="#3d332e"/><circle cx="693.6" cy="362.4" r="1.0" fill="#3d332e"/><circle cx="665.0" cy="375.2" r="1.0" fill="#3d332e"/><circle cx="705.4" cy="387.0" r="2.4" fill="#3d332e"/><circle cx="679.2" cy="350.7" r="2.5" fill="#3d332e"/><circle cx="738.7" cy="369.9" r="1.3" fill="#3d332e"/><circle cx="706.2" cy="366.7" r="1.3" fill="#3d332e"/><circle cx="705.5" cy="349.5" r="1.8" fill="#3d332e"/><circle cx="685.5" cy="345.4" r="1.7" fill="#3d332e"/><circle cx="705.8" cy="362.0" r="1.2" fill="#3d332e"/><circle cx="689.5" cy="341.0" r="1.3" fill="#3d332e"/><circle cx="677.8" cy="348.8" r="1.3" fill="#3d332e"/><circle cx="709.6" cy="331.6" r="1.2" fill="#3d332e"/><circle cx="674.4" cy="349.1" r="2.3" fill="#3d332e"/><circle cx="697.6" cy="344.2" r="2.5" fill="#3d332e"/><circle cx="718.0" cy="373.9" r="2.1" fill="#3d332e"/><circle cx="715.8" cy="378.8" r="0.9" fill="#3d332e"/><circle cx="681.7" cy="332.6" r="1.8" fill="#3d332e"/><circle cx="714.2" cy="348.1" r="2.0" fill="#3d332e"/><circle cx="674.5" cy="345.5" r="1.6" fill="#3d332e"/><circle cx="723.2" cy="329.2" r="1.6" fill="#3d332e"/><circle cx="696.7" cy="355.4" r="2.0" fill="#3d332e"/><circle cx="673.0" cy="329.8" r="2.2" fill="#3d332e"/><circle cx="695.0" cy="379.0" r="1.9" fill="#3d332e"/><circle cx="725.9" cy="363.1" r="1.1" fill="#3d332e"/><circle cx="704.6" cy="363.5" r="2.1" fill="#3d332e"/><circle cx="711.6" cy="370.4" r="1.5" fill="#3d332e"/><circle cx="705.3" cy="355.3" r="1.6" fill="#3d332e"/><circle cx="660.7" cy="349.4" r="2.2" fill="#3d332e"/><circle cx="712.1" cy="348.3" r="1.5" fill="#3d332e"/><circle cx="673.9" cy="387.0" r="2.4" fill="#3d332e"/><circle cx="707.8" cy="369.2" r="1.2" fill="#3d332e"/><ellipse cx="560.0" cy="470.0" rx="22.5" ry="21.0" transform="rotate(0.0 560.0 470.0)" fill="#4b423d" opacity="0.4"/><circle cx="561.9" cy="486.8" r="1.8" fill="#3d332e"/><circle cx="559.9" cy="470.6" r="1.5" fill="#3d332e"/><circle cx="546.3" cy="483.8" r="2.4" fill="#3d332e"/><circle cx="553.1" cy="453.6" r="1.8" fill="#3d332e"/><circle cx="558.3" cy="466.8" r="2.3" fill="#3d332e"/><circle cx="565.1" cy="445.0" r="2.2" fill="#3d332e"/><circle cx="547.7" cy="479.2" r="1.0" fill="#3d332e"/><circle cx="557.1" cy="467.0" r="0.9" fill="#3d332e"/><circle cx="562.2" cy="477.6" r="1.4" fill="#3d332e"/><circle cx="560.1" cy="470.0" r="1.1" fill="#3d332e"/><circle cx="571.9" cy="478.2" r="0.8" fill="#3d332e"/><circle cx="575.0" cy="455.9" r="1.1" fill="#3d332e"/><circle cx="559.8" cy="483.4" r="1.4" fill="#3d332e"/><circle cx="579.2" cy="487.4" r="2.5" fill="#3d332e"/><circle cx="542.4" cy="473.6" r="0.9" fill="#3d332e"/><circle cx="571.4" cy="477.9" r="1.3" fill="#3d332e"/><circle cx="564.0" cy="463.1" r="0.8" fill="#3d332e"/><circle cx="578.3" cy="464.6" r="1.0" fill="#3d332e"/><circle cx="557.7" cy="469.4" r="1.7" fill="#3d332e"/><circle cx="586.8" cy="466.6" r="2.0" fill="#3d332e"/><circle cx="559.0" cy="483.8" r="1.1" fill="#3d332e"/><circle cx="562.6" cy="452.2" r="2.1" fill="#3d332e"/><circle cx="555.0" cy="478.6" r="2.2" fill="#3d332e"/><circle cx="586.7" cy="467.6" r="2.2" fill="#3d332e"/><circle cx="570.1" cy="449.4" r="1.2" fill="#3d332e"/><circle cx="545.5" cy="468.5" r="0.8" fill="#3d332e"/><circle cx="572.1" cy="472.0" r="1.2" fill="#3d332e"/><circle cx="549.7" cy="444.6" r="1.6" fill="#3d332e"/><circle cx="587.4" cy="459.3" r="2.4" fill="#3d332e"/><circle cx="553.1" cy="477.3" r="1.2" fill="#3d332e"/><circle cx="563.2" cy="478.7" r="1.9" fill="#3d332e"/><circle cx="581.5" cy="455.5" r="1.6" fill="#3d332e"/><circle cx="545.3" cy="450.4" r="0.9" fill="#3d332e"/><circle cx="545.0" cy="447.8" r="2.1" fill="#3d332e"/><ellipse cx="610.0" cy="400.0" rx="16.5" ry="31.5" transform="rotate(0.0 610.0 400.0)" fill="#4b423d" opacity="0.4"/><circle cx="610.0" cy="374.9" r="1.1" fill="#3d332e"/><circle cx="612.5" cy="381.2" r="2.2" fill="#3d332e"/><circle cx="621.3" cy="396.1" r="1.5" fill="#3d332e"/><circle cx="626.6" cy="389.0" r="1.1" fill="#3d332e"/><circle cx="614.1" cy="408.0" r="2.3" fill="#3d332e"/><circle cx="612.0" cy="389.8" r="2.2" fill="#3d332e"/><circle cx="626.3" cy="396.1" r="1.4" fill="#3d332e"/><circle cx="604.9" cy="397.0" r="0.8" fill="#3d332e"/><circle cx="626.0" cy="394.3" r="1.7" fill="#3d332e"/><circle cx="621.2" cy="390.5" r="2.3" fill="#3d332e"/><circle cx="613.4" cy="387.5" r="1.2" fill="#3d332e"/><circle cx="607.8" cy="414.9" r="1.8" fill="#3d332e"/><circle cx="609.3" cy="422.8" r="1.0" fill="#3d332e"/><circle cx="619.0" cy="389.1" r="1.6" fill="#3d332e"/><circle cx="592.2" cy="380.4" r="1.5" fill="#3d332e"/><circle cx="621.8" cy="387.2" r="1.7" fill="#3d332e"/><circle cx="608.7" cy="399.6" r="1.5" fill="#3d332e"/><circle cx="610.2" cy="400.8" r="2.2" fill="#3d332e"/><circle cx="616.1" cy="422.0" r="2.0" fill="#3d332e"/><circle cx="600.6" cy="393.3" r="1.7" fill="#3d332e"/><circle cx="592.6" cy="387.9" r="1.0" fill="#3d332e"/><circle cx="602.3" cy="394.1" r="1.3" fill="#3d332e"/><circle cx="611.9" cy="374.1" r="1.8" fill="#3d332e"/><circle cx="611.3" cy="360.7" r="1.6" fill="#3d332e"/><circle cx="599.6" cy="383.1" r="1.7" fill="#3d332e"/><circle cx="605.6" cy="377.4" r="1.7" fill="#3d332e"/><circle cx="589.1" cy="405.5" r="2.0" fill="#3d332e"/><circle cx="625.1" cy="371.8" r="1.2" fill="#3d332e"/><circle cx="590.3" cy="385.3" r="2.2" fill="#3d332e"/><circle cx="613.3" cy="407.3" r="1.6" fill="#3d332e"/><circle cx="617.3" cy="406.8" r="0.9" fill="#3d332e"/><circle cx="601.0" cy="369.0" r="2.3" fill="#3d332e"/><circle cx="619.8" cy="427.4" r="1.9" fill="#3d332e"/><circle cx="622.6" cy="430.1" r="2.4" fill="#3d332e"/><ellipse cx="450.0" cy="390.0" rx="18.8" ry="22.5" transform="rotate(0.0 450.0 390.0)" fill="#4b423d" opacity="0.4"/><circle cx="454.6" cy="418.5" r="1.5" fill="#3d332e"/><circle cx="425.3" cy="392.4" r="2.2" fill="#3d332e"/><circle cx="457.3" cy="404.1" r="1.7" fill="#3d332e"/><circle cx="445.8" cy="398.1" r="1.3" fill="#3d332e"/><circle cx="449.7" cy="388.1" r="1.7" fill="#3d332e"/><circle cx="448.6" cy="390.7" r="1.4" fill="#3d332e"/><circle cx="438.9" cy="376.8" r="0.9" fill="#3d332e"/><circle cx="471.1" cy="387.6" r="2.5" fill="#3d332e"/><circle cx="457.8" cy="397.3" r="0.9" fill="#3d332e"/><circle cx="451.8" cy="378.2" r="1.0" fill="#3d332e"/><circle cx="429.3" cy="403.2" r="2.2" fill="#3d332e"/><circle cx="449.6" cy="397.9" r="2.4" fill="#3d332e"/><circle cx="432.4" cy="380.0" r="1.0" fill="#3d332e"/><circle cx="468.0" cy="398.2" r="1.5" fill="#3d332e"/><circle cx="471.5" cy="402.6" r="1.9" fill="#3d332e"/><circle cx="451.4" cy="385.0" r="2.3" fill="#3d332e"/><circle cx="470.6" cy="401.0" r="1.6" fill="#3d332e"/><circle cx="441.2" cy="406.8" r="2.4" fill="#3d332e"/><circle cx="449.3" cy="397.1" r="1.7" fill="#3d332e"/><circle cx="450.4" cy="396.4" r="1.1" fill="#3d332e"/><circle cx="457.7" cy="393.0" r="1.3" fill="#3d332e"/><circle cx="443.0" cy="413.3" r="1.3" fill="#3d332e"/><circle cx="442.5" cy="390.0" r="1.4" fill="#3d332e"/><circle cx="459.4" cy="391.3" r="0.8" fill="#3d332e"/><circle cx="448.2" cy="370.3" r="1.1" fill="#3d332e"/><circle cx="426.5" cy="394.5" r="1.0" fill="#3d332e"/><circle cx="455.8" cy="374.9" r="1.6" fill="#3d332e"/><circle cx="456.6" cy="376.5" r="1.7" fill="#3d332e"/><circle cx="440.6" cy="362.6" r="1.4" fill="#3d332e"/><circle cx="459.7" cy="369.5" r="1.9" fill="#3d332e"/><circle cx="440.1" cy="398.1" r="0.9" fill="#3d332e"/><circle cx="452.7" cy="393.4" r="2.1" fill="#3d332e"/><circle cx="449.8" cy="398.4" r="0.9" fill="#3d332e"/><circle cx="462.3" cy="367.1" r="1.9" fill="#3d332e"/><ellipse cx="520.0" cy="620.0" rx="22.5" ry="18.8" transform="rotate(0.0 520.0 620.0)" fill="#4b423d" opacity="0.4"/><circle cx="517.8" cy="629.1" r="1.3" fill="#3d332e"/><circle cx="512.0" cy="621.7" r="1.6" fill="#3d332e"/><circle cx="517.6" cy="644.2" r="2.5" fill="#3d332e"/><circle cx="509.3" cy="617.3" r="2.4" fill="#3d332e"/><circle cx="514.7" cy="631.3" r="0.8" fill="#3d332e"/><circle cx="506.9" cy="630.0" r="1.7" fill="#3d332e"/><circle cx="525.6" cy="634.8" r="0.8" fill="#3d332e"/><circle cx="519.5" cy="624.6" r="1.5" fill="#3d332e"/><circle cx="522.0" cy="620.5" r="1.3" fill="#3d332e"/><circle cx="522.2" cy="637.1" r="1.7" fill="#3d332e"/><circle cx="520.1" cy="601.4" r="2.0" fill="#3d332e"/><circle cx="531.2" cy="611.1" r="1.4" fill="#3d332e"/><circle cx="527.9" cy="619.4" r="2.0" fill="#3d332e"/><circle cx="517.9" cy="617.8" r="2.2" fill="#3d332e"/><circle cx="536.8" cy="608.7" r="2.0" fill="#3d332e"/><circle cx="522.9" cy="614.2" r="1.7" fill="#3d332e"/><circle cx="493.6" cy="619.4" r="2.2" fill="#3d332e"/><circle cx="529.5" cy="604.8" r="2.3" fill="#3d332e"/><circle cx="510.5" cy="602.3" r="1.2" fill="#3d332e"/><circle cx="527.2" cy="621.2" r="1.4" fill="#3d332e"/><circle cx="540.9" cy="633.5" r="1.7" fill="#3d332e"/><circle cx="505.0" cy="607.0" r="2.0" fill="#3d332e"/><circle cx="519.4" cy="620.0" r="2.2" fill="#3d332e"/><circle cx="519.8" cy="604.5" r="1.7" fill="#3d332e"/><circle cx="517.6" cy="616.9" r="2.1" fill="#3d332e"/><circle cx="519.9" cy="624.1" r="1.3" fill="#3d332e"/><circle cx="518.7" cy="611.8" r="2.1" fill="#3d332e"/><circle cx="538.1" cy="617.7" r="1.5" fill="#3d332e"/><circle cx="497.2" cy="622.5" r="2.1" fill="#3d332e"/><circle cx="503.7" cy="607.7" r="0.9" fill="#3d332e"/><circle cx="526.9" cy="627.7" r="2.1" fill="#3d332e"/><circle cx="513.2" cy="635.8" r="0.8" fill="#3d332e"/><circle cx="531.1" cy="623.7" r="1.9" fill="#3d332e"/><circle cx="511.9" cy="602.2" r="1.3" fill="#3d332e"/><ellipse cx="640.0" cy="680.0" rx="33.8" ry="16.5" transform="rotate(0.0 640.0 680.0)" fill="#4b423d" opacity="0.4"/><circle cx="613.8" cy="678.7" r="1.6" fill="#3d332e"/><circle cx="670.6" cy="693.8" r="1.1" fill="#3d332e"/><circle cx="682.6" cy="677.1" r="0.8" fill="#3d332e"/><circle cx="602.1" cy="684.9" r="2.4" fill="#3d332e"/><circle cx="623.0" cy="682.7" r="1.2" fill="#3d332e"/><circle cx="654.3" cy="677.5" r="1.8" fill="#3d332e"/><circle cx="658.0" cy="690.9" r="2.4" fill="#3d332e"/><circle cx="666.3" cy="694.2" r="1.7" fill="#3d332e"/><circle cx="666.7" cy="668.8" r="1.2" fill="#3d332e"/><circle cx="661.7" cy="672.0" r="0.8" fill="#3d332e"/><circle cx="667.4" cy="680.3" r="1.6" fill="#3d332e"/><circle cx="636.3" cy="685.3" r="1.4" fill="#3d332e"/><circle cx="623.9" cy="697.8" r="0.8" fill="#3d332e"/><circle cx="640.2" cy="660.5" r="1.0" fill="#3d332e"/><circle cx="671.8" cy="672.3" r="2.3" fill="#3d332e"/><circle cx="634.4" cy="690.7" r="1.5" fill="#3d332e"/><circle cx="671.1" cy="679.9" r="1.4" fill="#3d332e"/><circle cx="623.6" cy="683.9" r="0.9" fill="#3d332e"/><circle cx="671.8" cy="691.6" r="1.3" fill="#3d332e"/><circle cx="655.6" cy="676.7" r="1.3" fill="#3d332e"/><circle cx="626.0" cy="679.5" r="1.4" fill="#3d332e"/><circle cx="679.7" cy="674.5" r="2.2" fill="#3d332e"/><circle cx="611.3" cy="664.9" r="2.4" fill="#3d332e"/><circle cx="606.0" cy="674.7" r="0.9" fill="#3d332e"/><circle cx="637.1" cy="667.5" r="2.1" fill="#3d332e"/><circle cx="628.5" cy="672.8" r="0.9" fill="#3d332e"/><circle cx="649.5" cy="677.7" r="1.6" fill="#3d332e"/><circle cx="629.3" cy="687.8" r="2.1" fill="#3d332e"/><circle cx="657.3" cy="678.7" r="1.9" fill="#3d332e"/><circle cx="630.6" cy="693.9" r="1.5" fill="#3d332e"/><circle cx="646.2" cy="685.3" r="1.2" fill="#3d332e"/><circle cx="662.9" cy="672.5" r="1.2" fill="#3d332e"/><circle cx="677.3" cy="667.8" r="1.6" fill="#3d332e"/><circle cx="649.1" cy="685.3" r="1.0" fill="#3d332e"/><ellipse cx="600.0" cy="560.0" rx="18.8" ry="15.0" transform="rotate(0.0 600.0 560.0)" fill="#4b423d" opacity="0.4"/><circle cx="597.4" cy="563.1" r="1.2" fill="#3d332e"/><circle cx="599.1" cy="573.5" r="2.3" fill="#3d332e"/><circle cx="600.0" cy="549.2" r="1.5" fill="#3d332e"/><circle cx="587.5" cy="558.5" r="1.4" fill="#3d332e"/><circle cx="609.4" cy="563.1" r="2.4" fill="#3d332e"/><circle cx="610.9" cy="568.8" r="1.9" fill="#3d332e"/><circle cx="605.6" cy="554.8" r="1.3" fill="#3d332e"/><circle cx="600.1" cy="570.5" r="1.6" fill="#3d332e"/><circle cx="621.4" cy="554.9" r="2.3" fill="#3d332e"/><circle cx="602.2" cy="560.2" r="2.0" fill="#3d332e"/><circle cx="611.7" cy="552.8" r="1.8" fill="#3d332e"/><circle cx="613.0" cy="560.0" r="2.4" fill="#3d332e"/><circle cx="610.2" cy="544.1" r="2.5" fill="#3d332e"/><circle cx="600.1" cy="564.2" r="1.1" fill="#3d332e"/><circle cx="581.1" cy="557.9" r="2.4" fill="#3d332e"/><circle cx="596.7" cy="545.5" r="2.1" fill="#3d332e"/><circle cx="584.1" cy="563.5" r="0.9" fill="#3d332e"/><circle cx="601.8" cy="552.9" r="2.4" fill="#3d332e"/><circle cx="593.4" cy="553.1" r="1.0" fill="#3d332e"/><circle cx="599.8" cy="574.6" r="2.0" fill="#3d332e"/><circle cx="603.0" cy="562.0" r="1.7" fill="#3d332e"/><circle cx="588.8" cy="554.9" r="1.2" fill="#3d332e"/><circle cx="599.2" cy="559.5" r="1.3" fill="#3d332e"/><circle cx="576.5" cy="564.7" r="1.9" fill="#3d332e"/><circle cx="611.1" cy="552.1" r="1.2" fill="#3d332e"/><circle cx="600.5" cy="579.4" r="2.0" fill="#3d332e"/><circle cx="599.4" cy="561.3" r="1.6" fill="#3d332e"/><circle cx="593.8" cy="550.3" r="1.2" fill="#3d332e"/><circle cx="588.2" cy="543.6" r="1.2" fill="#3d332e"/><circle cx="611.4" cy="562.0" r="1.5" fill="#3d332e"/><circle cx="596.7" cy="554.1" r="2.2" fill="#3d332e"/><circle cx="598.9" cy="547.6" r="1.1" fill="#3d332e"/><circle cx="610.9" cy="558.3" r="2.2" fill="#3d332e"/><circle cx="601.0" cy="566.9" r="2.1" fill="#3d332e"/><ellipse cx="760.0" cy="620.0" rx="22.5" ry="18.8" transform="rotate(0.0 760.0 620.0)" fill="#4b423d" opacity="0.4"/><circle cx="751.9" cy="643.2" r="1.6" fill="#3d332e"/><circle cx="764.0" cy="628.1" r="1.5" fill="#3d332e"/><circle cx="745.3" cy="599.2" r="1.0" fill="#3d332e"/><circle cx="752.0" cy="625.3" r="2.5" fill="#3d332e"/><circle cx="762.4" cy="622.5" r="0.9" fill="#3d332e"/><circle cx="738.2" cy="634.4" r="2.3" fill="#3d332e"/><circle cx="756.8" cy="595.2" r="2.4" fill="#3d332e"/><circle cx="755.6" cy="626.8" r="2.4" fill="#3d332e"/><circle cx="759.9" cy="617.8" r="1.9" fill="#3d332e"/><circle cx="749.1" cy="628.7" r="1.4" fill="#3d332e"/><circle cx="760.2" cy="620.4" r="1.3" fill="#3d332e"/><circle cx="742.7" cy="639.5" r="1.0" fill="#3d332e"/><circle cx="769.7" cy="618.1" r="1.4" fill="#3d332e"/><circle cx="771.4" cy="600.4" r="1.5" fill="#3d332e"/><circle cx="776.9" cy="624.5" r="1.4" fill="#3d332e"/><circle cx="768.3" cy="616.2" r="1.4" fill="#3d332e"/><circle cx="762.1" cy="618.7" r="1.5" fill="#3d332e"/><circle cx="769.4" cy="600.8" r="0.9" fill="#3d332e"/><circle cx="764.2" cy="620.8" r="2.4" fill="#3d332e"/><circle cx="758.9" cy="640.4" r="2.3" fill="#3d332e"/><circle cx="753.6" cy="628.5" r="2.4" fill="#3d332e"/><circle cx="751.3" cy="613.4" r="2.0" fill="#3d332e"/><circle cx="755.1" cy="629.3" r="0.8" fill="#3d332e"/><circle cx="761.0" cy="596.5" r="1.9" fill="#3d332e"/><circle cx="762.1" cy="619.4" r="1.2" fill="#3d332e"/><circle cx="731.3" cy="623.8" r="2.4" fill="#3d332e"/><circle cx="751.4" cy="626.2" r="1.5" fill="#3d332e"/><circle cx="731.6" cy="621.0" r="1.1" fill="#3d332e"/><circle cx="767.9" cy="600.9" r="2.2" fill="#3d332e"/><circle cx="763.0" cy="602.5" r="1.4" fill="#3d332e"/><circle cx="753.8" cy="631.1" r="2.1" fill="#3d332e"/><circle cx="768.5" cy="623.8" r="2.1" fill="#3d332e"/><circle cx="760.1" cy="623.7" r="0.9" fill="#3d332e"/><circle cx="747.1" cy="616.3" r="2.5" fill="#3d332e"/><ellipse cx="680.0" cy="560.0" rx="15.0" ry="22.5" transform="rotate(0.0 680.0 560.0)" fill="#4b423d" opacity="0.4"/><circle cx="694.7" cy="540.1" r="1.3" fill="#3d332e"/><circle cx="683.4" cy="562.9" r="1.6" fill="#3d332e"/><circle cx="677.2" cy="543.5" r="1.2" fill="#3d332e"/><circle cx="667.6" cy="570.7" r="1.9" fill="#3d332e"/><circle cx="679.8" cy="533.3" r="1.9" fill="#3d332e"/><circle cx="692.8" cy="578.3" r="1.3" fill="#3d332e"/><circle cx="670.8" cy="553.9" r="2.1" fill="#3d332e"/><circle cx="682.4" cy="570.7" r="1.2" fill="#3d332e"/><circle cx="690.5" cy="582.6" r="1.8" fill="#3d332e"/><circle cx="675.2" cy="573.9" r="2.5" fill="#3d332e"/><circle cx="672.8" cy="559.5" r="2.2" fill="#3d332e"/><circle cx="668.7" cy="535.5" r="1.0" fill="#3d332e"/><circle cx="662.8" cy="564.1" r="2.2" fill="#3d332e"/><circle cx="681.8" cy="558.4" r="1.3" fill="#3d332e"/><circle cx="684.6" cy="566.4" r="2.5" fill="#3d332e"/><circle cx="663.5" cy="545.8" r="1.4" fill="#3d332e"/><circle cx="687.6" cy="547.2" r="1.2" fill="#3d332e"/><circle cx="683.3" cy="531.6" r="1.0" fill="#3d332e"/><circle cx="668.2" cy="547.8" r="1.2" fill="#3d332e"/><circle cx="676.5" cy="565.6" r="1.1" fill="#3d332e"/><circle cx="679.6" cy="581.0" r="1.9" fill="#3d332e"/><circle cx="680.3" cy="561.3" r="1.4" fill="#3d332e"/><circle cx="677.3" cy="551.7" r="1.3" fill="#3d332e"/><circle cx="684.9" cy="584.5" r="1.7" fill="#3d332e"/><circle cx="683.7" cy="562.3" r="1.5" fill="#3d332e"/><circle cx="666.1" cy="553.2" r="1.0" fill="#3d332e"/><circle cx="688.0" cy="579.9" r="1.5" fill="#3d332e"/><circle cx="678.2" cy="572.9" r="2.4" fill="#3d332e"/><circle cx="674.9" cy="578.6" r="1.4" fill="#3d332e"/><circle cx="664.4" cy="573.6" r="2.5" fill="#3d332e"/><circle cx="675.8" cy="567.3" r="2.0" fill="#3d332e"/><circle cx="680.2" cy="560.8" r="2.3" fill="#3d332e"/><circle cx="664.5" cy="572.0" r="1.5" fill="#3d332e"/><circle cx="688.6" cy="548.3" r="1.1" fill="#3d332e"/><ellipse cx="560.0" cy="340.0" rx="16.5" ry="16.5" transform="rotate(0.0 560.0 340.0)" fill="#4b423d" opacity="0.4"/><circle cx="574.4" cy="341.4" r="1.9" fill="#3d332e"/><circle cx="563.4" cy="337.8" r="1.9" fill="#3d332e"/><circle cx="550.6" cy="349.9" r="1.0" fill="#3d332e"/><circle cx="557.1" cy="353.6" r="2.4" fill="#3d332e"/><circle cx="570.4" cy="348.4" r="2.2" fill="#3d332e"/><circle cx="566.9" cy="338.5" r="1.0" fill="#3d332e"/><circle cx="580.3" cy="332.4" r="1.6" fill="#3d332e"/><circle cx="579.7" cy="346.9" r="1.5" fill="#3d332e"/><circle cx="573.0" cy="331.1" r="2.2" fill="#3d332e"/><circle cx="569.9" cy="355.7" r="1.2" fill="#3d332e"/><circle cx="543.8" cy="351.1" r="2.2" fill="#3d332e"/><circle cx="563.1" cy="346.9" r="1.5" fill="#3d332e"/><circle cx="548.8" cy="338.7" r="1.0" fill="#3d332e"/><circle cx="560.3" cy="357.6" r="2.3" fill="#3d332e"/><circle cx="574.2" cy="343.8" r="2.1" fill="#3d332e"/><circle cx="578.9" cy="344.6" r="1.0" fill="#3d332e"/><circle cx="548.3" cy="331.5" r="1.9" fill="#3d332e"/><circle cx="555.9" cy="351.2" r="1.8" fill="#3d332e"/><circle cx="545.3" cy="347.4" r="1.6" fill="#3d332e"/><circle cx="558.5" cy="340.6" r="1.9" fill="#3d332e"/><circle cx="552.0" cy="340.5" r="2.1" fill="#3d332e"/><circle cx="562.4" cy="327.5" r="1.1" fill="#3d332e"/><circle cx="555.5" cy="340.8" r="1.0" fill="#3d332e"/><circle cx="556.3" cy="341.7" r="1.6" fill="#3d332e"/><circle cx="557.7" cy="339.9" r="1.9" fill="#3d332e"/><circle cx="575.4" cy="348.7" r="2.1" fill="#3d332e"/><circle cx="557.1" cy="339.8" r="1.7" fill="#3d332e"/><circle cx="544.7" cy="354.7" r="1.0" fill="#3d332e"/><circle cx="573.7" cy="322.8" r="2.0" fill="#3d332e"/><circle cx="562.8" cy="333.6" r="2.5" fill="#3d332e"/><circle cx="538.7" cy="341.1" r="2.4" fill="#3d332e"/><circle cx="569.5" cy="356.0" r="2.4" fill="#3d332e"/><circle cx="569.7" cy="344.2" r="2.1" fill="#3d332e"/><circle cx="571.1" cy="357.1" r="1.3" fill="#3d332e"/><ellipse cx="800.0" cy="380.0" rx="18.8" ry="22.5" transform="rotate(0.0 800.0 380.0)" fill="#4b423d" opacity="0.4"/><circle cx="802.6" cy="372.9" r="1.7" fill="#3d332e"/><circle cx="807.3" cy="375.2" r="1.2" fill="#3d332e"/><circle cx="788.8" cy="379.5" r="0.9" fill="#3d332e"/><circle cx="802.9" cy="387.6" r="2.4" fill="#3d332e"/><circle cx="790.1" cy="354.9" r="1.1" fill="#3d332e"/><circle cx="801.2" cy="373.6" r="1.7" fill="#3d332e"/><circle cx="792.0" cy="368.9" r="2.3" fill="#3d332e"/><circle cx="783.9" cy="373.0" r="2.3" fill="#3d332e"/><circle cx="819.7" cy="398.2" r="1.9" fill="#3d332e"/><circle cx="783.2" cy="395.8" r="1.3" fill="#3d332e"/><circle cx="817.0" cy="378.8" r="1.4" fill="#3d332e"/><circle cx="801.3" cy="363.1" r="1.1" fill="#3d332e"/><circle cx="799.9" cy="376.4" r="2.2" fill="#3d332e"/><circle cx="799.6" cy="401.9" r="2.5" fill="#3d332e"/><circle cx="783.9" cy="368.4" r="1.3" fill="#3d332e"/><circle cx="802.3" cy="380.0" r="1.1" fill="#3d332e"/><circle cx="789.6" cy="368.9" r="1.7" fill="#3d332e"/><circle cx="804.8" cy="375.6" r="1.2" fill="#3d332e"/><circle cx="799.0" cy="378.3" r="0.8" fill="#3d332e"/><circle cx="796.8" cy="384.9" r="1.4" fill="#3d332e"/><circle cx="802.8" cy="400.3" r="1.8" fill="#3d332e"/><circle cx="805.1" cy="400.7" r="1.6" fill="#3d332e"/><circle cx="815.8" cy="401.5" r="1.2" fill="#3d332e"/><circle cx="802.9" cy="384.7" r="1.9" fill="#3d332e"/><circle cx="814.5" cy="361.7" r="1.5" fill="#3d332e"/><circle cx="799.9" cy="381.3" r="1.9" fill="#3d332e"/><circle cx="788.9" cy="374.5" r="1.9" fill="#3d332e"/><circle cx="777.6" cy="389.9" r="2.0" fill="#3d332e"/><circle cx="800.2" cy="407.9" r="0.9" fill="#3d332e"/><circle cx="787.0" cy="376.9" r="1.2" fill="#3d332e"/><circle cx="819.6" cy="389.0" r="0.8" fill="#3d332e"/><circle cx="777.3" cy="371.0" r="1.0" fill="#3d332e"/><circle cx="805.5" cy="400.1" r="1.7" fill="#3d332e"/><circle cx="786.4" cy="359.8" r="1.1" fill="#3d332e"/><ellipse cx="500.0" cy="450.0" rx="16.5" ry="16.5" transform="rotate(0.0 500.0 450.0)" fill="#4b423d" opacity="0.4"/><circle cx="496.5" cy="458.8" r="0.9" fill="#3d332e"/><circle cx="514.2" cy="438.1" r="2.0" fill="#3d332e"/><circle cx="519.5" cy="450.8" r="2.1" fill="#3d332e"/><circle cx="482.6" cy="453.9" r="1.6" fill="#3d332e"/><circle cx="500.7" cy="454.5" r="1.2" fill="#3d332e"/><circle cx="509.9" cy="452.5" r="2.1" fill="#3d332e"/><circle cx="493.4" cy="431.6" r="2.0" fill="#3d332e"/><circle cx="498.5" cy="464.5" r="1.5" fill="#3d332e"/><circle cx="503.3" cy="436.4" r="1.3" fill="#3d332e"/><circle cx="486.5" cy="433.3" r="1.2" fill="#3d332e"/><circle cx="500.9" cy="449.2" r="1.2" fill="#3d332e"/><circle cx="501.6" cy="467.8" r="2.4" fill="#3d332e"/><circle cx="499.8" cy="439.9" r="2.3" fill="#3d332e"/><circle cx="496.2" cy="457.1" r="2.3" fill="#3d332e"/><circle cx="488.4" cy="437.5" r="1.9" fill="#3d332e"/><circle cx="512.8" cy="448.3" r="2.2" fill="#3d332e"/><circle cx="493.6" cy="431.3" r="1.5" fill="#3d332e"/><circle cx="497.6" cy="435.3" r="1.3" fill="#3d332e"/><circle cx="503.7" cy="465.3" r="0.9" fill="#3d332e"/><circle cx="504.8" cy="447.0" r="0.8" fill="#3d332e"/><circle cx="516.4" cy="463.0" r="1.4" fill="#3d332e"/><circle cx="501.2" cy="451.4" r="0.9" fill="#3d332e"/><circle cx="494.4" cy="435.0" r="2.0" fill="#3d332e"/><circle cx="499.7" cy="446.7" r="1.8" fill="#3d332e"/><circle cx="487.5" cy="464.5" r="2.2" fill="#3d332e"/><circle cx="502.5" cy="447.9" r="2.3" fill="#3d332e"/><circle cx="518.2" cy="439.2" r="1.0" fill="#3d332e"/><circle cx="501.3" cy="454.6" r="0.9" fill="#3d332e"/><circle cx="511.0" cy="434.5" r="1.9" fill="#3d332e"/><circle cx="507.2" cy="435.8" r="1.3" fill="#3d332e"/><circle cx="503.5" cy="452.5" r="2.1" fill="#3d332e"/><circle cx="502.8" cy="459.5" r="1.5" fill="#3d332e"/><circle cx="508.4" cy="451.1" r="1.3" fill="#3d332e"/><circle cx="497.7" cy="439.3" r="1.3" fill="#3d332e"/><ellipse cx="470.0" cy="330.0" rx="15.0" ry="15.0" transform="rotate(0.0 470.0 330.0)" fill="#4b423d" opacity="0.4"/><circle cx="482.1" cy="327.2" r="2.2" fill="#3d332e"/><circle cx="468.7" cy="328.8" r="1.5" fill="#3d332e"/><circle cx="454.6" cy="336.5" r="1.4" fill="#3d332e"/><circle cx="466.4" cy="317.6" r="1.2" fill="#3d332e"/><circle cx="472.4" cy="327.2" r="2.2" fill="#3d332e"/><circle cx="470.1" cy="330.2" r="1.1" fill="#3d332e"/><circle cx="471.5" cy="310.4" r="0.8" fill="#3d332e"/><circle cx="457.9" cy="330.7" r="2.2" fill="#3d332e"/><circle cx="474.9" cy="341.2" r="1.4" fill="#3d332e"/><circle cx="473.8" cy="323.2" r="2.4" fill="#3d332e"/><circle cx="468.6" cy="336.7" r="2.0" fill="#3d332e"/><circle cx="465.7" cy="330.0" r="1.9" fill="#3d332e"/><circle cx="484.8" cy="338.2" r="2.0" fill="#3d332e"/><circle cx="473.3" cy="315.9" r="1.4" fill="#3d332e"/><circle cx="461.5" cy="336.1" r="2.3" fill="#3d332e"/><circle cx="485.8" cy="339.5" r="0.8" fill="#3d332e"/><circle cx="472.1" cy="337.6" r="2.3" fill="#3d332e"/><circle cx="459.9" cy="329.9" r="2.3" fill="#3d332e"/><circle cx="471.2" cy="341.6" r="1.7" fill="#3d332e"/><circle cx="470.5" cy="313.6" r="1.9" fill="#3d332e"/><circle cx="464.7" cy="337.4" r="1.1" fill="#3d332e"/><circle cx="478.3" cy="317.5" r="2.1" fill="#3d332e"/><circle cx="475.4" cy="339.8" r="2.1" fill="#3d332e"/><circle cx="465.9" cy="327.8" r="1.6" fill="#3d332e"/><circle cx="475.5" cy="325.2" r="1.1" fill="#3d332e"/><circle cx="465.0" cy="344.8" r="2.2" fill="#3d332e"/><circle cx="473.1" cy="334.5" r="1.2" fill="#3d332e"/><circle cx="464.1" cy="341.3" r="1.1" fill="#3d332e"/><circle cx="467.1" cy="335.5" r="2.5" fill="#3d332e"/><circle cx="469.5" cy="326.0" r="2.4" fill="#3d332e"/><circle cx="478.2" cy="336.1" r="2.5" fill="#3d332e"/><circle cx="474.5" cy="314.5" r="1.5" fill="#3d332e"/><circle cx="474.8" cy="343.8" r="1.0" fill="#3d332e"/><circle cx="472.8" cy="339.9" r="0.9" fill="#3d332e"/><ellipse cx="690.0" cy="600.0" rx="18.8" ry="18.8" transform="rotate(0.0 690.0 600.0)" fill="#4b423d" opacity="0.4"/><circle cx="672.9" cy="612.6" r="2.0" fill="#3d332e"/><circle cx="671.9" cy="599.9" r="1.6" fill="#3d332e"/><circle cx="701.0" cy="613.7" r="1.5" fill="#3d332e"/><circle cx="688.7" cy="576.7" r="1.5" fill="#3d332e"/><circle cx="671.7" cy="590.8" r="1.5" fill="#3d332e"/><circle cx="692.7" cy="619.7" r="2.3" fill="#3d332e"/><circle cx="692.9" cy="580.7" r="2.2" fill="#3d332e"/><circle cx="682.2" cy="583.4" r="1.6" fill="#3d332e"/><circle cx="683.0" cy="616.7" r="1.0" fill="#3d332e"/><circle cx="671.6" cy="610.2" r="2.0" fill="#3d332e"/><circle cx="683.5" cy="593.1" r="1.5" fill="#3d332e"/><circle cx="672.8" cy="605.0" r="1.5" fill="#3d332e"/><circle cx="679.2" cy="578.8" r="1.1" fill="#3d332e"/><circle cx="678.2" cy="582.7" r="1.5" fill="#3d332e"/><circle cx="665.5" cy="601.6" r="0.9" fill="#3d332e"/><circle cx="683.3" cy="598.1" r="2.1" fill="#3d332e"/><circle cx="704.7" cy="594.2" r="1.0" fill="#3d332e"/><circle cx="675.5" cy="592.7" r="2.0" fill="#3d332e"/><circle cx="671.8" cy="598.6" r="2.2" fill="#3d332e"/><circle cx="676.7" cy="598.2" r="2.4" fill="#3d332e"/><circle cx="694.8" cy="618.6" r="1.5" fill="#3d332e"/><circle cx="690.5" cy="594.3" r="2.5" fill="#3d332e"/><circle cx="687.9" cy="602.6" r="1.3" fill="#3d332e"/><circle cx="689.0" cy="600.7" r="1.5" fill="#3d332e"/><circle cx="672.9" cy="609.3" r="1.4" fill="#3d332e"/><circle cx="689.2" cy="608.7" r="2.1" fill="#3d332e"/><circle cx="704.8" cy="594.1" r="1.2" fill="#3d332e"/><circle cx="694.1" cy="587.7" r="1.2" fill="#3d332e"/><circle cx="704.4" cy="615.2" r="2.2" fill="#3d332e"/><circle cx="680.2" cy="589.0" r="1.8" fill="#3d332e"/><circle cx="693.7" cy="624.1" r="1.4" fill="#3d332e"/><circle cx="676.0" cy="583.4" r="2.2" fill="#3d332e"/><circle cx="679.6" cy="602.1" r="1.7" fill="#3d332e"/><circle cx="705.5" cy="615.6" r="1.4" fill="#3d332e"/><circle cx="765.2" cy="406.1" r="0.9" fill="#3d332e"/><circle cx="529.9" cy="468.5" r="0.7" fill="#3d332e"/><circle cx="431.1" cy="584.7" r="0.8" fill="#3d332e"/><circle cx="526.5" cy="419.6" r="1.0" fill="#3d332e"/><circle cx="598.8" cy="551.5" r="1.2" fill="#3d332e"/><circle cx="572.8" cy="666.0" r="1.4" fill="#3d332e"/><circle cx="452.5" cy="626.4" r="1.5" fill="#3d332e"/><circle cx="738.9" cy="356.2" r="1.4" fill="#3d332e"/><circle cx="679.5" cy="306.9" r="0.5" fill="#3d332e"/><circle cx="805.0" cy="558.8" r="0.8" fill="#3d332e"/><circle cx="470.0" cy="357.1" r="0.8" fill="#3d332e"/><circle cx="735.9" cy="437.2" r="0.7" fill="#3d332e"/><circle cx="786.2" cy="612.1" r="0.7" fill="#3d332e"/><circle cx="781.1" cy="540.1" r="1.4" fill="#3d332e"/><circle cx="693.4" cy="652.3" r="1.4" fill="#3d332e"/><circle cx="760.5" cy="378.6" r="1.3" fill="#3d332e"/><circle cx="639.1" cy="592.6" r="1.0" fill="#3d332e"/><circle cx="777.8" cy="519.1" r="0.8" fill="#3d332e"/><circle cx="522.3" cy="355.8" r="1.0" fill="#3d332e"/><circle cx="453.0" cy="484.6" r="0.7" fill="#3d332e"/><circle cx="623.6" cy="496.8" r="1.1" fill="#3d332e"/><circle cx="770.0" cy="303.6" r="1.4" fill="#3d332e"/><circle cx="614.4" cy="522.1" r="1.2" fill="#3d332e"/><circle cx="761.2" cy="448.4" r="1.0" fill="#3d332e"/><circle cx="808.5" cy="330.6" r="1.2" fill="#3d332e"/><circle cx="680.6" cy="312.2" r="1.2" fill="#3d332e"/><circle cx="698.9" cy="667.1" r="0.9" fill="#3d332e"/><circle cx="816.8" cy="501.7" r="1.0" fill="#3d332e"/><circle cx="783.6" cy="314.3" r="1.3" fill="#3d332e"/><circle cx="676.4" cy="434.1" r="1.4" fill="#3d332e"/><circle cx="574.3" cy="487.5" r="1.1" fill="#3d332e"/><circle cx="733.6" cy="383.8" r="1.0" fill="#3d332e"/><circle cx="596.4" cy="518.7" r="1.4" fill="#3d332e"/><circle cx="545.4" cy="626.3" r="0.9" fill="#3d332e"/><circle cx="628.5" cy="407.8" r="1.1" fill="#3d332e"/><circle cx="814.1" cy="558.2" r="1.4" fill="#3d332e"/><circle cx="560.4" cy="425.6" r="0.8" fill="#3d332e"/><circle cx="661.1" cy="550.5" r="1.4" fill="#3d332e"/><circle cx="445.8" cy="585.0" r="1.5" fill="#3d332e"/><circle cx="644.9" cy="320.5" r="0.8" fill="#3d332e"/><circle cx="432.4" cy="375.6" r="1.5" fill="#3d332e"/><circle cx="669.8" cy="559.6" r="1.4" fill="#3d332e"/><circle cx="788.5" cy="541.4" r="1.2" fill="#3d332e"/><circle cx="677.0" cy="574.7" r="1.2" fill="#3d332e"/><circle cx="698.3" cy="384.5" r="1.2" fill="#3d332e"/><circle cx="610.4" cy="600.7" r="0.6" fill="#3d332e"/><circle cx="501.4" cy="315.5" r="1.4" fill="#3d332e"/><circle cx="790.1" cy="558.7" r="0.9" fill="#3d332e"/><circle cx="754.1" cy="610.1" r="1.1" fill="#3d332e"/><circle cx="531.7" cy="419.7" r="1.0" fill="#3d332e"/><circle cx="555.5" cy="470.3" r="1.2" fill="#3d332e"/><circle cx="797.9" cy="322.5" r="1.1" fill="#3d332e"/><circle cx="445.5" cy="347.7" r="1.4" fill="#3d332e"/><circle cx="656.7" cy="662.0" r="1.0" fill="#3d332e"/><circle cx="435.6" cy="453.1" r="1.2" fill="#3d332e"/><circle cx="799.5" cy="686.4" r="1.0" fill="#3d332e"/><circle cx="592.5" cy="341.1" r="1.2" fill="#3d332e"/><circle cx="513.6" cy="360.6" r="0.5" fill="#3d332e"/><circle cx="431.9" cy="569.7" r="0.6" fill="#3d332e"/><circle cx="810.7" cy="335.6" r="1.5" fill="#3d332e"/><circle cx="480.8" cy="308.0" r="1.3" fill="#3d332e"/><circle cx="525.5" cy="589.3" r="0.7" fill="#3d332e"/><circle cx="449.8" cy="605.2" r="1.3" fill="#3d332e"/><circle cx="767.1" cy="587.8" r="0.6" fill="#3d332e"/><circle cx="677.7" cy="579.7" r="1.0" fill="#3d332e"/><circle cx="797.3" cy="400.8" r="1.6" fill="#3d332e"/><circle cx="712.6" cy="305.5" r="0.5" fill="#3d332e"/><circle cx="686.4" cy="622.2" r="0.6" fill="#3d332e"/><circle cx="552.6" cy="587.7" r="0.7" fill="#3d332e"/><circle cx="769.2" cy="492.1" r="0.6" fill="#3d332e"/><circle cx="574.8" cy="527.0" r="1.0" fill="#3d332e"/><circle cx="696.7" cy="357.9" r="1.4" fill="#3d332e"/><circle cx="573.1" cy="554.4" r="1.2" fill="#3d332e"/><circle cx="594.7" cy="452.6" r="1.4" fill="#3d332e"/><circle cx="802.3" cy="609.4" r="1.1" fill="#3d332e"/><circle cx="545.2" cy="324.8" r="1.6" fill="#3d332e"/><circle cx="707.1" cy="626.2" r="0.9" fill="#3d332e"/><circle cx="668.7" cy="685.1" r="1.4" fill="#3d332e"/><circle cx="666.8" cy="422.3" r="1.0" fill="#3d332e"/><circle cx="779.9" cy="449.0" r="1.3" fill="#3d332e"/><circle cx="667.1" cy="653.2" r="1.4" fill="#3d332e"/><circle cx="541.6" cy="301.7" r="0.8" fill="#3d332e"/><circle cx="596.5" cy="531.6" r="1.4" fill="#3d332e"/><circle cx="779.6" cy="317.6" r="1.4" fill="#3d332e"/><circle cx="749.8" cy="641.8" r="1.1" fill="#3d332e"/><circle cx="537.9" cy="635.5" r="1.4" fill="#3d332e"/><circle cx="699.7" cy="660.1" r="0.9" fill="#3d332e"/><circle cx="463.5" cy="518.6" r="1.4" fill="#3d332e"/><circle cx="509.0" cy="595.8" r="1.5" fill="#3d332e"/><circle cx="522.2" cy="539.5" r="1.2" fill="#3d332e"/><circle cx="613.3" cy="382.2" r="0.8" fill="#3d332e"/><circle cx="725.9" cy="612.1" r="1.0" fill="#3d332e"/><circle cx="464.6" cy="618.0" r="1.3" fill="#3d332e"/><circle cx="521.7" cy="528.8" r="1.5" fill="#3d332e"/><circle cx="778.7" cy="506.1" r="1.0" fill="#3d332e"/><circle cx="662.2" cy="375.3" r="0.7" fill="#3d332e"/><circle cx="501.2" cy="576.5" r="0.9" fill="#3d332e"/><circle cx="652.4" cy="459.2" r="1.1" fill="#3d332e"/><circle cx="488.7" cy="318.5" r="1.6" fill="#3d332e"/><circle cx="577.4" cy="342.7" r="1.2" fill="#3d332e"/><circle cx="740.2" cy="362.4" r="1.2" fill="#3d332e"/><circle cx="565.9" cy="505.1" r="0.5" fill="#3d332e"/><circle cx="443.2" cy="690.2" r="1.5" fill="#3d332e"/><circle cx="621.6" cy="523.9" r="0.8" fill="#3d332e"/><circle cx="737.0" cy="468.4" r="1.5" fill="#3d332e"/><circle cx="732.3" cy="622.8" r="1.6" fill="#3d332e"/><circle cx="530.1" cy="315.9" r="0.7" fill="#3d332e"/><circle cx="501.2" cy="333.9" r="0.6" fill="#3d332e"/><circle cx="649.6" cy="643.2" r="1.0" fill="#3d332e"/><circle cx="803.2" cy="658.6" r="0.6" fill="#3d332e"/><circle cx="665.6" cy="457.2" r="0.6" fill="#3d332e"/><circle cx="808.0" cy="402.1" r="1.1" fill="#3d332e"/><circle cx="682.4" cy="676.9" r="1.2" fill="#3d332e"/><circle cx="584.9" cy="477.2" r="0.7" fill="#3d332e"/><circle cx="810.5" cy="690.7" r="0.7" fill="#3d332e"/><circle cx="445.2" cy="401.6" r="0.9" fill="#3d332e"/><circle cx="785.7" cy="656.5" r="1.4" fill="#3d332e"/><circle cx="448.5" cy="610.0" r="1.3" fill="#3d332e"/><circle cx="684.8" cy="688.3" r="0.6" fill="#3d332e"/><circle cx="487.1" cy="597.7" r="1.5" fill="#3d332e"/><circle cx="696.7" cy="418.4" r="1.2" fill="#3d332e"/><circle cx="728.6" cy="342.4" r="0.9" fill="#3d332e"/><circle cx="531.3" cy="349.8" r="1.0" fill="#3d332e"/><circle cx="496.4" cy="394.7" r="0.7" fill="#3d332e"/><circle cx="697.0" cy="306.0" r="1.3" fill="#3d332e"/><circle cx="506.9" cy="315.2" r="1.5" fill="#3d332e"/><circle cx="516.9" cy="668.1" r="1.5" fill="#3d332e"/><circle cx="780.2" cy="355.9" r="1.0" fill="#3d332e"/><circle cx="468.2" cy="666.0" r="1.4" fill="#3d332e"/><circle cx="677.6" cy="478.8" r="0.9" fill="#3d332e"/><circle cx="754.3" cy="488.7" r="1.2" fill="#3d332e"/><circle cx="486.3" cy="388.1" r="0.6" fill="#3d332e"/><circle cx="711.2" cy="518.5" r="0.7" fill="#3d332e"/><circle cx="773.1" cy="405.7" r="1.0" fill="#3d332e"/><circle cx="491.3" cy="407.5" r="1.4" fill="#3d332e"/><circle cx="561.8" cy="366.9" r="1.0" fill="#3d332e"/><circle cx="555.3" cy="655.9" r="0.6" fill="#3d332e"/><circle cx="815.6" cy="323.3" r="1.5" fill="#3d332e"/><circle cx="693.3" cy="384.0" r="1.0" fill="#3d332e"/><circle cx="542.8" cy="402.3" r="0.7" fill="#3d332e"/><circle cx="573.5" cy="690.5" r="1.6" fill="#3d332e"/><circle cx="794.5" cy="339.3" r="0.8" fill="#3d332e"/><circle cx="783.1" cy="323.6" r="1.3" fill="#3d332e"/><circle cx="545.6" cy="685.6" r="0.5" fill="#3d332e"/><circle cx="748.0" cy="435.0" r="0.7" fill="#3d332e"/><circle cx="430.8" cy="628.1" r="1.1" fill="#3d332e"/><circle cx="503.2" cy="472.1" r="1.5" fill="#3d332e"/><circle cx="516.0" cy="525.5" r="0.7" fill="#3d332e"/><circle cx="501.0" cy="603.8" r="1.3" fill="#3d332e"/><circle cx="507.5" cy="332.2" r="0.6" fill="#3d332e"/><circle cx="669.8" cy="495.7" r="0.8" fill="#3d332e"/><circle cx="511.2" cy="541.7" r="1.3" fill="#3d332e"/><circle cx="749.8" cy="530.1" r="0.7" fill="#3d332e"/><circle cx="455.9" cy="589.0" r="0.9" fill="#3d332e"/><circle cx="714.3" cy="322.8" r="1.4" fill="#3d332e"/><circle cx="562.1" cy="631.9" r="1.5" fill="#3d332e"/><circle cx="624.2" cy="307.1" r="1.5" fill="#3d332e"/><circle cx="617.8" cy="643.7" r="0.8" fill="#3d332e"/><circle cx="503.3" cy="627.8" r="0.9" fill="#3d332e"/><circle cx="494.4" cy="446.9" r="1.2" fill="#3d332e"/><circle cx="431.8" cy="505.3" r="1.0" fill="#3d332e"/><circle cx="633.2" cy="348.5" r="1.3" fill="#3d332e"/><circle cx="751.7" cy="641.1" r="0.9" fill="#3d332e"/><circle cx="710.2" cy="450.9" r="1.3" fill="#3d332e"/><circle cx="454.1" cy="644.0" r="1.5" fill="#3d332e"/><circle cx="625.0" cy="502.7" r="1.1" fill="#3d332e"/><circle cx="641.7" cy="309.1" r="1.6" fill="#3d332e"/><circle cx="518.1" cy="372.7" r="0.6" fill="#3d332e"/><circle cx="528.7" cy="622.1" r="0.5" fill="#3d332e"/><circle cx="468.0" cy="575.7" r="0.7" fill="#3d332e"/><circle cx="437.0" cy="536.6" r="1.1" fill="#3d332e"/><circle cx="636.0" cy="577.1" r="0.6" fill="#3d332e"/><circle cx="772.6" cy="582.8" r="0.5" fill="#3d332e"/><circle cx="478.5" cy="495.0" r="1.1" fill="#3d332e"/><circle cx="540.2" cy="349.0" r="0.9" fill="#3d332e"/><circle cx="484.0" cy="533.6" r="1.4" fill="#3d332e"/><circle cx="488.0" cy="526.1" r="1.3" fill="#3d332e"/><circle cx="494.7" cy="625.6" r="1.5" fill="#3d332e"/><circle cx="583.2" cy="466.3" r="1.4" fill="#3d332e"/><circle cx="637.1" cy="456.5" r="1.5" fill="#3d332e"/><circle cx="736.1" cy="434.0" r="0.8" fill="#3d332e"/><circle cx="562.0" cy="472.2" r="1.6" fill="#3d332e"/><circle cx="746.9" cy="659.7" r="1.4" fill="#3d332e"/><circle cx="764.0" cy="322.0" r="1.1" fill="#3d332e"/><circle cx="807.4" cy="668.2" r="0.8" fill="#3d332e"/><circle cx="596.3" cy="549.6" r="0.9" fill="#3d332e"/><circle cx="639.1" cy="328.2" r="1.0" fill="#3d332e"/><circle cx="628.9" cy="309.2" r="0.7" fill="#3d332e"/><circle cx="812.1" cy="606.2" r="1.5" fill="#3d332e"/><circle cx="679.5" cy="619.0" r="1.5" fill="#3d332e"/><circle cx="778.5" cy="314.5" r="1.2" fill="#3d332e"/><circle cx="534.7" cy="567.6" r="0.8" fill="#3d332e"/><circle cx="643.6" cy="664.3" r="1.2" fill="#3d332e"/><circle cx="528.7" cy="505.5" r="1.0" fill="#3d332e"/><circle cx="804.6" cy="414.0" r="0.8" fill="#3d332e"/><circle cx="685.1" cy="348.3" r="1.2" fill="#3d332e"/><circle cx="806.7" cy="502.9" r="0.8" fill="#3d332e"/><circle cx="613.8" cy="510.8" r="0.7" fill="#3d332e"/><circle cx="478.8" cy="352.6" r="0.8" fill="#3d332e"/><circle cx="590.2" cy="414.3" r="0.8" fill="#3d332e"/><circle cx="464.6" cy="515.7" r="1.4" fill="#3d332e"/><circle cx="670.3" cy="525.1" r="1.2" fill="#3d332e"/><circle cx="509.3" cy="580.2" r="1.0" fill="#3d332e"/><circle cx="645.9" cy="541.8" r="1.0" fill="#3d332e"/><circle cx="552.3" cy="396.2" r="0.7" fill="#3d332e"/><circle cx="631.9" cy="451.6" r="1.1" fill="#3d332e"/><circle cx="434.7" cy="439.6" r="1.4" fill="#3d332e"/><circle cx="524.0" cy="519.8" r="1.0" fill="#3d332e"/><circle cx="542.2" cy="689.1" r="0.8" fill="#3d332e"/><circle cx="734.2" cy="363.3" r="0.6" fill="#3d332e"/><circle cx="773.3" cy="473.9" r="0.6" fill="#3d332e"/><circle cx="582.8" cy="473.9" r="1.3" fill="#3d332e"/><circle cx="473.0" cy="389.5" r="1.6" fill="#3d332e"/><circle cx="721.0" cy="361.7" r="0.9" fill="#3d332e"/><circle cx="568.9" cy="566.4" r="1.2" fill="#3d332e"/><circle cx="764.9" cy="623.7" r="1.1" fill="#3d332e"/><circle cx="721.1" cy="593.1" r="1.3" fill="#3d332e"/><circle cx="617.2" cy="609.5" r="1.3" fill="#3d332e"/><circle cx="790.4" cy="351.0" r="1.5" fill="#3d332e"/><circle cx="431.7" cy="601.9" r="1.1" fill="#3d332e"/><circle cx="626.2" cy="679.4" r="1.1" fill="#3d332e"/><circle cx="594.7" cy="609.0" r="1.5" fill="#3d332e"/><circle cx="669.3" cy="450.2" r="1.0" fill="#3d332e"/><circle cx="610.4" cy="585.2" r="0.8" fill="#3d332e"/><circle cx="583.9" cy="519.3" r="0.9" fill="#3d332e"/><circle cx="556.9" cy="610.3" r="1.4" fill="#3d332e"/><circle cx="626.8" cy="475.5" r="0.7" fill="#3d332e"/><circle cx="549.8" cy="358.0" r="1.1" fill="#3d332e"/><circle cx="659.1" cy="335.6" r="1.5" fill="#3d332e"/><circle cx="557.6" cy="632.5" r="1.4" fill="#3d332e"/><circle cx="807.8" cy="381.3" r="1.0" fill="#3d332e"/><circle cx="788.8" cy="305.2" r="0.6" fill="#3d332e"/><circle cx="652.6" cy="496.5" r="1.5" fill="#3d332e"/><circle cx="734.8" cy="512.6" r="1.6" fill="#3d332e"/><circle cx="633.9" cy="504.3" r="1.3" fill="#3d332e"/><circle cx="583.5" cy="441.6" r="1.2" fill="#3d332e"/><circle cx="568.3" cy="673.5" r="1.2" fill="#3d332e"/><circle cx="636.9" cy="339.9" r="0.9" fill="#3d332e"/><circle cx="588.0" cy="521.6" r="1.1" fill="#3d332e"/><circle cx="776.7" cy="680.0" r="1.0" fill="#3d332e"/><circle cx="603.4" cy="546.5" r="1.6" fill="#3d332e"/><circle cx="565.3" cy="509.3" r="1.4" fill="#3d332e"/><circle cx="497.3" cy="426.0" r="1.6" fill="#3d332e"/><circle cx="755.5" cy="502.4" r="0.6" fill="#3d332e"/><circle cx="782.4" cy="572.1" r="1.4" fill="#3d332e"/><circle cx="820.2" cy="650.0" r="1.0" fill="#3d332e"/><circle cx="491.6" cy="414.9" r="1.1" fill="#3d332e"/><circle cx="628.9" cy="374.9" r="0.7" fill="#3d332e"/><circle cx="678.3" cy="538.0" r="0.9" fill="#3d332e"/><circle cx="821.5" cy="551.1" r="0.5" fill="#3d332e"/><circle cx="592.1" cy="610.5" r="0.8" fill="#3d332e"/><circle cx="702.1" cy="302.5" r="0.8" fill="#3d332e"/><circle cx="761.8" cy="531.4" r="1.2" fill="#3d332e"/><circle cx="507.5" cy="496.7" r="1.1" fill="#3d332e"/><circle cx="534.8" cy="555.2" r="1.1" fill="#3d332e"/><circle cx="822.9" cy="526.8" r="1.0" fill="#3d332e"/><circle cx="477.9" cy="362.6" r="1.3" fill="#3d332e"/><circle cx="472.0" cy="340.3" r="0.7" fill="#3d332e"/><circle cx="635.9" cy="624.5" r="1.2" fill="#3d332e"/><circle cx="747.8" cy="325.4" r="0.5" fill="#3d332e"/><path d="M443 284 Q447 300 449 313 Q454 335 452 358 Q450 375 443 388 Q436 400 432 409 Q428 416 426 425" fill="none" stroke="#a1b7b7" stroke-width="3.4" stroke-linecap="round" stroke-linejoin="round" /><path d="M443 292 L428 299" fill="none" stroke="#a1b7b7" stroke-width="2.6" stroke-linecap="round" stroke-linejoin="round" /><path d="M443 292 L460 300" fill="none" stroke="#a1b7b7" stroke-width="2.6" stroke-linecap="round" stroke-linejoin="round" /><path d="M452 335 L437 340" fill="none" stroke="#a1b7b7" stroke-width="2.6" stroke-linecap="round" stroke-linejoin="round" /><path d="M452 335 L468 347" fill="none" stroke="#a1b7b7" stroke-width="2.6" stroke-linecap="round" stroke-linejoin="round" /><path d="M449 371 L433 373" fill="none" stroke="#a1b7b7" stroke-width="2.6" stroke-linecap="round" stroke-linejoin="round" /><path d="M449 371 L458 388" fill="none" stroke="#a1b7b7" stroke-width="2.6" stroke-linecap="round" stroke-linejoin="round" /><path d="M431 409 L413 409" fill="none" stroke="#a1b7b7" stroke-width="2.6" stroke-linecap="round" stroke-linejoin="round" /><path d="M431 409 L438 426" fill="none" stroke="#a1b7b7" stroke-width="2.6" stroke-linecap="round" stroke-linejoin="round" /><ellipse cx="413.0" cy="308.0" rx="13.0" ry="5.0" transform="rotate(-20.0 413.0 308.0)" fill="#955f35" /><ellipse cx="474.0" cy="313.5" rx="13.0" ry="5.0" transform="rotate(45.0 474.0 313.5)" fill="#955f35" /><ellipse cx="422.6" cy="347.5" rx="13.0" ry="5.0" transform="rotate(-30.0 422.6 347.5)" fill="#955f35" /><ellipse cx="477.0" cy="358.8" rx="13.0" ry="5.0" transform="rotate(60.0 477.0 358.8)" fill="#955f35" /><ellipse cx="417.0" cy="376.7" rx="13.0" ry="5.0" transform="rotate(-15.0 417.0 376.7)" fill="#955f35" /><ellipse cx="465.0" cy="403.0" rx="13.0" ry="5.0" transform="rotate(70.0 465.0 403.0)" fill="#955f35" /><ellipse cx="404.7" cy="409.6" rx="13.0" ry="5.0" transform="rotate(-8.0 404.7 409.6)" fill="#955f35" /><ellipse cx="414.0" cy="430.0" rx="13.0" ry="5.0" transform="rotate(-55.0 414.0 430.0)" fill="#955f35" /><ellipse cx="438.6" cy="440.7" rx="13.0" ry="5.0" transform="rotate(85.0 438.6 440.7)" fill="#955f35" /><path d="M514 366 Q520 400 533 438 Q545 470 552 483 Q565 505 581 523 Q600 542 613 552 Q635 568 655 582" fill="none" stroke="#7a311b" stroke-width="4" stroke-linecap="round" stroke-linejoin="round" /><ellipse cx="519.5" cy="392.5" rx="27.1" ry="6.2" transform="rotate(-101.7 519.5 392.5)" fill="#7a311b" /><ellipse cx="510.5" cy="408.5" rx="17.9" ry="6.2" transform="rotate(-144.1 510.5 408.5)" fill="#7a311b" /><ellipse cx="514.5" cy="440.5" rx="23.9" ry="6.2" transform="rotate(-154.0 514.5 440.5)" fill="#7a311b" /><ellipse cx="531.8" cy="478.0" rx="24.2" ry="6.2" transform="rotate(-160.7 531.8 478.0)" fill="#7a311b" /><ellipse cx="549.0" cy="507.0" rx="24.5" ry="6.2" transform="rotate(-168.2 549.0 507.0)" fill="#7a311b" /><ellipse cx="563.8" cy="533.5" rx="30.9" ry="6.2" transform="rotate(-175.4 563.8 533.5)" fill="#7a311b" /><ellipse cx="589.2" cy="557.5" rx="29.4" ry="6.2" transform="rotate(-175.1 589.2 557.5)" fill="#7a311b" /><ellipse cx="534.5" cy="399.3" rx="18.5" ry="6.2" transform="rotate(-69.4 534.5 399.3)" fill="#7a311b" /><ellipse cx="545.3" cy="435.3" rx="19.9" ry="6.2" transform="rotate(-70.3 545.3 435.3)" fill="#7a311b" /><ellipse cx="558.5" cy="457.8" rx="23.7" ry="6.2" transform="rotate(-74.1 558.5 457.8)" fill="#7a311b" /><ellipse cx="574.5" cy="480.5" rx="22.5" ry="6.2" transform="rotate(-73.2 574.5 480.5)" fill="#7a311b" /><ellipse cx="593.0" cy="505.5" rx="22.9" ry="6.2" transform="rotate(-79.9 593.0 505.5)" fill="#7a311b" /><ellipse cx="622.5" cy="532.5" rx="22.9" ry="6.2" transform="rotate(-79.9 622.5 532.5)" fill="#7a311b" /><ellipse cx="644.0" cy="542.0" rx="30.3" ry="6.2" transform="rotate(-82.4 644.0 542.0)" fill="#7a311b" /><path d="M580.9 303.5C583.2 303.0 585.3 302.4 588.4 302.5C591.5 302.7 597.4 301.8 599.7 304.4C602.1 307.1 601.7 312.3 602.5 318.6C603.3 324.8 603.6 333.8 604.4 342.1C605.2 350.4 608.7 363.8 607.2 368.5C605.8 373.2 600.0 370.2 595.9 370.4C591.9 370.5 587.5 369.9 582.8 369.4C578.0 368.9 572.5 368.6 567.7 367.5C562.8 366.4 557.5 364.9 553.5 362.8C549.6 360.8 545.8 358.1 544.1 355.3C542.5 352.5 542.9 349.2 543.7 345.9C544.4 342.6 546.4 338.2 548.8 335.5C551.3 332.8 555.1 330.5 558.3 329.9C561.4 329.2 564.7 330.2 567.7 331.7C570.7 333.3 574.6 338.6 576.2 339.3C577.7 339.9 578.2 337.7 577.1 335.5C576.0 333.3 572.1 329.1 569.6 326.1C567.1 323.1 562.3 320.3 562.0 317.6C561.7 314.9 565.6 312.1 567.7 310.1C569.7 308.0 572.1 306.5 574.3 305.4C576.5 304.3 578.5 303.9 580.9 303.5Z" fill="#c4542c" /><path d="M607.0 369.0 L583.5 310.0" stroke="#a3401c" stroke-width="0.9" opacity="0.5"/><path d="M607.0 369.0 L590.3 309.2" stroke="#a3401c" stroke-width="0.9" opacity="0.5"/><path d="M607.0 369.0 L600.4 310.9" stroke="#a3401c" stroke-width="0.9" opacity="0.5"/><path d="M607.0 369.0 L585.2 369.4" stroke="#a3401c" stroke-width="0.9" opacity="0.5"/><path d="M607.0 369.0 L571.6 367.7" stroke="#a3401c" stroke-width="0.9" opacity="0.5"/><path d="M607.0 369.0 L558.9 363.4" stroke="#a3401c" stroke-width="0.9" opacity="0.5"/><path d="M607.0 369.0 L550.4 356.7" stroke="#a3401c" stroke-width="0.9" opacity="0.5"/><path d="M607.0 369.0 L550.0 348.2" stroke="#a3401c" stroke-width="0.9" opacity="0.5"/><path d="M607.0 369.0 L554.7 338.9" stroke="#a3401c" stroke-width="0.9" opacity="0.5"/><path d="M607.0 369.0 L566.5 322.7" stroke="#a3401c" stroke-width="0.9" opacity="0.5"/><path d="M607.0 369.0 L571.6 316.0" stroke="#a3401c" stroke-width="0.9" opacity="0.5"/><path d="M458.6 639.0C458.1 636.0 456.6 633.7 457.1 631.3C457.6 628.9 460.3 627.4 461.5 624.8C462.7 622.2 462.4 618.2 464.1 615.7C465.8 613.2 469.5 612.3 471.6 610.0C473.7 607.7 474.6 603.9 477.0 602.0C479.4 600.2 482.9 600.5 486.0 598.8C489.1 597.1 492.1 593.1 495.7 591.6C499.3 590.2 504.0 591.1 507.6 590.0C511.2 588.9 513.7 585.7 517.1 585.0C520.5 584.3 524.7 585.9 527.8 585.9C530.9 585.9 533.4 584.4 535.8 585.1C538.2 585.7 540.3 586.3 542.2 590.0C544.1 593.7 547.0 601.2 547.0 607.5C547.0 613.8 544.9 621.1 542.2 627.6C539.5 634.1 535.7 641.3 530.7 646.4C525.7 651.5 518.7 655.6 512.0 658.0C505.3 660.4 497.0 661.2 490.3 661.0C483.6 660.8 476.7 659.0 471.6 657.0C466.6 655.0 462.2 652.0 460.0 649.0C457.8 646.0 459.1 642.0 458.6 639.0Z" fill="#c27744" /><path d="M467.0 649.0C467.6 646.3 471.8 642.7 475.0 640.8C478.1 638.9 482.9 639.7 486.0 637.7C489.1 635.7 490.6 630.9 493.7 628.8C496.8 626.6 501.9 627.3 504.8 624.8C507.7 622.3 508.4 616.9 511.3 614.0C514.1 611.2 519.1 610.1 522.0 607.5C524.9 604.9 526.0 600.8 528.8 598.6C531.7 596.4 536.4 593.0 539.3 594.5C542.2 596.0 546.0 602.0 546.5 607.5C547.0 613.0 544.8 621.1 542.2 627.6C539.6 634.1 535.7 641.3 530.7 646.4C525.7 651.5 518.7 655.6 512.0 658.0C505.3 660.4 497.0 661.2 490.3 661.0C483.6 660.8 475.5 659.0 471.6 657.0C467.7 655.0 466.4 651.7 467.0 649.0Z" fill="#d98b60" /><path d="M494.0 637.0 L489.0 625.0" fill="none" stroke="#3a2518" stroke-width="1.1" stroke-linecap="round" stroke-linejoin="round" /><circle cx="489.0" cy="625.0" r="1.2" fill="#3a2518"/><path d="M496.8 628.0 L491.8 616.0" fill="none" stroke="#3a2518" stroke-width="1.1" stroke-linecap="round" stroke-linejoin="round" /><circle cx="491.8" cy="616.0" r="1.2" fill="#3a2518"/><path d="M500.7 623.5 L495.7 611.5" fill="none" stroke="#3a2518" stroke-width="1.1" stroke-linecap="round" stroke-linejoin="round" /><circle cx="495.7" cy="611.5" r="1.2" fill="#3a2518"/><path d="M506.4 621.8 L501.4 609.8" fill="none" stroke="#3a2518" stroke-width="1.1" stroke-linecap="round" stroke-linejoin="round" /><circle cx="501.4" cy="609.8" r="1.2" fill="#3a2518"/><path d="M512.6 620.3 L507.6 608.3" fill="none" stroke="#3a2518" stroke-width="1.1" stroke-linecap="round" stroke-linejoin="round" /><circle cx="507.6" cy="608.3" r="1.2" fill="#3a2518"/><path d="M518.4 621.8 L513.4 609.8" fill="none" stroke="#3a2518" stroke-width="1.1" stroke-linecap="round" stroke-linejoin="round" /><circle cx="513.4" cy="609.8" r="1.2" fill="#3a2518"/><path d="M523.0 623.5 L518.0 611.5" fill="none" stroke="#3a2518" stroke-width="1.1" stroke-linecap="round" stroke-linejoin="round" /><circle cx="518.0" cy="611.5" r="1.2" fill="#3a2518"/><path d="M499 674 Q530 668 551 638" fill="none" stroke="#829d9d" stroke-width="5" stroke-linecap="round" stroke-linejoin="round" /><path d="M521 688 Q552 672 558 645" fill="none" stroke="#829d9d" stroke-width="5" stroke-linecap="round" stroke-linejoin="round" /><path d="M525 654 Q552 678 588 685" fill="none" stroke="#829d9d" stroke-width="5" stroke-linecap="round" stroke-linejoin="round" /><path d="M522.7 526.6C521.0 526.8 517.2 529.4 513.2 531.0C509.3 532.7 503.4 535.1 498.8 536.6C494.2 538.1 488.9 539.0 485.5 539.9C482.1 540.8 479.6 541.0 478.3 542.1C477.0 543.2 477.1 544.5 477.7 546.6C478.4 548.6 480.7 551.5 482.2 554.3C483.7 557.1 485.0 560.8 486.6 563.2C488.3 565.6 490.5 567.6 492.2 568.7C493.8 569.8 495.1 570.4 496.6 569.8C498.1 569.3 499.7 567.3 501.0 565.4C502.3 563.6 503.5 560.5 504.4 558.8C505.2 557.0 505.7 554.3 506.0 554.9C506.4 555.4 506.1 559.6 506.6 562.1C507.0 564.6 507.7 567.7 508.8 569.8C509.9 572.0 511.4 573.8 513.2 574.8C515.1 575.9 517.5 576.0 519.9 575.9C522.3 575.9 525.4 575.1 527.6 574.3C529.9 573.5 531.8 572.3 533.2 571.0C534.6 569.7 535.8 568.6 536.0 566.5C536.2 564.5 535.3 561.7 534.3 558.8C533.3 555.8 531.3 552.3 529.9 548.8C528.4 545.3 526.5 540.8 525.4 537.7C524.3 534.5 523.7 531.8 523.2 529.9C522.8 528.1 524.3 526.4 522.7 526.6Z" fill="#6ea1b4" /><path d="M523.0 527.0 L482.8 540.6" stroke="#5a8ea2" stroke-width="0.9" opacity="0.5"/><path d="M523.0 527.0 L482.3 544.6" stroke="#5a8ea2" stroke-width="0.9" opacity="0.5"/><path d="M523.0 527.0 L486.3 551.6" stroke="#5a8ea2" stroke-width="0.9" opacity="0.5"/><path d="M523.0 527.0 L490.3 559.6" stroke="#5a8ea2" stroke-width="0.9" opacity="0.5"/><path d="M523.0 527.0 L495.2 564.6" stroke="#5a8ea2" stroke-width="0.9" opacity="0.5"/><path d="M523.0 527.0 L499.2 565.6" stroke="#5a8ea2" stroke-width="0.9" opacity="0.5"/><path d="M523.0 527.0 L510.2 565.6" stroke="#5a8ea2" stroke-width="0.9" opacity="0.5"/><path d="M523.0 527.0 L514.2 570.1" stroke="#5a8ea2" stroke-width="0.9" opacity="0.5"/><path d="M523.0 527.0 L520.2 571.1" stroke="#5a8ea2" stroke-width="0.9" opacity="0.5"/><path d="M523.0 527.0 L527.2 569.6" stroke="#5a8ea2" stroke-width="0.9" opacity="0.5"/><path d="M523.0 527.0 L532.2 566.6" stroke="#5a8ea2" stroke-width="0.9" opacity="0.5"/><path d="M523.0 527.0 L534.7 562.6" stroke="#5a8ea2" stroke-width="0.9" opacity="0.5"/><path d="M654.9 587.0C652.9 587.6 649.1 592.2 644.9 594.0C640.7 595.7 634.9 596.7 629.9 597.5C624.9 598.2 619.1 597.9 615.0 598.5C610.8 599.0 607.1 599.4 605.0 600.9C602.9 602.5 602.3 604.9 602.5 607.9C602.7 610.9 604.4 615.4 606.0 618.9C607.6 622.4 610.5 625.4 612.0 628.9C613.5 632.4 613.6 636.7 615.0 639.9C616.3 643.0 618.1 646.5 620.0 647.9C621.8 649.2 623.8 649.4 625.9 647.9C628.1 646.4 630.8 642.4 632.9 638.9C635.1 635.4 637.6 630.1 638.9 626.9C640.2 623.7 640.6 619.2 640.9 619.9C641.2 620.6 640.6 627.1 640.9 630.9C641.2 634.7 641.6 639.0 642.9 642.9C644.2 646.7 646.7 651.6 648.9 653.8C651.1 656.1 653.2 656.5 655.9 656.3C658.5 656.2 661.9 655.1 664.9 652.8C667.9 650.6 671.3 646.9 673.8 642.9C676.3 638.9 679.2 632.7 679.8 628.9C680.5 625.1 679.7 622.9 677.8 619.9C676.0 616.9 671.7 614.4 668.9 610.9C666.0 607.4 662.9 602.4 660.9 599.0C658.9 595.5 657.9 592.0 656.9 590.0C655.9 588.0 656.9 586.3 654.9 587.0Z" fill="#9f7659" /><path d="M655.0 587.0 L610.0 599.6" stroke="#8a6246" stroke-width="0.9" opacity="0.5"/><path d="M655.0 587.0 L607.7 605.8" stroke="#8a6246" stroke-width="0.9" opacity="0.5"/><path d="M655.0 587.0 L610.9 615.7" stroke="#8a6246" stroke-width="0.9" opacity="0.5"/><path d="M655.0 587.0 L616.3 624.7" stroke="#8a6246" stroke-width="0.9" opacity="0.5"/><path d="M655.0 587.0 L619.0 634.6" stroke="#8a6246" stroke-width="0.9" opacity="0.5"/><path d="M655.0 587.0 L623.5 641.8" stroke="#8a6246" stroke-width="0.9" opacity="0.5"/><path d="M655.0 587.0 L628.8 641.8" stroke="#8a6246" stroke-width="0.9" opacity="0.5"/><path d="M655.0 587.0 L644.1 637.3" stroke="#8a6246" stroke-width="0.9" opacity="0.5"/><path d="M655.0 587.0 L649.5 647.2" stroke="#8a6246" stroke-width="0.9" opacity="0.5"/><path d="M655.0 587.0 L655.8 649.4" stroke="#8a6246" stroke-width="0.9" opacity="0.5"/><path d="M655.0 587.0 L663.9 646.3" stroke="#8a6246" stroke-width="0.9" opacity="0.5"/><path d="M655.0 587.0 L672.0 637.3" stroke="#8a6246" stroke-width="0.9" opacity="0.5"/><path d="M655.0 587.0 L677.3 624.7" stroke="#8a6246" stroke-width="0.9" opacity="0.5"/><path d="M596 591.6 Q585 592 572.7 589.4 M596 591.6 Q588 598 577 601.6 M596 591.6 Q588 583 580.5 580.5" fill="none" stroke="#bdbcaa" stroke-width="2" stroke-linecap="round" stroke-linejoin="round" /><path d="M590.4 609.3 Q584 620 581.6 630 M590.4 609.3 Q590 622 593.8 633.7 M590.4 609.3 Q596 620 602.6 626" fill="none" stroke="#bdbcaa" stroke-width="2" stroke-linecap="round" stroke-linejoin="round" /><circle cx="580.5" cy="580.5" r="3.3" fill="#e6e4d6"/><circle cx="602.6" cy="626.0" r="3.3" fill="#e6e4d6"/><path d="M573.0 581.6C573.9 583.3 573.9 584.7 573.0 586.4C572.1 588.1 569.7 590.7 567.4 592.0C565.1 593.3 561.6 593.8 559.4 594.0C557.2 594.2 555.3 593.9 554.2 593.2C553.1 592.5 552.9 591.0 553.0 590.0C553.1 589.0 555.0 588.2 555.0 587.2C555.0 586.2 553.0 585.1 553.0 584.0C553.0 582.9 555.0 581.8 555.0 580.8C555.0 579.8 553.1 579.0 553.0 578.0C552.9 577.0 553.1 575.5 554.2 574.8C555.3 574.1 557.2 573.8 559.4 574.0C561.6 574.2 565.1 574.7 567.4 576.0C569.7 577.3 572.1 579.9 573.0 581.6Z" fill="#d5d4bf" /><path d="M575.0 600.1C576.4 601.5 576.7 602.8 576.3 604.7C575.8 606.6 574.2 609.8 572.3 611.6C570.5 613.4 567.2 614.8 565.1 615.6C563.0 616.4 561.1 616.5 559.9 616.2C558.7 615.8 558.0 614.4 557.9 613.4C557.8 612.4 559.4 611.1 559.1 610.2C558.8 609.2 556.6 608.6 556.3 607.6C556.1 606.6 557.7 604.9 557.4 604.0C557.2 603.0 555.2 602.7 554.8 601.8C554.4 600.9 554.3 599.3 555.1 598.4C556.0 597.5 557.8 596.6 559.9 596.3C562.1 595.9 565.7 595.5 568.2 596.1C570.7 596.8 573.7 598.7 575.0 600.1Z" fill="#d5d4bf" /><path d="M576.3 630.2C578.3 629.6 579.7 629.8 581.3 631.1C582.9 632.4 585.2 635.3 586.1 637.9C587.0 640.5 586.9 644.2 586.7 646.5C586.5 648.9 585.8 650.8 584.9 651.8C584.0 652.8 582.4 652.8 581.4 652.4C580.4 652.1 579.9 650.0 578.9 649.9C577.8 649.7 576.3 651.5 575.2 651.3C574.1 651.1 573.3 648.9 572.2 648.7C571.2 648.5 570.0 650.3 569.0 650.2C567.9 650.2 566.4 649.6 565.9 648.4C565.4 647.2 565.4 645.1 566.0 642.9C566.6 640.7 567.8 637.1 569.5 635.0C571.3 632.9 574.4 630.9 576.3 630.2Z" fill="#d5d4bf" /><path d="M594.6 635.1C596.2 633.6 597.6 633.2 599.7 633.7C601.8 634.2 605.3 636.0 607.2 638.0C609.2 640.1 610.8 643.7 611.7 646.0C612.5 648.3 612.7 650.4 612.3 651.7C611.9 653.1 610.3 653.8 609.2 653.9C608.1 654.1 606.7 652.3 605.7 652.6C604.6 652.9 604.0 655.3 602.8 655.6C601.7 655.9 599.9 654.1 598.9 654.4C597.8 654.7 597.5 656.9 596.5 657.3C595.4 657.8 593.7 657.9 592.7 657.0C591.7 656.0 590.8 654.1 590.4 651.7C590.0 649.3 589.5 645.4 590.2 642.6C590.9 639.8 593.0 636.5 594.6 635.1Z" fill="#d5d4bf" /><path d="M486 464 Q496 495 491.6 526.8 M465 483 Q481 501.5 491.6 525.5" fill="none" stroke="#bdbcaa" stroke-width="2.5" stroke-linecap="round" stroke-linejoin="round" /><path d="M487.0 459.7C485.3 462.5 483.3 463.7 480.0 463.8C476.6 463.9 470.8 462.5 467.0 460.3C463.2 458.0 459.4 453.3 457.2 450.2C455.1 447.1 453.7 444.1 454.0 441.9C454.3 439.6 456.7 437.5 459.1 436.5C461.6 435.5 466.1 437.2 468.5 435.8C471.0 434.4 471.8 429.6 473.9 428.0C475.9 426.4 478.9 425.4 481.1 426.2C483.2 427.1 485.1 429.8 486.7 433.2C488.2 436.6 490.5 442.3 490.5 446.7C490.6 451.1 488.8 456.8 487.0 459.7Z" fill="#d5d4bf" /><path d="M466.5 479.7C466.6 482.8 465.6 484.6 463.1 486.4C460.6 488.1 455.5 490.0 451.4 490.1C447.4 490.3 442.2 488.5 439.0 487.3C435.8 486.0 433.3 484.4 432.4 482.5C431.5 480.6 432.3 477.8 433.7 475.9C435.0 473.9 439.3 473.0 440.5 470.7C441.7 468.4 439.9 464.3 440.7 462.1C441.5 459.8 443.3 457.5 445.3 457.1C447.4 456.7 450.2 457.8 453.1 459.7C456.0 461.5 460.5 464.7 462.7 468.0C464.9 471.4 466.4 476.7 466.5 479.7Z" fill="#d5d4bf" /><path d="M483.3 451.4 L474.3 435.8" fill="none" stroke="#e2e3d2" stroke-width="1.2" stroke-linecap="round" stroke-linejoin="round" opacity="0.7"/><path d="M479.0 453.9 L470.0 438.3" fill="none" stroke="#e2e3d2" stroke-width="1.2" stroke-linecap="round" stroke-linejoin="round" opacity="0.7"/><path d="M474.7 456.4 L465.7 440.8" fill="none" stroke="#e2e3d2" stroke-width="1.2" stroke-linecap="round" stroke-linejoin="round" opacity="0.7"/><path d="M460.4 475.2 L444.4 467.0" fill="none" stroke="#e2e3d2" stroke-width="1.2" stroke-linecap="round" stroke-linejoin="round" opacity="0.7"/><path d="M458.1 479.6 L442.1 471.5" fill="none" stroke="#e2e3d2" stroke-width="1.2" stroke-linecap="round" stroke-linejoin="round" opacity="0.7"/><path d="M455.9 484.1 L439.8 475.9" fill="none" stroke="#e2e3d2" stroke-width="1.2" stroke-linecap="round" stroke-linejoin="round" opacity="0.7"/><path d="M722 500 Q718 580 724 655 M724 655 Q745 600 788 564 M724 655 Q735 630 735 639 M739 599 Q733 625 724 640 M706 615 Q715 630 724 650 M735 639 Q780 635 821 593" fill="none" stroke="#c6ae7c" stroke-width="3.6" stroke-linecap="round" stroke-linejoin="round" /><path d="M0 0C2.4 -26.0 65.7 -26.0 119.5 0C65.7 26.0 2.4 26.0 0 0Z" transform="translate(657.0 506.0) rotate(65.8)" fill="#c7af7f" /><path d="M0 0C1.8 -15.5 49.6 -15.5 90.2 0C49.6 15.5 1.8 15.5 0 0Z" transform="translate(745.0 509.0) rotate(93.8)" fill="#c7af7f" /><path d="M0 0C2.0 -24.8 53.8 -24.8 97.8 0C53.8 24.8 2.0 24.8 0 0Z" transform="translate(821.0 592.5) rotate(151.6)" fill="#c7af7f" /><path d="M661.9 516.9 L706.0 615.0" fill="none" stroke="#d9c596" stroke-width="0.9" stroke-linecap="round" stroke-linejoin="round" /><path d="M744.4 518.0 L739.0 599.0" fill="none" stroke="#d9c596" stroke-width="0.9" stroke-linecap="round" stroke-linejoin="round" /><path d="M812.4 597.1 L735.0 639.0" fill="none" stroke="#d9c596" stroke-width="0.9" stroke-linecap="round" stroke-linejoin="round" /><circle cx="695.4" cy="588.6" r="0.8" fill="#e3d09c"/><circle cx="691.1" cy="573.2" r="0.8" fill="#e3d09c"/><circle cx="661.6" cy="553.0" r="0.8" fill="#e3d09c"/><circle cx="705.9" cy="613.3" r="0.8" fill="#e3d09c"/><circle cx="686.4" cy="589.8" r="0.8" fill="#e3d09c"/><circle cx="657.2" cy="506.5" r="0.8" fill="#e3d09c"/><circle cx="664.6" cy="524.0" r="0.8" fill="#e3d09c"/><circle cx="663.8" cy="550.2" r="0.8" fill="#e3d09c"/><circle cx="686.4" cy="540.6" r="0.8" fill="#e3d09c"/><circle cx="688.5" cy="554.3" r="0.8" fill="#e3d09c"/><circle cx="660.1" cy="547.6" r="0.8" fill="#e3d09c"/><circle cx="671.1" cy="531.3" r="0.8" fill="#e3d09c"/><circle cx="677.9" cy="588.1" r="0.8" fill="#e3d09c"/><circle cx="663.2" cy="520.8" r="0.8" fill="#e3d09c"/><circle cx="681.1" cy="532.0" r="0.8" fill="#e3d09c"/><circle cx="682.6" cy="531.9" r="0.8" fill="#e3d09c"/><circle cx="696.3" cy="567.6" r="0.8" fill="#e3d09c"/><circle cx="698.7" cy="560.0" r="0.8" fill="#e3d09c"/><circle cx="657.2" cy="521.8" r="0.8" fill="#e3d09c"/><circle cx="694.9" cy="602.2" r="0.8" fill="#e3d09c"/><circle cx="658.4" cy="509.9" r="0.8" fill="#e3d09c"/><circle cx="669.0" cy="549.5" r="0.8" fill="#e3d09c"/><circle cx="677.3" cy="561.4" r="0.8" fill="#e3d09c"/><circle cx="691.4" cy="575.6" r="0.8" fill="#e3d09c"/><circle cx="690.6" cy="545.4" r="0.8" fill="#e3d09c"/><circle cx="685.1" cy="535.0" r="0.8" fill="#e3d09c"/><circle cx="672.2" cy="518.0" r="0.8" fill="#e3d09c"/><circle cx="663.1" cy="546.3" r="0.8" fill="#e3d09c"/><circle cx="671.3" cy="517.8" r="0.8" fill="#e3d09c"/><circle cx="662.5" cy="516.0" r="0.8" fill="#e3d09c"/><circle cx="663.1" cy="540.8" r="0.8" fill="#e3d09c"/><circle cx="666.6" cy="523.7" r="0.8" fill="#e3d09c"/><circle cx="680.0" cy="589.3" r="0.8" fill="#e3d09c"/><circle cx="672.4" cy="518.2" r="0.8" fill="#e3d09c"/><circle cx="704.9" cy="603.9" r="0.8" fill="#e3d09c"/><circle cx="674.5" cy="575.4" r="0.8" fill="#e3d09c"/><circle cx="699.1" cy="579.6" r="0.8" fill="#e3d09c"/><circle cx="656.4" cy="522.9" r="0.8" fill="#e3d09c"/><circle cx="661.4" cy="554.6" r="0.8" fill="#e3d09c"/><circle cx="666.2" cy="538.8" r="0.8" fill="#e3d09c"/><circle cx="669.6" cy="515.9" r="0.8" fill="#e3d09c"/><circle cx="698.0" cy="552.4" r="0.8" fill="#e3d09c"/><circle cx="678.6" cy="586.7" r="0.8" fill="#e3d09c"/><circle cx="661.4" cy="556.4" r="0.8" fill="#e3d09c"/><circle cx="694.4" cy="594.4" r="0.8" fill="#e3d09c"/><circle cx="665.1" cy="553.4" r="0.8" fill="#e3d09c"/><circle cx="705.9" cy="609.5" r="0.8" fill="#e3d09c"/><circle cx="703.9" cy="574.8" r="0.8" fill="#e3d09c"/><circle cx="660.5" cy="518.0" r="0.8" fill="#e3d09c"/><circle cx="684.1" cy="564.5" r="0.8" fill="#e3d09c"/><circle cx="677.4" cy="543.5" r="0.8" fill="#e3d09c"/><circle cx="682.6" cy="552.2" r="0.8" fill="#e3d09c"/><circle cx="660.0" cy="512.4" r="0.8" fill="#e3d09c"/><circle cx="692.2" cy="564.7" r="0.8" fill="#e3d09c"/><circle cx="689.5" cy="591.3" r="0.8" fill="#e3d09c"/><circle cx="658.1" cy="508.4" r="0.8" fill="#e3d09c"/><circle cx="662.8" cy="562.6" r="0.8" fill="#e3d09c"/><circle cx="688.3" cy="568.6" r="0.8" fill="#e3d09c"/><circle cx="705.3" cy="612.7" r="0.8" fill="#e3d09c"/><circle cx="661.2" cy="552.3" r="0.8" fill="#e3d09c"/><circle cx="674.2" cy="547.1" r="0.8" fill="#e3d09c"/><circle cx="668.4" cy="542.9" r="0.8" fill="#e3d09c"/><circle cx="678.0" cy="535.0" r="0.8" fill="#e3d09c"/><circle cx="703.6" cy="613.2" r="0.8" fill="#e3d09c"/><circle cx="686.6" cy="535.2" r="0.8" fill="#e3d09c"/><circle cx="692.6" cy="588.1" r="0.8" fill="#e3d09c"/><circle cx="671.1" cy="553.0" r="0.8" fill="#e3d09c"/><circle cx="682.3" cy="578.0" r="0.8" fill="#e3d09c"/><circle cx="690.9" cy="573.4" r="0.8" fill="#e3d09c"/><circle cx="687.8" cy="583.8" r="0.8" fill="#e3d09c"/><circle cx="656.9" cy="535.9" r="0.8" fill="#e3d09c"/><circle cx="685.9" cy="549.5" r="0.8" fill="#e3d09c"/><circle cx="682.8" cy="584.8" r="0.8" fill="#e3d09c"/><circle cx="661.1" cy="529.9" r="0.8" fill="#e3d09c"/><circle cx="695.5" cy="595.2" r="0.8" fill="#e3d09c"/><circle cx="660.5" cy="544.0" r="0.8" fill="#e3d09c"/><circle cx="685.3" cy="582.1" r="0.8" fill="#e3d09c"/><circle cx="664.0" cy="524.7" r="0.8" fill="#e3d09c"/><circle cx="658.6" cy="524.2" r="0.8" fill="#e3d09c"/><circle cx="694.0" cy="576.3" r="0.8" fill="#e3d09c"/><circle cx="662.0" cy="518.8" r="0.8" fill="#e3d09c"/><circle cx="686.1" cy="594.5" r="0.8" fill="#e3d09c"/><circle cx="669.7" cy="561.9" r="0.8" fill="#e3d09c"/><circle cx="673.6" cy="523.9" r="0.8" fill="#e3d09c"/><circle cx="692.5" cy="597.0" r="0.8" fill="#e3d09c"/><circle cx="669.4" cy="525.7" r="0.8" fill="#e3d09c"/><circle cx="663.2" cy="528.6" r="0.8" fill="#e3d09c"/><circle cx="696.5" cy="602.3" r="0.8" fill="#e3d09c"/><circle cx="662.1" cy="530.7" r="0.8" fill="#e3d09c"/><circle cx="686.5" cy="578.4" r="0.8" fill="#e3d09c"/><circle cx="682.5" cy="570.6" r="0.8" fill="#e3d09c"/><circle cx="657.5" cy="516.2" r="0.8" fill="#e3d09c"/><circle cx="706.0" cy="614.4" r="0.8" fill="#e3d09c"/><circle cx="669.8" cy="516.0" r="0.8" fill="#e3d09c"/><circle cx="699.6" cy="561.0" r="0.8" fill="#e3d09c"/><circle cx="658.0" cy="515.1" r="0.8" fill="#e3d09c"/><circle cx="678.1" cy="529.9" r="0.8" fill="#e3d09c"/><circle cx="674.1" cy="542.5" r="0.8" fill="#e3d09c"/><circle cx="687.4" cy="585.5" r="0.8" fill="#e3d09c"/><circle cx="684.6" cy="594.8" r="0.8" fill="#e3d09c"/><circle cx="670.2" cy="554.0" r="0.8" fill="#e3d09c"/><circle cx="656.9" cy="530.9" r="0.8" fill="#e3d09c"/><circle cx="664.0" cy="515.5" r="0.8" fill="#e3d09c"/><circle cx="664.5" cy="512.6" r="0.8" fill="#e3d09c"/><circle cx="662.9" cy="516.5" r="0.8" fill="#e3d09c"/><circle cx="705.8" cy="613.4" r="0.8" fill="#e3d09c"/><circle cx="693.7" cy="598.0" r="0.8" fill="#e3d09c"/><circle cx="674.3" cy="542.4" r="0.8" fill="#e3d09c"/><circle cx="700.1" cy="563.4" r="0.8" fill="#e3d09c"/><circle cx="670.9" cy="550.6" r="0.8" fill="#e3d09c"/><circle cx="702.8" cy="583.3" r="0.8" fill="#e3d09c"/><circle cx="692.1" cy="558.7" r="0.8" fill="#e3d09c"/><circle cx="679.5" cy="580.8" r="0.8" fill="#e3d09c"/><circle cx="690.4" cy="551.9" r="0.8" fill="#e3d09c"/><circle cx="703.2" cy="593.8" r="0.8" fill="#e3d09c"/><circle cx="663.8" cy="513.2" r="0.8" fill="#e3d09c"/><circle cx="656.0" cy="529.6" r="0.8" fill="#e3d09c"/><circle cx="686.6" cy="541.4" r="0.8" fill="#e3d09c"/><circle cx="702.1" cy="610.2" r="0.8" fill="#e3d09c"/><circle cx="693.6" cy="585.4" r="0.8" fill="#e3d09c"/><circle cx="684.4" cy="569.3" r="0.8" fill="#e3d09c"/><circle cx="656.3" cy="535.6" r="0.8" fill="#e3d09c"/><circle cx="700.7" cy="610.2" r="0.8" fill="#e3d09c"/><circle cx="693.5" cy="604.3" r="0.8" fill="#e3d09c"/><circle cx="659.4" cy="508.2" r="0.8" fill="#e3d09c"/><circle cx="701.8" cy="605.6" r="0.8" fill="#e3d09c"/><circle cx="685.1" cy="583.0" r="0.8" fill="#e3d09c"/><circle cx="693.3" cy="574.7" r="0.8" fill="#e3d09c"/><circle cx="672.7" cy="553.1" r="0.8" fill="#e3d09c"/><circle cx="693.1" cy="595.8" r="0.8" fill="#e3d09c"/><circle cx="700.7" cy="601.1" r="0.8" fill="#e3d09c"/><circle cx="667.6" cy="538.4" r="0.8" fill="#e3d09c"/><circle cx="698.9" cy="607.7" r="0.8" fill="#e3d09c"/><circle cx="691.0" cy="572.8" r="0.8" fill="#e3d09c"/><circle cx="664.9" cy="530.9" r="0.8" fill="#e3d09c"/><circle cx="669.4" cy="526.5" r="0.8" fill="#e3d09c"/><circle cx="680.6" cy="569.9" r="0.8" fill="#e3d09c"/><circle cx="688.5" cy="557.8" r="0.8" fill="#e3d09c"/><circle cx="691.8" cy="566.3" r="0.8" fill="#e3d09c"/><circle cx="674.9" cy="568.6" r="0.8" fill="#e3d09c"/><circle cx="686.3" cy="553.7" r="0.8" fill="#e3d09c"/><circle cx="701.8" cy="607.5" r="0.8" fill="#e3d09c"/><circle cx="697.7" cy="563.0" r="0.8" fill="#e3d09c"/><circle cx="659.1" cy="513.4" r="0.8" fill="#e3d09c"/><circle cx="665.6" cy="515.5" r="0.8" fill="#e3d09c"/><circle cx="692.2" cy="586.8" r="0.8" fill="#e3d09c"/><circle cx="704.5" cy="599.5" r="0.8" fill="#e3d09c"/><circle cx="685.2" cy="537.6" r="0.8" fill="#e3d09c"/><circle cx="670.9" cy="527.0" r="0.8" fill="#e3d09c"/><circle cx="671.7" cy="534.3" r="0.8" fill="#e3d09c"/><circle cx="702.0" cy="603.3" r="0.8" fill="#e3d09c"/><circle cx="705.5" cy="614.6" r="0.8" fill="#e3d09c"/><circle cx="657.3" cy="535.4" r="0.8" fill="#e3d09c"/><circle cx="697.0" cy="607.0" r="0.8" fill="#e3d09c"/><circle cx="658.3" cy="521.1" r="0.8" fill="#e3d09c"/><circle cx="705.9" cy="612.0" r="0.8" fill="#e3d09c"/><circle cx="705.0" cy="599.6" r="0.8" fill="#e3d09c"/><circle cx="683.0" cy="537.1" r="0.8" fill="#e3d09c"/><circle cx="659.8" cy="511.0" r="0.8" fill="#e3d09c"/><circle cx="656.8" cy="532.5" r="0.8" fill="#e3d09c"/><circle cx="668.7" cy="531.2" r="0.8" fill="#e3d09c"/><circle cx="660.2" cy="541.9" r="0.8" fill="#e3d09c"/><circle cx="680.3" cy="528.4" r="0.8" fill="#e3d09c"/><circle cx="701.6" cy="608.9" r="0.8" fill="#e3d09c"/><circle cx="689.2" cy="548.6" r="0.8" fill="#e3d09c"/><circle cx="686.2" cy="592.2" r="0.8" fill="#e3d09c"/><circle cx="696.7" cy="586.4" r="0.8" fill="#e3d09c"/><circle cx="666.4" cy="534.1" r="0.8" fill="#e3d09c"/><circle cx="684.8" cy="576.4" r="0.8" fill="#e3d09c"/><circle cx="686.3" cy="577.9" r="0.8" fill="#e3d09c"/><circle cx="701.9" cy="605.9" r="0.8" fill="#e3d09c"/><circle cx="658.0" cy="509.1" r="0.8" fill="#e3d09c"/><circle cx="660.7" cy="537.4" r="0.8" fill="#e3d09c"/><circle cx="679.5" cy="536.4" r="0.8" fill="#e3d09c"/><circle cx="673.5" cy="541.3" r="0.8" fill="#e3d09c"/><circle cx="687.1" cy="560.1" r="0.8" fill="#e3d09c"/><circle cx="657.7" cy="519.1" r="0.8" fill="#e3d09c"/><circle cx="704.2" cy="603.2" r="0.8" fill="#e3d09c"/><circle cx="661.3" cy="515.0" r="0.8" fill="#e3d09c"/><circle cx="691.6" cy="563.4" r="0.8" fill="#e3d09c"/><circle cx="692.1" cy="596.8" r="0.8" fill="#e3d09c"/><circle cx="698.1" cy="592.5" r="0.8" fill="#e3d09c"/><circle cx="682.8" cy="584.2" r="0.8" fill="#e3d09c"/><circle cx="685.2" cy="533.8" r="0.8" fill="#e3d09c"/><circle cx="697.3" cy="580.2" r="0.8" fill="#e3d09c"/><circle cx="697.3" cy="564.8" r="0.8" fill="#e3d09c"/><circle cx="669.7" cy="554.7" r="0.8" fill="#e3d09c"/><circle cx="684.4" cy="596.2" r="0.8" fill="#e3d09c"/><circle cx="678.6" cy="564.5" r="0.8" fill="#e3d09c"/><circle cx="694.9" cy="597.4" r="0.8" fill="#e3d09c"/><circle cx="698.3" cy="576.3" r="0.8" fill="#e3d09c"/><circle cx="707.1" cy="595.7" r="0.8" fill="#e3d09c"/><circle cx="685.8" cy="561.2" r="0.8" fill="#e3d09c"/><circle cx="694.3" cy="558.9" r="0.8" fill="#e3d09c"/><circle cx="666.9" cy="524.9" r="0.8" fill="#e3d09c"/><circle cx="689.8" cy="559.2" r="0.8" fill="#e3d09c"/><circle cx="662.4" cy="522.4" r="0.8" fill="#e3d09c"/><circle cx="682.2" cy="529.6" r="0.8" fill="#e3d09c"/><circle cx="674.0" cy="568.1" r="0.8" fill="#e3d09c"/><circle cx="699.8" cy="587.0" r="0.8" fill="#e3d09c"/><circle cx="686.5" cy="535.3" r="0.8" fill="#e3d09c"/><circle cx="659.8" cy="523.9" r="0.8" fill="#e3d09c"/><circle cx="691.7" cy="596.6" r="0.8" fill="#e3d09c"/><circle cx="701.0" cy="592.7" r="0.8" fill="#e3d09c"/><circle cx="670.5" cy="518.5" r="0.8" fill="#e3d09c"/><circle cx="702.9" cy="583.0" r="0.8" fill="#e3d09c"/><circle cx="688.4" cy="581.8" r="0.8" fill="#e3d09c"/><circle cx="659.2" cy="540.5" r="0.8" fill="#e3d09c"/><circle cx="705.2" cy="603.2" r="0.8" fill="#e3d09c"/><circle cx="687.7" cy="585.0" r="0.8" fill="#e3d09c"/><circle cx="683.3" cy="549.2" r="0.8" fill="#e3d09c"/><circle cx="705.5" cy="614.3" r="0.8" fill="#e3d09c"/><circle cx="684.2" cy="567.7" r="0.8" fill="#e3d09c"/><circle cx="697.6" cy="591.2" r="0.8" fill="#e3d09c"/><circle cx="658.6" cy="511.2" r="0.8" fill="#e3d09c"/><circle cx="666.6" cy="561.4" r="0.8" fill="#e3d09c"/><circle cx="697.0" cy="583.1" r="0.8" fill="#e3d09c"/><circle cx="705.7" cy="600.4" r="0.8" fill="#e3d09c"/><circle cx="657.0" cy="518.0" r="0.8" fill="#e3d09c"/><circle cx="658.9" cy="512.8" r="0.8" fill="#e3d09c"/><circle cx="674.3" cy="528.1" r="0.8" fill="#e3d09c"/><circle cx="696.5" cy="580.6" r="0.8" fill="#e3d09c"/><circle cx="683.3" cy="539.5" r="0.8" fill="#e3d09c"/><circle cx="699.7" cy="583.0" r="0.8" fill="#e3d09c"/><circle cx="659.8" cy="509.8" r="0.8" fill="#e3d09c"/><circle cx="666.8" cy="562.4" r="0.8" fill="#e3d09c"/><circle cx="676.8" cy="563.4" r="0.8" fill="#e3d09c"/><circle cx="675.7" cy="534.5" r="0.8" fill="#e3d09c"/><circle cx="667.7" cy="558.0" r="0.8" fill="#e3d09c"/><circle cx="678.4" cy="542.8" r="0.8" fill="#e3d09c"/><circle cx="705.0" cy="592.0" r="0.8" fill="#e3d09c"/><circle cx="662.4" cy="548.7" r="0.8" fill="#e3d09c"/><circle cx="657.3" cy="514.8" r="0.8" fill="#e3d09c"/><circle cx="696.3" cy="575.9" r="0.8" fill="#e3d09c"/><circle cx="678.5" cy="549.1" r="0.8" fill="#e3d09c"/><circle cx="673.0" cy="545.0" r="0.8" fill="#e3d09c"/><circle cx="681.3" cy="585.2" r="0.8" fill="#e3d09c"/><circle cx="704.5" cy="606.7" r="0.8" fill="#e3d09c"/><circle cx="670.1" cy="532.3" r="0.8" fill="#e3d09c"/><circle cx="666.1" cy="536.0" r="0.8" fill="#e3d09c"/><circle cx="689.9" cy="587.4" r="0.8" fill="#e3d09c"/><circle cx="656.4" cy="523.0" r="0.8" fill="#e3d09c"/><circle cx="672.7" cy="563.8" r="0.8" fill="#e3d09c"/><circle cx="664.8" cy="532.8" r="0.8" fill="#e3d09c"/><circle cx="686.8" cy="580.0" r="0.8" fill="#e3d09c"/><circle cx="688.6" cy="551.9" r="0.8" fill="#e3d09c"/><circle cx="699.4" cy="571.7" r="0.8" fill="#e3d09c"/><circle cx="697.4" cy="604.2" r="0.8" fill="#e3d09c"/><circle cx="696.4" cy="606.2" r="0.8" fill="#e3d09c"/><circle cx="673.1" cy="527.7" r="0.8" fill="#e3d09c"/><circle cx="690.6" cy="597.7" r="0.8" fill="#e3d09c"/><circle cx="693.6" cy="566.0" r="0.8" fill="#e3d09c"/><circle cx="671.1" cy="523.8" r="0.8" fill="#e3d09c"/><circle cx="665.5" cy="555.7" r="0.8" fill="#e3d09c"/><circle cx="676.6" cy="576.0" r="0.8" fill="#e3d09c"/><circle cx="682.4" cy="556.5" r="0.8" fill="#e3d09c"/><circle cx="690.7" cy="595.4" r="0.8" fill="#e3d09c"/><circle cx="656.9" cy="534.7" r="0.8" fill="#e3d09c"/><circle cx="675.0" cy="523.7" r="0.8" fill="#e3d09c"/><circle cx="658.7" cy="511.9" r="0.8" fill="#e3d09c"/><circle cx="744.0" cy="549.4" r="0.8" fill="#e3d09c"/><circle cx="751.7" cy="542.6" r="0.8" fill="#e3d09c"/><circle cx="739.6" cy="537.0" r="0.8" fill="#e3d09c"/><circle cx="744.0" cy="521.6" r="0.8" fill="#e3d09c"/><circle cx="747.0" cy="545.2" r="0.8" fill="#e3d09c"/><circle cx="739.1" cy="598.8" r="0.8" fill="#e3d09c"/><circle cx="742.8" cy="539.4" r="0.8" fill="#e3d09c"/><circle cx="741.3" cy="551.8" r="0.8" fill="#e3d09c"/><circle cx="740.5" cy="581.6" r="0.8" fill="#e3d09c"/><circle cx="739.2" cy="595.7" r="0.8" fill="#e3d09c"/><circle cx="741.8" cy="540.8" r="0.8" fill="#e3d09c"/><circle cx="751.5" cy="548.7" r="0.8" fill="#e3d09c"/><circle cx="741.5" cy="518.5" r="0.8" fill="#e3d09c"/><circle cx="745.4" cy="527.8" r="0.8" fill="#e3d09c"/><circle cx="738.8" cy="594.4" r="0.8" fill="#e3d09c"/><circle cx="734.3" cy="577.6" r="0.8" fill="#e3d09c"/><circle cx="750.8" cy="551.1" r="0.8" fill="#e3d09c"/><circle cx="747.5" cy="570.4" r="0.8" fill="#e3d09c"/><circle cx="736.9" cy="536.1" r="0.8" fill="#e3d09c"/><circle cx="745.1" cy="521.8" r="0.8" fill="#e3d09c"/><circle cx="745.7" cy="515.7" r="0.8" fill="#e3d09c"/><circle cx="741.0" cy="532.3" r="0.8" fill="#e3d09c"/><circle cx="749.3" cy="526.8" r="0.8" fill="#e3d09c"/><circle cx="743.6" cy="521.4" r="0.8" fill="#e3d09c"/><circle cx="743.3" cy="530.9" r="0.8" fill="#e3d09c"/><circle cx="736.1" cy="588.9" r="0.8" fill="#e3d09c"/><circle cx="737.7" cy="591.9" r="0.8" fill="#e3d09c"/><circle cx="739.9" cy="584.5" r="0.8" fill="#e3d09c"/><circle cx="743.8" cy="536.1" r="0.8" fill="#e3d09c"/><circle cx="744.5" cy="561.2" r="0.8" fill="#e3d09c"/><circle cx="740.2" cy="571.5" r="0.8" fill="#e3d09c"/><circle cx="742.1" cy="530.8" r="0.8" fill="#e3d09c"/><circle cx="744.8" cy="583.1" r="0.8" fill="#e3d09c"/><circle cx="741.2" cy="534.1" r="0.8" fill="#e3d09c"/><circle cx="741.8" cy="565.6" r="0.8" fill="#e3d09c"/><circle cx="737.2" cy="545.0" r="0.8" fill="#e3d09c"/><circle cx="739.0" cy="598.8" r="0.8" fill="#e3d09c"/><circle cx="738.8" cy="528.2" r="0.8" fill="#e3d09c"/><circle cx="735.7" cy="557.2" r="0.8" fill="#e3d09c"/><circle cx="735.9" cy="579.9" r="0.8" fill="#e3d09c"/><circle cx="735.0" cy="562.2" r="0.8" fill="#e3d09c"/><circle cx="738.3" cy="596.5" r="0.8" fill="#e3d09c"/><circle cx="739.9" cy="583.9" r="0.8" fill="#e3d09c"/><circle cx="737.2" cy="593.5" r="0.8" fill="#e3d09c"/><circle cx="739.9" cy="558.6" r="0.8" fill="#e3d09c"/><circle cx="735.7" cy="535.2" r="0.8" fill="#e3d09c"/><circle cx="739.4" cy="562.6" r="0.8" fill="#e3d09c"/><circle cx="740.1" cy="596.7" r="0.8" fill="#e3d09c"/><circle cx="734.7" cy="578.9" r="0.8" fill="#e3d09c"/><circle cx="735.1" cy="555.8" r="0.8" fill="#e3d09c"/><circle cx="739.8" cy="542.8" r="0.8" fill="#e3d09c"/><circle cx="735.8" cy="587.6" r="0.8" fill="#e3d09c"/><circle cx="739.8" cy="533.3" r="0.8" fill="#e3d09c"/><circle cx="743.3" cy="528.1" r="0.8" fill="#e3d09c"/><circle cx="743.6" cy="515.0" r="0.8" fill="#e3d09c"/><circle cx="737.0" cy="576.3" r="0.8" fill="#e3d09c"/><circle cx="745.5" cy="525.8" r="0.8" fill="#e3d09c"/><circle cx="733.7" cy="567.5" r="0.8" fill="#e3d09c"/><circle cx="751.3" cy="538.1" r="0.8" fill="#e3d09c"/><circle cx="732.9" cy="545.1" r="0.8" fill="#e3d09c"/><circle cx="738.2" cy="596.2" r="0.8" fill="#e3d09c"/><circle cx="734.8" cy="583.3" r="0.8" fill="#e3d09c"/><circle cx="740.0" cy="594.2" r="0.8" fill="#e3d09c"/><circle cx="742.2" cy="517.8" r="0.8" fill="#e3d09c"/><circle cx="744.8" cy="511.4" r="0.8" fill="#e3d09c"/><circle cx="749.1" cy="527.0" r="0.8" fill="#e3d09c"/><circle cx="742.5" cy="514.3" r="0.8" fill="#e3d09c"/><circle cx="742.7" cy="571.7" r="0.8" fill="#e3d09c"/><circle cx="743.0" cy="513.7" r="0.8" fill="#e3d09c"/><circle cx="746.6" cy="573.0" r="0.8" fill="#e3d09c"/><circle cx="738.8" cy="588.6" r="0.8" fill="#e3d09c"/><circle cx="744.2" cy="569.1" r="0.8" fill="#e3d09c"/><circle cx="742.8" cy="515.3" r="0.8" fill="#e3d09c"/><circle cx="747.1" cy="532.7" r="0.8" fill="#e3d09c"/><circle cx="744.6" cy="523.8" r="0.8" fill="#e3d09c"/><circle cx="743.8" cy="515.8" r="0.8" fill="#e3d09c"/><circle cx="736.2" cy="561.3" r="0.8" fill="#e3d09c"/><circle cx="743.4" cy="528.8" r="0.8" fill="#e3d09c"/><circle cx="735.4" cy="574.4" r="0.8" fill="#e3d09c"/><circle cx="745.0" cy="534.3" r="0.8" fill="#e3d09c"/><circle cx="741.4" cy="534.9" r="0.8" fill="#e3d09c"/><circle cx="735.0" cy="554.7" r="0.8" fill="#e3d09c"/><circle cx="735.4" cy="534.5" r="0.8" fill="#e3d09c"/><circle cx="747.0" cy="557.3" r="0.8" fill="#e3d09c"/><circle cx="736.0" cy="537.6" r="0.8" fill="#e3d09c"/><circle cx="745.4" cy="578.0" r="0.8" fill="#e3d09c"/><circle cx="749.9" cy="541.7" r="0.8" fill="#e3d09c"/><circle cx="743.8" cy="520.5" r="0.8" fill="#e3d09c"/><circle cx="746.1" cy="518.4" r="0.8" fill="#e3d09c"/><circle cx="738.7" cy="568.8" r="0.8" fill="#e3d09c"/><circle cx="738.9" cy="592.5" r="0.8" fill="#e3d09c"/><circle cx="743.4" cy="512.9" r="0.8" fill="#e3d09c"/><circle cx="734.7" cy="547.3" r="0.8" fill="#e3d09c"/><circle cx="740.4" cy="591.8" r="0.8" fill="#e3d09c"/><circle cx="733.8" cy="576.9" r="0.8" fill="#e3d09c"/><circle cx="741.4" cy="585.4" r="0.8" fill="#e3d09c"/><circle cx="733.0" cy="545.7" r="0.8" fill="#e3d09c"/><circle cx="747.0" cy="578.8" r="0.8" fill="#e3d09c"/><circle cx="741.2" cy="579.3" r="0.8" fill="#e3d09c"/><circle cx="747.0" cy="561.6" r="0.8" fill="#e3d09c"/><circle cx="748.2" cy="545.0" r="0.8" fill="#e3d09c"/><circle cx="736.0" cy="550.4" r="0.8" fill="#e3d09c"/><circle cx="735.1" cy="582.7" r="0.8" fill="#e3d09c"/><circle cx="739.5" cy="524.4" r="0.8" fill="#e3d09c"/><circle cx="740.0" cy="596.9" r="0.8" fill="#e3d09c"/><circle cx="745.2" cy="581.4" r="0.8" fill="#e3d09c"/><circle cx="739.3" cy="591.3" r="0.8" fill="#e3d09c"/><circle cx="744.9" cy="579.3" r="0.8" fill="#e3d09c"/><circle cx="745.4" cy="543.8" r="0.8" fill="#e3d09c"/><circle cx="749.0" cy="530.8" r="0.8" fill="#e3d09c"/><circle cx="766.3" cy="625.8" r="0.8" fill="#e3d09c"/><circle cx="766.9" cy="606.3" r="0.8" fill="#e3d09c"/><circle cx="807.7" cy="601.8" r="0.8" fill="#e3d09c"/><circle cx="802.1" cy="595.6" r="0.8" fill="#e3d09c"/><circle cx="780.8" cy="612.8" r="0.8" fill="#e3d09c"/><circle cx="792.0" cy="594.8" r="0.8" fill="#e3d09c"/><circle cx="764.5" cy="622.5" r="0.8" fill="#e3d09c"/><circle cx="741.4" cy="636.1" r="0.8" fill="#e3d09c"/><circle cx="797.2" cy="602.9" r="0.8" fill="#e3d09c"/><circle cx="792.4" cy="611.8" r="0.8" fill="#e3d09c"/><circle cx="751.7" cy="625.9" r="0.8" fill="#e3d09c"/><circle cx="820.6" cy="592.6" r="0.8" fill="#e3d09c"/><circle cx="765.2" cy="606.3" r="0.8" fill="#e3d09c"/><circle cx="749.9" cy="621.8" r="0.8" fill="#e3d09c"/><circle cx="816.0" cy="597.5" r="0.8" fill="#e3d09c"/><circle cx="813.8" cy="604.9" r="0.8" fill="#e3d09c"/><circle cx="794.5" cy="623.2" r="0.8" fill="#e3d09c"/><circle cx="779.7" cy="611.6" r="0.8" fill="#e3d09c"/><circle cx="817.9" cy="597.4" r="0.8" fill="#e3d09c"/><circle cx="816.6" cy="594.7" r="0.8" fill="#e3d09c"/><circle cx="800.4" cy="601.0" r="0.8" fill="#e3d09c"/><circle cx="820.8" cy="592.8" r="0.8" fill="#e3d09c"/><circle cx="766.1" cy="636.6" r="0.8" fill="#e3d09c"/><circle cx="746.8" cy="622.9" r="0.8" fill="#e3d09c"/><circle cx="794.4" cy="600.3" r="0.8" fill="#e3d09c"/><circle cx="782.0" cy="619.2" r="0.8" fill="#e3d09c"/><circle cx="739.1" cy="638.3" r="0.8" fill="#e3d09c"/><circle cx="757.8" cy="624.5" r="0.8" fill="#e3d09c"/><circle cx="768.3" cy="629.8" r="0.8" fill="#e3d09c"/><circle cx="796.5" cy="599.3" r="0.8" fill="#e3d09c"/><circle cx="742.6" cy="631.9" r="0.8" fill="#e3d09c"/><circle cx="763.5" cy="607.2" r="0.8" fill="#e3d09c"/><circle cx="750.5" cy="636.1" r="0.8" fill="#e3d09c"/><circle cx="801.9" cy="618.8" r="0.8" fill="#e3d09c"/><circle cx="819.8" cy="594.4" r="0.8" fill="#e3d09c"/><circle cx="761.7" cy="611.8" r="0.8" fill="#e3d09c"/><circle cx="761.3" cy="623.5" r="0.8" fill="#e3d09c"/><circle cx="780.9" cy="615.8" r="0.8" fill="#e3d09c"/><circle cx="771.4" cy="632.4" r="0.8" fill="#e3d09c"/><circle cx="759.0" cy="624.8" r="0.8" fill="#e3d09c"/><circle cx="813.3" cy="601.6" r="0.8" fill="#e3d09c"/><circle cx="757.0" cy="618.5" r="0.8" fill="#e3d09c"/><circle cx="799.2" cy="592.0" r="0.8" fill="#e3d09c"/><circle cx="746.5" cy="633.3" r="0.8" fill="#e3d09c"/><circle cx="775.5" cy="603.8" r="0.8" fill="#e3d09c"/><circle cx="738.4" cy="634.9" r="0.8" fill="#e3d09c"/><circle cx="800.8" cy="602.4" r="0.8" fill="#e3d09c"/><circle cx="819.6" cy="594.2" r="0.8" fill="#e3d09c"/><circle cx="818.6" cy="592.3" r="0.8" fill="#e3d09c"/><circle cx="746.0" cy="621.3" r="0.8" fill="#e3d09c"/><circle cx="769.5" cy="614.0" r="0.8" fill="#e3d09c"/><circle cx="739.6" cy="636.9" r="0.8" fill="#e3d09c"/><circle cx="742.0" cy="632.6" r="0.8" fill="#e3d09c"/><circle cx="760.0" cy="634.5" r="0.8" fill="#e3d09c"/><circle cx="767.1" cy="612.3" r="0.8" fill="#e3d09c"/><circle cx="738.6" cy="636.6" r="0.8" fill="#e3d09c"/><circle cx="791.7" cy="614.9" r="0.8" fill="#e3d09c"/><circle cx="815.1" cy="599.6" r="0.8" fill="#e3d09c"/><circle cx="751.7" cy="619.1" r="0.8" fill="#e3d09c"/><circle cx="803.8" cy="610.3" r="0.8" fill="#e3d09c"/><circle cx="784.3" cy="625.6" r="0.8" fill="#e3d09c"/><circle cx="778.8" cy="606.6" r="0.8" fill="#e3d09c"/><circle cx="745.0" cy="622.7" r="0.8" fill="#e3d09c"/><circle cx="796.4" cy="620.4" r="0.8" fill="#e3d09c"/><circle cx="812.7" cy="596.5" r="0.8" fill="#e3d09c"/><circle cx="798.6" cy="619.9" r="0.8" fill="#e3d09c"/><circle cx="806.0" cy="603.1" r="0.8" fill="#e3d09c"/><circle cx="770.9" cy="620.3" r="0.8" fill="#e3d09c"/><circle cx="746.7" cy="625.5" r="0.8" fill="#e3d09c"/><circle cx="800.9" cy="620.4" r="0.8" fill="#e3d09c"/><circle cx="780.5" cy="610.7" r="0.8" fill="#e3d09c"/><circle cx="764.6" cy="621.4" r="0.8" fill="#e3d09c"/><circle cx="803.5" cy="600.7" r="0.8" fill="#e3d09c"/><circle cx="816.6" cy="592.7" r="0.8" fill="#e3d09c"/><circle cx="762.4" cy="624.9" r="0.8" fill="#e3d09c"/><circle cx="776.1" cy="630.4" r="0.8" fill="#e3d09c"/><circle cx="810.3" cy="608.2" r="0.8" fill="#e3d09c"/><circle cx="780.2" cy="596.7" r="0.8" fill="#e3d09c"/><circle cx="785.2" cy="613.8" r="0.8" fill="#e3d09c"/><circle cx="773.2" cy="609.5" r="0.8" fill="#e3d09c"/><circle cx="801.7" cy="616.5" r="0.8" fill="#e3d09c"/><circle cx="744.9" cy="636.2" r="0.8" fill="#e3d09c"/><circle cx="767.2" cy="622.2" r="0.8" fill="#e3d09c"/><circle cx="814.9" cy="602.7" r="0.8" fill="#e3d09c"/><circle cx="785.7" cy="600.4" r="0.8" fill="#e3d09c"/><circle cx="812.6" cy="593.3" r="0.8" fill="#e3d09c"/><circle cx="773.2" cy="630.8" r="0.8" fill="#e3d09c"/><circle cx="758.9" cy="618.1" r="0.8" fill="#e3d09c"/><circle cx="818.1" cy="597.5" r="0.8" fill="#e3d09c"/><circle cx="760.7" cy="621.4" r="0.8" fill="#e3d09c"/><circle cx="754.2" cy="616.6" r="0.8" fill="#e3d09c"/><circle cx="762.6" cy="638.5" r="0.8" fill="#e3d09c"/><circle cx="740.5" cy="632.9" r="0.8" fill="#e3d09c"/><circle cx="747.7" cy="621.3" r="0.8" fill="#e3d09c"/><circle cx="784.3" cy="622.1" r="0.8" fill="#e3d09c"/><circle cx="808.3" cy="602.2" r="0.8" fill="#e3d09c"/><circle cx="800.4" cy="591.8" r="0.8" fill="#e3d09c"/><circle cx="765.5" cy="637.5" r="0.8" fill="#e3d09c"/><circle cx="740.0" cy="633.9" r="0.8" fill="#e3d09c"/><circle cx="772.6" cy="609.4" r="0.8" fill="#e3d09c"/><circle cx="774.4" cy="599.7" r="0.8" fill="#e3d09c"/><circle cx="760.8" cy="638.3" r="0.8" fill="#e3d09c"/><circle cx="750.8" cy="638.5" r="0.8" fill="#e3d09c"/><circle cx="755.1" cy="639.7" r="0.8" fill="#e3d09c"/><circle cx="795.2" cy="611.6" r="0.8" fill="#e3d09c"/><circle cx="743.6" cy="625.6" r="0.8" fill="#e3d09c"/><circle cx="796.3" cy="596.3" r="0.8" fill="#e3d09c"/><circle cx="754.6" cy="636.3" r="0.8" fill="#e3d09c"/><circle cx="806.9" cy="592.2" r="0.8" fill="#e3d09c"/><circle cx="817.7" cy="594.5" r="0.8" fill="#e3d09c"/><circle cx="761.7" cy="609.7" r="0.8" fill="#e3d09c"/><circle cx="776.3" cy="635.3" r="0.8" fill="#e3d09c"/><circle cx="754.1" cy="616.7" r="0.8" fill="#e3d09c"/><circle cx="744.4" cy="626.5" r="0.8" fill="#e3d09c"/><circle cx="771.7" cy="634.4" r="0.8" fill="#e3d09c"/><circle cx="740.2" cy="632.7" r="0.8" fill="#e3d09c"/><circle cx="817.7" cy="598.8" r="0.8" fill="#e3d09c"/><circle cx="818.9" cy="592.8" r="0.8" fill="#e3d09c"/><circle cx="772.4" cy="635.3" r="0.8" fill="#e3d09c"/><circle cx="780.1" cy="622.8" r="0.8" fill="#e3d09c"/><circle cx="755.0" cy="611.6" r="0.8" fill="#e3d09c"/><circle cx="768.5" cy="629.9" r="0.8" fill="#e3d09c"/><circle cx="803.0" cy="604.1" r="0.8" fill="#e3d09c"/><circle cx="775.5" cy="618.6" r="0.8" fill="#e3d09c"/><circle cx="773.6" cy="619.5" r="0.8" fill="#e3d09c"/><circle cx="803.8" cy="595.1" r="0.8" fill="#e3d09c"/><circle cx="793.1" cy="624.3" r="0.8" fill="#e3d09c"/><circle cx="805.2" cy="594.4" r="0.8" fill="#e3d09c"/><circle cx="818.7" cy="595.7" r="0.8" fill="#e3d09c"/><circle cx="747.2" cy="627.1" r="0.8" fill="#e3d09c"/><circle cx="747.6" cy="620.6" r="0.8" fill="#e3d09c"/><circle cx="819.0" cy="593.3" r="0.8" fill="#e3d09c"/><circle cx="807.2" cy="593.1" r="0.8" fill="#e3d09c"/><circle cx="736.5" cy="639.0" r="0.8" fill="#e3d09c"/><circle cx="808.7" cy="612.1" r="0.8" fill="#e3d09c"/><circle cx="794.3" cy="607.8" r="0.8" fill="#e3d09c"/><circle cx="796.0" cy="594.3" r="0.8" fill="#e3d09c"/><circle cx="780.5" cy="612.1" r="0.8" fill="#e3d09c"/><circle cx="748.4" cy="633.8" r="0.8" fill="#e3d09c"/><circle cx="762.9" cy="624.1" r="0.8" fill="#e3d09c"/><circle cx="764.3" cy="616.3" r="0.8" fill="#e3d09c"/><circle cx="767.4" cy="625.2" r="0.8" fill="#e3d09c"/><circle cx="819.9" cy="594.4" r="0.8" fill="#e3d09c"/><circle cx="811.8" cy="603.9" r="0.8" fill="#e3d09c"/><circle cx="766.2" cy="637.8" r="0.8" fill="#e3d09c"/><circle cx="753.2" cy="617.2" r="0.8" fill="#e3d09c"/><circle cx="782.0" cy="622.9" r="0.8" fill="#e3d09c"/><circle cx="766.5" cy="627.2" r="0.8" fill="#e3d09c"/><circle cx="765.6" cy="637.6" r="0.8" fill="#e3d09c"/><circle cx="773.6" cy="617.3" r="0.8" fill="#e3d09c"/><circle cx="787.0" cy="625.9" r="0.8" fill="#e3d09c"/><circle cx="819.9" cy="593.2" r="0.8" fill="#e3d09c"/><circle cx="774.9" cy="622.1" r="0.8" fill="#e3d09c"/><circle cx="740.6" cy="635.2" r="0.8" fill="#e3d09c"/><circle cx="810.3" cy="604.0" r="0.8" fill="#e3d09c"/><circle cx="741.4" cy="638.7" r="0.8" fill="#e3d09c"/><circle cx="775.7" cy="635.3" r="0.8" fill="#e3d09c"/><circle cx="762.1" cy="613.7" r="0.8" fill="#e3d09c"/><circle cx="788.6" cy="625.3" r="0.8" fill="#e3d09c"/><circle cx="778.1" cy="630.1" r="0.8" fill="#e3d09c"/><circle cx="794.3" cy="602.4" r="0.8" fill="#e3d09c"/><circle cx="760.9" cy="625.2" r="0.8" fill="#e3d09c"/><circle cx="767.3" cy="616.7" r="0.8" fill="#e3d09c"/><circle cx="796.8" cy="619.3" r="0.8" fill="#e3d09c"/><circle cx="779.5" cy="601.2" r="0.8" fill="#e3d09c"/><circle cx="752.4" cy="626.0" r="0.8" fill="#e3d09c"/><circle cx="782.1" cy="599.8" r="0.8" fill="#e3d09c"/><circle cx="741.1" cy="633.5" r="0.8" fill="#e3d09c"/><circle cx="752.9" cy="614.0" r="0.8" fill="#e3d09c"/><circle cx="788.4" cy="626.9" r="0.8" fill="#e3d09c"/><circle cx="784.9" cy="621.5" r="0.8" fill="#e3d09c"/><circle cx="809.5" cy="606.4" r="0.8" fill="#e3d09c"/><circle cx="813.2" cy="596.0" r="0.8" fill="#e3d09c"/><circle cx="788.2" cy="597.1" r="0.8" fill="#e3d09c"/><circle cx="809.8" cy="596.5" r="0.8" fill="#e3d09c"/><circle cx="782.4" cy="629.0" r="0.8" fill="#e3d09c"/><circle cx="755.4" cy="617.8" r="0.8" fill="#e3d09c"/><circle cx="806.8" cy="602.5" r="0.8" fill="#e3d09c"/><circle cx="739.8" cy="630.5" r="0.8" fill="#e3d09c"/><circle cx="757.7" cy="608.7" r="0.8" fill="#e3d09c"/><circle cx="803.6" cy="594.8" r="0.8" fill="#e3d09c"/><circle cx="757.1" cy="623.5" r="0.8" fill="#e3d09c"/><circle cx="777.9" cy="613.1" r="0.8" fill="#e3d09c"/><circle cx="791.6" cy="614.4" r="0.8" fill="#e3d09c"/><circle cx="765.9" cy="606.4" r="0.8" fill="#e3d09c"/><circle cx="819.5" cy="594.0" r="0.8" fill="#e3d09c"/><circle cx="741.9" cy="634.6" r="0.8" fill="#e3d09c"/><circle cx="805.9" cy="615.3" r="0.8" fill="#e3d09c"/><circle cx="738.6" cy="632.2" r="0.8" fill="#e3d09c"/><circle cx="775.0" cy="614.3" r="0.8" fill="#e3d09c"/><circle cx="814.0" cy="601.2" r="0.8" fill="#e3d09c"/><circle cx="762.3" cy="621.3" r="0.8" fill="#e3d09c"/><circle cx="791.4" cy="623.5" r="0.8" fill="#e3d09c"/><circle cx="751.2" cy="627.4" r="0.8" fill="#e3d09c"/><circle cx="743.4" cy="636.3" r="0.8" fill="#e3d09c"/><circle cx="738.0" cy="639.2" r="0.8" fill="#e3d09c"/><circle cx="781.3" cy="616.9" r="0.8" fill="#e3d09c"/><circle cx="740.9" cy="632.4" r="0.8" fill="#e3d09c"/><circle cx="781.3" cy="628.2" r="0.8" fill="#e3d09c"/><circle cx="777.8" cy="607.3" r="0.8" fill="#e3d09c"/><circle cx="819.6" cy="593.7" r="0.8" fill="#e3d09c"/><circle cx="775.5" cy="605.2" r="0.8" fill="#e3d09c"/><circle cx="766.3" cy="635.5" r="0.8" fill="#e3d09c"/><circle cx="746.7" cy="633.3" r="0.8" fill="#e3d09c"/><circle cx="786.0" cy="605.9" r="0.8" fill="#e3d09c"/><circle cx="806.0" cy="612.3" r="0.8" fill="#e3d09c"/><circle cx="810.7" cy="602.7" r="0.8" fill="#e3d09c"/><circle cx="747.7" cy="620.7" r="0.8" fill="#e3d09c"/><circle cx="769.1" cy="613.1" r="0.8" fill="#e3d09c"/><circle cx="755.6" cy="637.2" r="0.8" fill="#e3d09c"/><circle cx="757.3" cy="635.7" r="0.8" fill="#e3d09c"/><circle cx="814.1" cy="592.6" r="0.8" fill="#e3d09c"/><circle cx="813.0" cy="595.5" r="0.8" fill="#e3d09c"/><circle cx="749.7" cy="622.6" r="0.8" fill="#e3d09c"/><circle cx="738.2" cy="637.2" r="0.8" fill="#e3d09c"/><circle cx="773.6" cy="631.5" r="0.8" fill="#e3d09c"/><circle cx="802.5" cy="592.6" r="0.8" fill="#e3d09c"/><circle cx="767.7" cy="617.0" r="0.8" fill="#e3d09c"/><circle cx="747.8" cy="626.2" r="0.8" fill="#e3d09c"/><circle cx="760.2" cy="631.4" r="0.8" fill="#e3d09c"/><ellipse cx="787.6" cy="524.7" rx="33.0" ry="9.0" transform="rotate(-87.7 787.6 524.7)" fill="#f6e2d1" /><ellipse cx="802.2" cy="530.4" rx="31.3" ry="9.0" transform="rotate(-64.9 802.2 530.4)" fill="#f6e2d1" /><ellipse cx="814.0" cy="539.1" rx="31.2" ry="9.0" transform="rotate(-42.7 814.0 539.1)" fill="#f6e2d1" /><ellipse cx="822.9" cy="551.0" rx="32.2" ry="9.0" transform="rotate(-20.8 822.9 551.0)" fill="#f6e2d1" /><ellipse cx="825.6" cy="564.2" rx="32.4" ry="9.0" transform="rotate(-1.2 825.6 564.2)" fill="#f6e2d1" /><ellipse cx="819.8" cy="574.4" rx="28.7" ry="9.0" transform="rotate(15.5 819.8 574.4)" fill="#f6e2d1" /><path d="M784.0 515.7C788.7 513.9 803.0 523.3 810.0 529.0C817.0 534.7 822.8 543.8 826.0 550.0C829.2 556.2 834.3 564.2 829.0 566.0C823.7 567.8 801.8 565.3 794.0 561.0C786.2 556.7 783.7 547.5 782.0 540.0C780.3 532.5 779.3 517.5 784.0 515.7Z" fill="#cab08a" /><ellipse cx="775.9" cy="529.9" rx="22.6" ry="8.0" transform="rotate(-101.1 775.9 529.9)" fill="#f6e2d1" /><ellipse cx="782.0" cy="548.9" rx="11.9" ry="8.0" transform="rotate(-95.0 782.0 548.9)" fill="#f6e2d1" /><ellipse cx="792.5" cy="557.4" rx="8.6" ry="8.0" transform="rotate(-58.2 792.5 557.4)" fill="#f6e2d1" /><ellipse cx="806.1" cy="567.8" rx="12.0" ry="8.0" transform="rotate(-8.4 806.1 567.8)" fill="#f6e2d1" /><ellipse cx="816.5" cy="578.1" rx="17.9" ry="8.0" transform="rotate(12.4 816.5 578.1)" fill="#f6e2d1" /><path d="M772 540 Q786 566 800 578" fill="none" stroke="#eee" stroke-width="0" stroke-linecap="round" stroke-linejoin="round" /><ellipse cx="695.0" cy="458.8" rx="24.3" ry="8.0" transform="rotate(-137.8 695.0 458.8)" fill="#f6e2d1" /><ellipse cx="710.0" cy="447.2" rx="24.9" ry="8.0" transform="rotate(-111.2 710.0 447.2)" fill="#f6e2d1" /><ellipse cx="726.9" cy="444.8" rx="24.8" ry="8.0" transform="rotate(-87.4 726.9 444.8)" fill="#f6e2d1" /><ellipse cx="740.0" cy="450.4" rx="23.2" ry="8.0" transform="rotate(-67.2 740.0 450.4)" fill="#f6e2d1" /><ellipse cx="755.0" cy="459.8" rx="23.9" ry="8.0" transform="rotate(-41.2 755.0 459.8)" fill="#f6e2d1" /><ellipse cx="765.0" cy="471.3" rx="25.6" ry="8.0" transform="rotate(-20.2 765.0 471.3)" fill="#f6e2d1" /><path d="M688.0 462.0C691.5 458.5 698.8 454.9 705.0 453.0C711.2 451.1 717.8 450.2 725.0 450.5C732.2 450.8 740.9 452.1 748.0 455.0C755.1 457.9 763.9 463.0 767.6 468.0C771.3 473.0 776.6 481.0 770.0 485.0C763.4 489.0 741.3 491.7 728.0 492.0C714.7 492.3 697.3 490.0 690.0 487.0C682.7 484.0 684.3 478.2 684.0 474.0C683.7 469.8 684.5 465.5 688.0 462.0Z" fill="#cab08a" /><ellipse cx="692.5" cy="478.2" rx="19.5" ry="8.2" transform="rotate(-126.1 692.5 478.2)" fill="#f6e2d1" /><ellipse cx="713.0" cy="481.0" rx="20.4" ry="8.2" transform="rotate(-101.3 713.0 481.0)" fill="#f6e2d1" /><ellipse cx="732.9" cy="484.5" rx="16.7" ry="8.2" transform="rotate(-80.2 732.9 484.5)" fill="#f6e2d1" /><ellipse cx="754.0" cy="489.0" rx="13.6" ry="8.2" transform="rotate(-54.0 754.0 489.0)" fill="#f6e2d1" /><ellipse cx="772.0" cy="490.5" rx="13.6" ry="8.2" transform="rotate(-28.4 772.0 490.5)" fill="#f6e2d1" /><path d="M719.0 714.5 L736.5 714.5 L726.0 737.0Z" fill="#d9823a" /><path d="M706.0 664.0C710.0 661.3 724.0 671.0 734.0 673.0C744.0 675.0 762.3 672.2 765.8 676.0C769.3 679.8 756.8 688.5 755.0 696.0C753.2 703.5 759.2 718.3 755.0 721.0C750.8 723.7 740.8 713.8 730.0 712.0C719.2 710.2 693.3 714.3 690.0 710.5C686.7 706.7 707.3 696.8 710.0 689.0C712.7 681.2 702.0 666.7 706.0 664.0Z" fill="#d4873b" /><ellipse cx="734.0" cy="690.5" rx="12.0" ry="8.0" transform="rotate(10.0 734.0 690.5)" fill="#c0722e" /><path d="M659.8 417.6 Q690 380 725.6 344.4 M686.6 388.3 Q710 395 720 400 M705 365 Q730 368 746 366" fill="none" stroke="#6d4b31" stroke-width="4" stroke-linecap="round" stroke-linejoin="round" /><ellipse cx="672.5" cy="362.0" rx="24.3" ry="11.0" transform="rotate(61.7 672.5 362.0)" fill="#6d4b31" /><ellipse cx="692.0" cy="341.9" rx="20.3" ry="11.0" transform="rotate(41.4 692.0 341.9)" fill="#6d4b31" /><ellipse cx="746.0" cy="365.5" rx="18.8" ry="9.0" transform="rotate(-17.0 746.0 365.5)" fill="#6d4b31" /><ellipse cx="719.5" cy="401.0" rx="18.0" ry="9.5" transform="rotate(12.9 719.5 401.0)" fill="#6d4b31" /><ellipse cx="516.7" cy="310.2" rx="10.0" ry="3.8" transform="rotate(-80.0 516.7 310.2)" fill="#f2d5c1" /><ellipse cx="524.4" cy="316.6" rx="10.0" ry="3.8" transform="rotate(-20.0 524.4 316.6)" fill="#f2d5c1" /><ellipse cx="522.7" cy="326.4" rx="10.0" ry="3.8" transform="rotate(40.0 522.7 326.4)" fill="#f2d5c1" /><ellipse cx="513.3" cy="329.8" rx="10.0" ry="3.8" transform="rotate(100.0 513.3 329.8)" fill="#f2d5c1" /><ellipse cx="505.6" cy="323.4" rx="10.0" ry="3.8" transform="rotate(160.0 505.6 323.4)" fill="#f2d5c1" /><ellipse cx="507.3" cy="313.6" rx="10.0" ry="3.8" transform="rotate(220.0 507.3 313.6)" fill="#f2d5c1" /><circle cx="515.0" cy="320.0" r="4.0" fill="#e5a67e"/><ellipse cx="545.0" cy="309.0" rx="4.0" ry="2.4" transform="rotate(-90.0 545.0 309.0)" fill="#f2d5c1" /><ellipse cx="548.8" cy="311.8" rx="4.0" ry="2.4" transform="rotate(-18.0 548.8 311.8)" fill="#f2d5c1" /><ellipse cx="547.4" cy="316.2" rx="4.0" ry="2.4" transform="rotate(54.0 547.4 316.2)" fill="#f2d5c1" /><ellipse cx="542.6" cy="316.2" rx="4.0" ry="2.4" transform="rotate(126.0 542.6 316.2)" fill="#f2d5c1" /><ellipse cx="541.2" cy="311.8" rx="4.0" ry="2.4" transform="rotate(198.0 541.2 311.8)" fill="#f2d5c1" /><circle cx="545.0" cy="313.0" r="2.1" fill="#e5a67e"/><ellipse cx="504.0" cy="346.0" rx="5.0" ry="3.0" transform="rotate(-90.0 504.0 346.0)" fill="#f2d5c1" /><ellipse cx="508.8" cy="349.5" rx="5.0" ry="3.0" transform="rotate(-18.0 508.8 349.5)" fill="#f2d5c1" /><ellipse cx="506.9" cy="355.0" rx="5.0" ry="3.0" transform="rotate(54.0 506.9 355.0)" fill="#f2d5c1" /><ellipse cx="501.1" cy="355.0" rx="5.0" ry="3.0" transform="rotate(126.0 501.1 355.0)" fill="#f2d5c1" /><ellipse cx="499.2" cy="349.5" rx="5.0" ry="3.0" transform="rotate(198.0 499.2 349.5)" fill="#f2d5c1" /><circle cx="504.0" cy="351.0" r="2.6" fill="#e5a67e"/><ellipse cx="527.5" cy="349.0" rx="4.0" ry="2.4" transform="rotate(-90.0 527.5 349.0)" fill="#f2d5c1" /><ellipse cx="531.3" cy="351.8" rx="4.0" ry="2.4" transform="rotate(-18.0 531.3 351.8)" fill="#f2d5c1" /><ellipse cx="529.9" cy="356.2" rx="4.0" ry="2.4" transform="rotate(54.0 529.9 356.2)" fill="#f2d5c1" /><ellipse cx="525.1" cy="356.2" rx="4.0" ry="2.4" transform="rotate(126.0 525.1 356.2)" fill="#f2d5c1" /><ellipse cx="523.7" cy="351.8" rx="4.0" ry="2.4" transform="rotate(198.0 523.7 351.8)" fill="#f2d5c1" /><circle cx="527.5" cy="353.0" r="2.1" fill="#e5a67e"/><ellipse cx="588.2" cy="393.9" rx="12.5" ry="4.8" transform="rotate(-75.0 588.2 393.9)" fill="#f2d5c1" /><ellipse cx="597.1" cy="402.8" rx="12.5" ry="4.8" transform="rotate(-15.0 597.1 402.8)" fill="#f2d5c1" /><ellipse cx="593.8" cy="414.8" rx="12.5" ry="4.8" transform="rotate(45.0 593.8 414.8)" fill="#f2d5c1" /><ellipse cx="581.8" cy="418.1" rx="12.5" ry="4.8" transform="rotate(105.0 581.8 418.1)" fill="#f2d5c1" /><ellipse cx="572.9" cy="409.2" rx="12.5" ry="4.8" transform="rotate(165.0 572.9 409.2)" fill="#f2d5c1" /><ellipse cx="576.2" cy="397.2" rx="12.5" ry="4.8" transform="rotate(225.0 576.2 397.2)" fill="#f2d5c1" /><circle cx="585.0" cy="406.0" r="5.0" fill="#e5a67e"/><ellipse cx="608.5" cy="439.0" rx="5.0" ry="3.0" transform="rotate(-90.0 608.5 439.0)" fill="#f2d5c1" /><ellipse cx="613.3" cy="442.5" rx="5.0" ry="3.0" transform="rotate(-18.0 613.3 442.5)" fill="#f2d5c1" /><ellipse cx="611.4" cy="448.0" rx="5.0" ry="3.0" transform="rotate(54.0 611.4 448.0)" fill="#f2d5c1" /><ellipse cx="605.6" cy="448.0" rx="5.0" ry="3.0" transform="rotate(126.0 605.6 448.0)" fill="#f2d5c1" /><ellipse cx="603.7" cy="442.5" rx="5.0" ry="3.0" transform="rotate(198.0 603.7 442.5)" fill="#f2d5c1" /><circle cx="608.5" cy="444.0" r="2.6" fill="#e5a67e"/><ellipse cx="618.0" cy="306.0" rx="4.0" ry="2.4" transform="rotate(-90.0 618.0 306.0)" fill="#f2d5c1" /><ellipse cx="621.8" cy="308.8" rx="4.0" ry="2.4" transform="rotate(-18.0 621.8 308.8)" fill="#f2d5c1" /><ellipse cx="620.4" cy="313.2" rx="4.0" ry="2.4" transform="rotate(54.0 620.4 313.2)" fill="#f2d5c1" /><ellipse cx="615.6" cy="313.2" rx="4.0" ry="2.4" transform="rotate(126.0 615.6 313.2)" fill="#f2d5c1" /><ellipse cx="614.2" cy="308.8" rx="4.0" ry="2.4" transform="rotate(198.0 614.2 308.8)" fill="#f2d5c1" /><circle cx="618.0" cy="310.0" r="2.1" fill="#e5a67e"/><ellipse cx="643.3" cy="323.6" rx="7.5" ry="2.9" transform="rotate(-80.0 643.3 323.6)" fill="#f2d5c1" /><ellipse cx="649.0" cy="328.4" rx="7.5" ry="2.9" transform="rotate(-20.0 649.0 328.4)" fill="#f2d5c1" /><ellipse cx="647.7" cy="335.8" rx="7.5" ry="2.9" transform="rotate(40.0 647.7 335.8)" fill="#f2d5c1" /><ellipse cx="640.7" cy="338.4" rx="7.5" ry="2.9" transform="rotate(100.0 640.7 338.4)" fill="#f2d5c1" /><ellipse cx="635.0" cy="333.6" rx="7.5" ry="2.9" transform="rotate(160.0 635.0 333.6)" fill="#f2d5c1" /><ellipse cx="636.3" cy="326.2" rx="7.5" ry="2.9" transform="rotate(220.0 636.3 326.2)" fill="#f2d5c1" /><circle cx="642.0" cy="331.0" r="3.0" fill="#e5a67e"/><ellipse cx="773.8" cy="310.6" rx="7.5" ry="2.9" transform="rotate(-80.0 773.8 310.6)" fill="#f2d5c1" /><ellipse cx="779.5" cy="315.4" rx="7.5" ry="2.9" transform="rotate(-20.0 779.5 315.4)" fill="#f2d5c1" /><ellipse cx="778.2" cy="322.8" rx="7.5" ry="2.9" transform="rotate(40.0 778.2 322.8)" fill="#f2d5c1" /><ellipse cx="771.2" cy="325.4" rx="7.5" ry="2.9" transform="rotate(100.0 771.2 325.4)" fill="#f2d5c1" /><ellipse cx="765.5" cy="320.6" rx="7.5" ry="2.9" transform="rotate(160.0 765.5 320.6)" fill="#f2d5c1" /><ellipse cx="766.8" cy="313.2" rx="7.5" ry="2.9" transform="rotate(220.0 766.8 313.2)" fill="#f2d5c1" /><circle cx="772.5" cy="318.0" r="3.0" fill="#e5a67e"/><ellipse cx="805.0" cy="328.0" rx="4.0" ry="2.4" transform="rotate(-90.0 805.0 328.0)" fill="#f2d5c1" /><ellipse cx="808.8" cy="330.8" rx="4.0" ry="2.4" transform="rotate(-18.0 808.8 330.8)" fill="#f2d5c1" /><ellipse cx="807.4" cy="335.2" rx="4.0" ry="2.4" transform="rotate(54.0 807.4 335.2)" fill="#f2d5c1" /><ellipse cx="802.6" cy="335.2" rx="4.0" ry="2.4" transform="rotate(126.0 802.6 335.2)" fill="#f2d5c1" /><ellipse cx="801.2" cy="330.8" rx="4.0" ry="2.4" transform="rotate(198.0 801.2 330.8)" fill="#f2d5c1" /><circle cx="805.0" cy="332.0" r="2.1" fill="#e5a67e"/><ellipse cx="784.6" cy="349.6" rx="5.5" ry="2.1" transform="rotate(-80.0 784.6 349.6)" fill="#f2d5c1" /><ellipse cx="788.8" cy="353.1" rx="5.5" ry="2.1" transform="rotate(-20.0 788.8 353.1)" fill="#f2d5c1" /><ellipse cx="787.8" cy="358.5" rx="5.5" ry="2.1" transform="rotate(40.0 787.8 358.5)" fill="#f2d5c1" /><ellipse cx="782.6" cy="360.4" rx="5.5" ry="2.1" transform="rotate(100.0 782.6 360.4)" fill="#f2d5c1" /><ellipse cx="778.4" cy="356.9" rx="5.5" ry="2.1" transform="rotate(160.0 778.4 356.9)" fill="#f2d5c1" /><ellipse cx="779.4" cy="351.5" rx="5.5" ry="2.1" transform="rotate(220.0 779.4 351.5)" fill="#f2d5c1" /><circle cx="783.6" cy="355.0" r="2.2" fill="#e5a67e"/><ellipse cx="748.0" cy="388.0" rx="4.0" ry="2.4" transform="rotate(-90.0 748.0 388.0)" fill="#f2d5c1" /><ellipse cx="751.8" cy="390.8" rx="4.0" ry="2.4" transform="rotate(-18.0 751.8 390.8)" fill="#f2d5c1" /><ellipse cx="750.4" cy="395.2" rx="4.0" ry="2.4" transform="rotate(54.0 750.4 395.2)" fill="#f2d5c1" /><ellipse cx="745.6" cy="395.2" rx="4.0" ry="2.4" transform="rotate(126.0 745.6 395.2)" fill="#f2d5c1" /><ellipse cx="744.2" cy="390.8" rx="4.0" ry="2.4" transform="rotate(198.0 744.2 390.8)" fill="#f2d5c1" /><circle cx="748.0" cy="392.0" r="2.1" fill="#e5a67e"/><ellipse cx="762.4" cy="408.1" rx="5.0" ry="1.9" transform="rotate(-80.0 762.4 408.1)" fill="#f2d5c1" /><ellipse cx="766.2" cy="411.3" rx="5.0" ry="1.9" transform="rotate(-20.0 766.2 411.3)" fill="#f2d5c1" /><ellipse cx="765.3" cy="416.2" rx="5.0" ry="1.9" transform="rotate(40.0 765.3 416.2)" fill="#f2d5c1" /><ellipse cx="760.6" cy="417.9" rx="5.0" ry="1.9" transform="rotate(100.0 760.6 417.9)" fill="#f2d5c1" /><ellipse cx="756.8" cy="414.7" rx="5.0" ry="1.9" transform="rotate(160.0 756.8 414.7)" fill="#f2d5c1" /><ellipse cx="757.7" cy="409.8" rx="5.0" ry="1.9" transform="rotate(220.0 757.7 409.8)" fill="#f2d5c1" /><circle cx="761.5" cy="413.0" r="2.0" fill="#e5a67e"/><ellipse cx="679.0" cy="413.5" rx="4.0" ry="2.4" transform="rotate(-90.0 679.0 413.5)" fill="#f2d5c1" /><ellipse cx="682.8" cy="416.3" rx="4.0" ry="2.4" transform="rotate(-18.0 682.8 416.3)" fill="#f2d5c1" /><ellipse cx="681.4" cy="420.7" rx="4.0" ry="2.4" transform="rotate(54.0 681.4 420.7)" fill="#f2d5c1" /><ellipse cx="676.6" cy="420.7" rx="4.0" ry="2.4" transform="rotate(126.0 676.6 420.7)" fill="#f2d5c1" /><ellipse cx="675.2" cy="416.3" rx="4.0" ry="2.4" transform="rotate(198.0 675.2 416.3)" fill="#f2d5c1" /><circle cx="679.0" cy="417.5" r="2.1" fill="#e5a67e"/><ellipse cx="639.4" cy="369.4" rx="13.0" ry="4.9" transform="rotate(-75.0 639.4 369.4)" fill="#f2d5c1" /><ellipse cx="648.6" cy="378.6" rx="13.0" ry="4.9" transform="rotate(-15.0 648.6 378.6)" fill="#f2d5c1" /><ellipse cx="645.2" cy="391.2" rx="13.0" ry="4.9" transform="rotate(45.0 645.2 391.2)" fill="#f2d5c1" /><ellipse cx="632.6" cy="394.6" rx="13.0" ry="4.9" transform="rotate(105.0 632.6 394.6)" fill="#f2d5c1" /><ellipse cx="623.4" cy="385.4" rx="13.0" ry="4.9" transform="rotate(165.0 623.4 385.4)" fill="#f2d5c1" /><ellipse cx="626.8" cy="372.8" rx="13.0" ry="4.9" transform="rotate(225.0 626.8 372.8)" fill="#f2d5c1" /><circle cx="636.0" cy="382.0" r="5.2" fill="#e5a67e"/><ellipse cx="639.3" cy="421.2" rx="7.5" ry="2.9" transform="rotate(-80.0 639.3 421.2)" fill="#f2d5c1" /><ellipse cx="645.0" cy="426.0" rx="7.5" ry="2.9" transform="rotate(-20.0 645.0 426.0)" fill="#f2d5c1" /><ellipse cx="643.7" cy="433.4" rx="7.5" ry="2.9" transform="rotate(40.0 643.7 433.4)" fill="#f2d5c1" /><ellipse cx="636.7" cy="436.0" rx="7.5" ry="2.9" transform="rotate(100.0 636.7 436.0)" fill="#f2d5c1" /><ellipse cx="631.0" cy="431.2" rx="7.5" ry="2.9" transform="rotate(160.0 631.0 431.2)" fill="#f2d5c1" /><ellipse cx="632.3" cy="423.8" rx="7.5" ry="2.9" transform="rotate(220.0 632.3 423.8)" fill="#f2d5c1" /><circle cx="638.0" cy="428.6" r="3.0" fill="#e5a67e"/><ellipse cx="661.7" cy="441.5" rx="4.5" ry="2.7" transform="rotate(-90.0 661.7 441.5)" fill="#f2d5c1" /><ellipse cx="666.0" cy="444.6" rx="4.5" ry="2.7" transform="rotate(-18.0 666.0 444.6)" fill="#f2d5c1" /><ellipse cx="664.3" cy="449.6" rx="4.5" ry="2.7" transform="rotate(54.0 664.3 449.6)" fill="#f2d5c1" /><ellipse cx="659.1" cy="449.6" rx="4.5" ry="2.7" transform="rotate(126.0 659.1 449.6)" fill="#f2d5c1" /><ellipse cx="657.4" cy="444.6" rx="4.5" ry="2.7" transform="rotate(198.0 657.4 444.6)" fill="#f2d5c1" /><circle cx="661.7" cy="446.0" r="2.3" fill="#e5a67e"/><ellipse cx="638.6" cy="464.1" rx="9.0" ry="3.4" transform="rotate(-80.0 638.6 464.1)" fill="#f2d5c1" /><ellipse cx="645.5" cy="469.9" rx="9.0" ry="3.4" transform="rotate(-20.0 645.5 469.9)" fill="#f2d5c1" /><ellipse cx="643.9" cy="478.8" rx="9.0" ry="3.4" transform="rotate(40.0 643.9 478.8)" fill="#f2d5c1" /><ellipse cx="635.4" cy="481.9" rx="9.0" ry="3.4" transform="rotate(100.0 635.4 481.9)" fill="#f2d5c1" /><ellipse cx="628.5" cy="476.1" rx="9.0" ry="3.4" transform="rotate(160.0 628.5 476.1)" fill="#f2d5c1" /><ellipse cx="630.1" cy="467.2" rx="9.0" ry="3.4" transform="rotate(220.0 630.1 467.2)" fill="#f2d5c1" /><circle cx="637.0" cy="473.0" r="3.6" fill="#e5a67e"/><ellipse cx="670.5" cy="477.5" rx="4.5" ry="2.7" transform="rotate(-90.0 670.5 477.5)" fill="#f2d5c1" /><ellipse cx="674.8" cy="480.6" rx="4.5" ry="2.7" transform="rotate(-18.0 674.8 480.6)" fill="#f2d5c1" /><ellipse cx="673.1" cy="485.6" rx="4.5" ry="2.7" transform="rotate(54.0 673.1 485.6)" fill="#f2d5c1" /><ellipse cx="667.9" cy="485.6" rx="4.5" ry="2.7" transform="rotate(126.0 667.9 485.6)" fill="#f2d5c1" /><ellipse cx="666.2" cy="480.6" rx="4.5" ry="2.7" transform="rotate(198.0 666.2 480.6)" fill="#f2d5c1" /><circle cx="670.5" cy="482.0" r="2.3" fill="#e5a67e"/><ellipse cx="812.0" cy="451.6" rx="5.5" ry="2.1" transform="rotate(-80.0 812.0 451.6)" fill="#f2d5c1" /><ellipse cx="816.2" cy="455.1" rx="5.5" ry="2.1" transform="rotate(-20.0 816.2 455.1)" fill="#f2d5c1" /><ellipse cx="815.2" cy="460.5" rx="5.5" ry="2.1" transform="rotate(40.0 815.2 460.5)" fill="#f2d5c1" /><ellipse cx="810.0" cy="462.4" rx="5.5" ry="2.1" transform="rotate(100.0 810.0 462.4)" fill="#f2d5c1" /><ellipse cx="805.8" cy="458.9" rx="5.5" ry="2.1" transform="rotate(160.0 805.8 458.9)" fill="#f2d5c1" /><ellipse cx="806.8" cy="453.5" rx="5.5" ry="2.1" transform="rotate(220.0 806.8 453.5)" fill="#f2d5c1" /><circle cx="811.0" cy="457.0" r="2.2" fill="#e5a67e"/><ellipse cx="800.0" cy="479.0" rx="4.0" ry="2.4" transform="rotate(-90.0 800.0 479.0)" fill="#f2d5c1" /><ellipse cx="803.8" cy="481.8" rx="4.0" ry="2.4" transform="rotate(-18.0 803.8 481.8)" fill="#f2d5c1" /><ellipse cx="802.4" cy="486.2" rx="4.0" ry="2.4" transform="rotate(54.0 802.4 486.2)" fill="#f2d5c1" /><ellipse cx="797.6" cy="486.2" rx="4.0" ry="2.4" transform="rotate(126.0 797.6 486.2)" fill="#f2d5c1" /><ellipse cx="796.2" cy="481.8" rx="4.0" ry="2.4" transform="rotate(198.0 796.2 481.8)" fill="#f2d5c1" /><circle cx="800.0" cy="483.0" r="2.1" fill="#e5a67e"/><ellipse cx="681.5" cy="502.6" rx="5.5" ry="2.1" transform="rotate(-80.0 681.5 502.6)" fill="#f2d5c1" /><ellipse cx="685.7" cy="506.1" rx="5.5" ry="2.1" transform="rotate(-20.0 685.7 506.1)" fill="#f2d5c1" /><ellipse cx="684.7" cy="511.5" rx="5.5" ry="2.1" transform="rotate(40.0 684.7 511.5)" fill="#f2d5c1" /><ellipse cx="679.5" cy="513.4" rx="5.5" ry="2.1" transform="rotate(100.0 679.5 513.4)" fill="#f2d5c1" /><ellipse cx="675.3" cy="509.9" rx="5.5" ry="2.1" transform="rotate(160.0 675.3 509.9)" fill="#f2d5c1" /><ellipse cx="676.3" cy="504.5" rx="5.5" ry="2.1" transform="rotate(220.0 676.3 504.5)" fill="#f2d5c1" /><circle cx="680.5" cy="508.0" r="2.2" fill="#e5a67e"/><ellipse cx="706.0" cy="511.0" rx="4.0" ry="2.4" transform="rotate(-90.0 706.0 511.0)" fill="#f2d5c1" /><ellipse cx="709.8" cy="513.8" rx="4.0" ry="2.4" transform="rotate(-18.0 709.8 513.8)" fill="#f2d5c1" /><ellipse cx="708.4" cy="518.2" rx="4.0" ry="2.4" transform="rotate(54.0 708.4 518.2)" fill="#f2d5c1" /><ellipse cx="703.6" cy="518.2" rx="4.0" ry="2.4" transform="rotate(126.0 703.6 518.2)" fill="#f2d5c1" /><ellipse cx="702.2" cy="513.8" rx="4.0" ry="2.4" transform="rotate(198.0 702.2 513.8)" fill="#f2d5c1" /><circle cx="706.0" cy="515.0" r="2.1" fill="#e5a67e"/><ellipse cx="646.0" cy="301.5" rx="4.0" ry="2.4" transform="rotate(-90.0 646.0 301.5)" fill="#f2d5c1" /><ellipse cx="649.8" cy="304.3" rx="4.0" ry="2.4" transform="rotate(-18.0 649.8 304.3)" fill="#f2d5c1" /><ellipse cx="648.4" cy="308.7" rx="4.0" ry="2.4" transform="rotate(54.0 648.4 308.7)" fill="#f2d5c1" /><ellipse cx="643.6" cy="308.7" rx="4.0" ry="2.4" transform="rotate(126.0 643.6 308.7)" fill="#f2d5c1" /><ellipse cx="642.2" cy="304.3" rx="4.0" ry="2.4" transform="rotate(198.0 642.2 304.3)" fill="#f2d5c1" /><circle cx="646.0" cy="305.5" r="2.1" fill="#e5a67e"/><ellipse cx="422.0" cy="342.0" rx="4.0" ry="2.4" transform="rotate(-90.0 422.0 342.0)" fill="#f2d5c1" /><ellipse cx="425.8" cy="344.8" rx="4.0" ry="2.4" transform="rotate(-18.0 425.8 344.8)" fill="#f2d5c1" /><ellipse cx="424.4" cy="349.2" rx="4.0" ry="2.4" transform="rotate(54.0 424.4 349.2)" fill="#f2d5c1" /><ellipse cx="419.6" cy="349.2" rx="4.0" ry="2.4" transform="rotate(126.0 419.6 349.2)" fill="#f2d5c1" /><ellipse cx="418.2" cy="344.8" rx="4.0" ry="2.4" transform="rotate(198.0 418.2 344.8)" fill="#f2d5c1" /><circle cx="422.0" cy="346.0" r="2.1" fill="#e5a67e"/><circle cx="775.0" cy="378.2" r="7.2" fill="#7a9eaa"/><circle cx="782.4" cy="383.6" r="7.2" fill="#7a9eaa"/><circle cx="779.6" cy="392.3" r="7.2" fill="#7a9eaa"/><circle cx="770.4" cy="392.3" r="7.2" fill="#7a9eaa"/><circle cx="767.6" cy="383.6" r="7.2" fill="#7a9eaa"/><circle cx="775.0" cy="386.0" r="7.5" fill="#7a9eaa"/><circle cx="775.0" cy="386.0" r="5.4" fill="#bdd4da"/><circle cx="451.0" cy="599.8" r="5.8" fill="#7a9eaa"/><circle cx="456.9" cy="604.1" r="5.8" fill="#7a9eaa"/><circle cx="454.7" cy="611.0" r="5.8" fill="#7a9eaa"/><circle cx="447.3" cy="611.0" r="5.8" fill="#7a9eaa"/><circle cx="445.1" cy="604.1" r="5.8" fill="#7a9eaa"/><circle cx="451.0" cy="606.0" r="6.0" fill="#7a9eaa"/><circle cx="451.0" cy="606.0" r="4.3" fill="#bdd4da"/><circle cx="443.0" cy="632.3" r="4.3" fill="#a8c6cf"/><circle cx="447.5" cy="635.6" r="4.3" fill="#a8c6cf"/><circle cx="445.8" cy="640.8" r="4.3" fill="#a8c6cf"/><circle cx="440.2" cy="640.8" r="4.3" fill="#a8c6cf"/><circle cx="438.5" cy="635.6" r="4.3" fill="#a8c6cf"/><circle cx="443.0" cy="637.0" r="4.5" fill="#a8c6cf"/><circle cx="443.0" cy="637.0" r="3.2" fill="#d6e8ec"/><circle cx="454.0" cy="655.8" r="3.8" fill="#e6eef0"/><circle cx="458.0" cy="658.7" r="3.8" fill="#e6eef0"/><circle cx="456.4" cy="663.4" r="3.8" fill="#e6eef0"/><circle cx="451.6" cy="663.4" r="3.8" fill="#e6eef0"/><circle cx="450.0" cy="658.7" r="3.8" fill="#e6eef0"/><circle cx="454.0" cy="660.0" r="4.0" fill="#e6eef0"/><circle cx="454.0" cy="660.0" r="2.9" fill="#f5f8f8"/><circle cx="483.0" cy="673.7" r="6.7" fill="#bdd4da"/><circle cx="489.9" cy="678.8" r="6.7" fill="#bdd4da"/><circle cx="487.3" cy="686.9" r="6.7" fill="#bdd4da"/><circle cx="478.7" cy="686.9" r="6.7" fill="#bdd4da"/><circle cx="476.1" cy="678.8" r="6.7" fill="#bdd4da"/><circle cx="483.0" cy="681.0" r="7.0" fill="#bdd4da"/><circle cx="483.0" cy="681.0" r="5.0" fill="#e4f0f2"/><circle cx="507.6" cy="506.4" r="4.8" fill="#d4e6ea"/><circle cx="512.5" cy="510.0" r="4.8" fill="#d4e6ea"/><circle cx="510.7" cy="515.8" r="4.8" fill="#d4e6ea"/><circle cx="504.5" cy="515.8" r="4.8" fill="#d4e6ea"/><circle cx="502.7" cy="510.0" r="4.8" fill="#d4e6ea"/><circle cx="507.6" cy="511.6" r="5.0" fill="#d4e6ea"/><circle cx="507.6" cy="511.6" r="3.6" fill="#eef6f7"/><circle cx="615.0" cy="666.8" r="4.8" fill="#d4e6ea"/><circle cx="619.9" cy="670.4" r="4.8" fill="#d4e6ea"/><circle cx="618.1" cy="676.2" r="4.8" fill="#d4e6ea"/><circle cx="611.9" cy="676.2" r="4.8" fill="#d4e6ea"/><circle cx="610.1" cy="670.4" r="4.8" fill="#d4e6ea"/><circle cx="615.0" cy="672.0" r="5.0" fill="#d4e6ea"/><circle cx="615.0" cy="672.0" r="3.6" fill="#eef6f7"/><circle cx="698.0" cy="640.7" r="6.7" fill="#7a9eaa"/><circle cx="704.9" cy="645.8" r="6.7" fill="#7a9eaa"/><circle cx="702.3" cy="653.9" r="6.7" fill="#7a9eaa"/><circle cx="693.7" cy="653.9" r="6.7" fill="#7a9eaa"/><circle cx="691.1" cy="645.8" r="6.7" fill="#7a9eaa"/><circle cx="698.0" cy="648.0" r="7.0" fill="#7a9eaa"/><circle cx="698.0" cy="648.0" r="5.0" fill="#bdd4da"/><circle cx="762.6" cy="647.8" r="5.3" fill="#7a9eaa"/><circle cx="768.0" cy="651.7" r="5.3" fill="#7a9eaa"/><circle cx="766.0" cy="658.1" r="5.3" fill="#7a9eaa"/><circle cx="759.2" cy="658.1" r="5.3" fill="#7a9eaa"/><circle cx="757.2" cy="651.7" r="5.3" fill="#7a9eaa"/><circle cx="762.6" cy="653.5" r="5.5" fill="#7a9eaa"/><circle cx="762.6" cy="653.5" r="4.0" fill="#bdd4da"/><circle cx="797.0" cy="656.6" r="8.6" fill="#6c9585"/><circle cx="805.9" cy="663.1" r="8.6" fill="#6c9585"/><circle cx="802.5" cy="673.6" r="8.6" fill="#6c9585"/><circle cx="791.5" cy="673.6" r="8.6" fill="#6c9585"/><circle cx="788.1" cy="663.1" r="8.6" fill="#6c9585"/><circle cx="797.0" cy="666.0" r="9.0" fill="#6c9585"/><circle cx="797.0" cy="666.0" r="6.5" fill="#e8f0ee"/><circle cx="814.7" cy="632.8" r="3.8" fill="#eef3f4"/><circle cx="818.7" cy="635.7" r="3.8" fill="#eef3f4"/><circle cx="817.1" cy="640.4" r="3.8" fill="#eef3f4"/><circle cx="812.3" cy="640.4" r="3.8" fill="#eef3f4"/><circle cx="810.7" cy="635.7" r="3.8" fill="#eef3f4"/><circle cx="814.7" cy="637.0" r="4.0" fill="#eef3f4"/><circle cx="814.7" cy="637.0" r="2.9" fill="#fafafa"/><circle cx="671.7" cy="672.7" r="7.7" fill="#a9c3cc"/><circle cx="679.6" cy="678.4" r="7.7" fill="#a9c3cc"/><circle cx="676.6" cy="687.7" r="7.7" fill="#a9c3cc"/><circle cx="666.8" cy="687.7" r="7.7" fill="#a9c3cc"/><circle cx="663.8" cy="678.4" r="7.7" fill="#a9c3cc"/><circle cx="671.7" cy="681.0" r="8.0" fill="#a9c3cc"/><circle cx="671.7" cy="681.0" r="5.8" fill="#e0eef0"/></g></defs><g clip-path="url(#cc)"><rect x="48" y="106" width="1157" height="783" fill="#574f4a"/><use href="#tile" x="-788.0" y="-393.3"/><use href="#tile" x="-394.0" y="-393.3"/><use href="#tile" x="0.0" y="-393.3"/><use href="#tile" x="394.0" y="-393.3"/><use href="#tile" x="-788.0" y="0.0"/><use href="#tile" x="-394.0" y="0.0"/><use href="#tile" x="0.0" y="0.0"/><use href="#tile" x="394.0" y="0.0"/><use href="#tile" x="-788.0" y="393.3"/><use href="#tile" x="-394.0" y="393.3"/><use href="#tile" x="0.0" y="393.3"/><use href="#tile" x="394.0" y="393.3"/><rect x="430" y="301.5" width="394" height="393" fill="none" stroke="#9058c0" stroke-width="1.3"/><path d="M468 523 L468 537 L471.5 533.5 L474 539 L476 538 L473.5 532.5 L478 532.5Z" fill="#111" stroke="#fff" stroke-width="0.8"/><g fill="none" stroke="#ccc" stroke-width="0.8"><circle cx="479" cy="535" r="2"/><circle cx="483" cy="536" r="2"/><circle cx="481" cy="539" r="1.6"/></g></g></svg><div class="a" style="left:2px;top:889px;width:1216px;height:13px;background:#e8e8e8;"></div><div class="a" style="left:32px;top:889px;width:47px;height:13px;background:#f6f6f6;"></div><div class="a" style="left:79px;top:889px;width:1px;height:13px;background:#d6d6d6;"></div><div class="a" style="left:80px;top:889px;width:140px;height:13px;background:#efefef;"></div><div class="t" style="left:39px;top:891px;font-size:10px;color:#444;">33.33%</div><div class="t" style="left:98px;top:891px;font-size:10px;color:#444;">10 in x 10 in (300 ppi)</div><div class="t" style="left:216px;top:890px;font-size:11px;color:#555;">&#8250;</div><div class="a" style="left:1205px;top:89px;width:13px;height:800px;background:#e4e4e4;"></div><div class="a" style="left:1218px;top:67px;width:370px;height:835px;background:#e2e2e2;"></div><div class="t" style="left:1236px;top:67px;font-size:9px;color:#888;">&#8249;&#8249;</div><div class="t" style="left:1550px;top:67px;font-size:9px;color:#888;">&#8250;&#8250;</div><div class="t" style="left:1578px;top:67px;font-size:9px;color:#888;">&#8249;</div><div class="a" style="left:1564px;top:78px;width:24px;height:824px;background:#f1f1f1;border-left:1px solid #d4d4d4"></div><div class="a" style="left:1565px;top:236px;width:23px;height:1px;background:#dcdcdc;"></div><div class="a" style="left:1566px;top:115px;width:22px;height:1px;background:#dcdcdc;"></div><div class="a" style="left:1566px;top:146px;width:22px;height:1px;background:#dcdcdc;"></div><div class="a" style="left:1566px;top:178px;width:22px;height:1px;background:#dcdcdc;"></div><div class="a" style="left:1566px;top:210px;width:22px;height:1px;background:#dcdcdc;"></div><div class="a" style="left:1221px;top:80px;width:27px;height:822px;background:#f1f1f1;border:1px solid #d6d6d6"></div><div class="a" style="left:1222px;top:530px;width:25px;height:1px;background:#dcdcdc;"></div><div class="a" style="left:1222px;top:110px;width:25px;height:1px;background:#dcdcdc;"></div><div class="a" style="left:1222px;top:142px;width:25px;height:1px;background:#dcdcdc;"></div><div class="a" style="left:1222px;top:197px;width:25px;height:1px;background:#dcdcdc;"></div><div class="a" style="left:1222px;top:229px;width:25px;height:1px;background:#dcdcdc;"></div><div class="a" style="left:1222px;top:283px;width:25px;height:1px;background:#dcdcdc;"></div><div class="a" style="left:1222px;top:315px;width:25px;height:1px;background:#dcdcdc;"></div><div class="a" style="left:1222px;top:347px;width:25px;height:1px;background:#dcdcdc;"></div><div class="a" style="left:1222px;top:402px;width:25px;height:1px;background:#dcdcdc;"></div><div class="a" style="left:1222px;top:434px;width:25px;height:1px;background:#dcdcdc;"></div><div class="a" style="left:1222px;top:466px;width:25px;height:1px;background:#dcdcdc;"></div><div class="a" style="left:1222px;top:498px;width:25px;height:1px;background:#dcdcdc;"></div><div class="a" style="left:1228px;top:84px;width:13px;height:1.5px;background:#d0d0d0;"></div><div class="a" style="left:1228px;top:116px;width:13px;height:1.5px;background:#d0d0d0;"></div><div class="a" style="left:1228px;top:148px;width:13px;height:1.5px;background:#d0d0d0;"></div><div class="a" style="left:1228px;top:203px;width:13px;height:1.5px;background:#d0d0d0;"></div><div class="a" style="left:1228px;top:235px;width:13px;height:1.5px;background:#d0d0d0;"></div><div class="a" style="left:1228px;top:289px;width:13px;height:1.5px;background:#d0d0d0;"></div><div class="a" style="left:1228px;top:321px;width:13px;height:1.5px;background:#d0d0d0;"></div><div class="a" style="left:1228px;top:353px;width:13px;height:1.5px;background:#d0d0d0;"></div><div class="a" style="left:1228px;top:408px;width:13px;height:1.5px;background:#d0d0d0;"></div><div class="a" style="left:1228px;top:440px;width:13px;height:1.5px;background:#d0d0d0;"></div><div class="a" style="left:1228px;top:472px;width:13px;height:1.5px;background:#d0d0d0;"></div><div class="a" style="left:1228px;top:504px;width:13px;height:1.5px;background:#d0d0d0;"></div><div class="a" style="left:1224px;top:257px;width:22px;height:18px;background:#c4c4c4;border-radius:1px"></div><svg class="a" style="left:1220px;top:78px" width="30" height="460" fill="none" stroke="#2a2a2a" stroke-width="1.3" stroke-linecap="round" stroke-linejoin="round"><g transform="translate(14,16)"><rect x="-5" y="-6" width="4" height="5" stroke-width="1"/><rect x="-5" y="1" width="4" height="4" fill="#2a2a2a" stroke="none"/><path d="M2 -5 Q6 -3 4 5 M1 -6 L3 -4"/></g><g transform="translate(14,48)"><path d="M-5 -6 L6 0 L-5 6Z" fill="#1a1a1a" stroke="none"/></g><g transform="translate(14,80)"><text x="-7" y="5" font-size="13" font-family="Liberation Sans" fill="#2a2a2a" stroke="none">A</text><path d="M5 -6 V6" stroke-width="1"/></g><g transform="translate(14,102)"><text x="-6" y="5" font-size="14" font-style="italic" font-family="Liberation Serif" fill="#2a2a2a" stroke="none">A</text></g><g transform="translate(14,134)"><circle cx="-3" cy="3" r="3" fill="#2a2a2a" stroke="none"/><path d="M0 -6 H6 M2 -6 V6 M5 -6 V6" stroke-width="1.4"/><circle cx="1" cy="-3" r="2.5" fill="#2a2a2a" stroke="none"/></g><g transform="translate(14,167)"><path d="M-6 -6 H-2 M-6 -3 H-2 M-6 0 H-3" stroke-width="1"/><path d="M-3 6 Q-5 2 -1 2 L6 -6" stroke-width="2"/></g><g transform="translate(14,188)"><path d="M-6 -3 H6 M-6 3 H6" stroke-width="1.2"/><circle cx="-2" cy="-3" r="2" fill="#2a2a2a" stroke="none"/><path d="M3 1 L6 3 L3 5Z" fill="#2a2a2a" stroke="none"/></g><g transform="translate(14,222)"><rect x="-6" y="-6" width="11" height="11" stroke-width="0.9" stroke="#888"/><text x="-7" y="5" font-size="11" font-style="italic" font-family="Liberation Serif" fill="#2a2a2a" stroke="none">fx</text></g><g transform="translate(14,254)"><path d="M-6 -6 L6 6 M6 -6 L-6 6" stroke-width="1.6"/><circle cx="-5" cy="5" r="2" fill="#2a2a2a" stroke="none"/></g><g transform="translate(14,286)"><path d="M-6 -4 H6 M-6 0 H6 M-6 4 H6" stroke-width="1"/><circle cx="2" cy="-4" r="1.5" fill="#f1f1f1"/><circle cx="-2" cy="0" r="1.5" fill="#f1f1f1"/><circle cx="3" cy="4" r="1.5" fill="#f1f1f1"/></g><g transform="translate(14,308)"><circle r="6" stroke-width="1.3"/><path d="M4.2 -4.2 A6 6 0 0 1 -4.2 4.2Z" fill="#2a2a2a" stroke="none"/><path d="M-4.2 4.2 A6 6 0 0 1 4.2 -4.2" fill="#2a2a2a" stroke="none" transform="rotate(180)"/></g><g transform="translate(14,340)"><circle cx="-2" cy="0" r="4.5"/><circle cx="-2" cy="0" r="1.5" fill="#2a2a2a"/><path d="M1 -3 L5 -6 M1 3 L5 6"/><circle cx="5" cy="-6" r="1.5" fill="#2a2a2a"/><circle cx="5" cy="6" r="1.5" fill="#2a2a2a"/></g><g transform="translate(14,372)"><path d="M5 -5 A7 7 0 1 0 5 5" stroke-width="3.2"/><circle cx="4" cy="0" r="2.5" fill="#2a2a2a" stroke="none"/></g><g transform="translate(14,404)"><circle r="6" stroke-width="1.1"/><path d="M0 -1 V4" stroke-width="1.3"/><circle cx="0" cy="-3.5" r="0.8" fill="#2a2a2a"/></g><g transform="translate(14,436)"><rect x="-6" y="-5" width="12" height="10" fill="#2a2a2a" stroke="none"/><path d="M-3 -5 V5 M0 -5 V5 M3 -5 V5 M-6 -2 H6 M-6 1 H6" stroke="#f1f1f1" stroke-width="0.8" stroke-dasharray="1 1.5"/></g></svg><svg class="a" style="left:1565px;top:80px" width="23" height="160" fill="none" stroke="#2a2a2a" stroke-width="1.2"><g transform="translate(13,16)"><path d="M-6 3 Q-8 -3 -3 -3 Q-1 -7 4 -5 Q8 -4 7 1 Q9 5 4 5 H-4 Q-7 5 -6 3Z" fill="#2a2a2a" stroke="none"/><circle cx="1" cy="0.5" r="2.6" fill="#f1f1f1" stroke="none"/><circle cx="1" cy="0.5" r="1.3" fill="#2a2a2a" stroke="none"/></g><g transform="translate(13,46)"><rect x="-6" y="-6" width="11" height="12"/><path d="M-1 -6 V1 L1.5 -1 L4 1 V-6" fill="#2a2a2a" stroke="none"/></g><g transform="translate(13,77)"><rect x="-7" y="-5" width="13" height="10"/><path d="M-7 3 L1 -5 M-4 5 L6 -5 M0 5 L6 -1 M-7 -1 L-3 -5" stroke-width="0.9"/></g><g transform="translate(13,110)"><path d="M-8 3 L0 -5 M-5 5 L5 -5 M-8 -1 L-4 -5" stroke-width="1.2"/><circle cx="3" cy="3" r="3"/><path d="M5 5 L8 8" stroke-width="1.4"/></g><g transform="translate(13,142)"><path d="M-7 -1 L-3 -5 M-7 3 L1 -5 M-3 3 L5 -5" stroke-width="1"/><rect x="-7" y="3" width="4" height="4" fill="#2a2a2a" stroke="none"/><rect x="-2" y="3" width="4" height="4" stroke-width="0.8"/><rect x="3" y="3" width="4" height="4" stroke-width="0.8"/></g></svg><div class="a" style="left:1250px;top:77px;width:313px;height:299px;background:#ececec;"></div><div class="a" style="left:1250px;top:77px;width:313px;height:19px;background:#d9d9d9;"></div><div class="a" style="left:1307px;top:77px;width:58px;height:19px;background:#ececec;"></div><div class="t" style="left:1258px;top:82px;font-size:9.5px;color:#666;font-weight:bold">Swatches</div><div class="t" style="left:1314px;top:82px;font-size:9.5px;color:#333;font-weight:bold">Navigator</div><div class="t" style="left:1372px;top:82px;font-size:9.5px;color:#666;font-weight:bold">Color</div><div class="t" style="left:1411px;top:82px;font-size:9.5px;color:#666;font-weight:bold">Adobe Design to Print</div><div class="a" style="left:1549px;top:83px;width:9px;height:7px;border-top:1px solid #999;border-bottom:1px solid #999"></div><div class="a" style="left:1549px;top:86px;width:9px;height:1px;background:#999"></div><div class="a" style="left:1252px;top:96px;width:309px;height:260px;background:#f0f0f0;"></div><div class="a" style="left:1280px;top:103px;width:251px;height:250px;background:#e39a94;"></div><svg class="a" style="left:1281px;top:104px" width="249" height="248"><g transform="scale(0.632,0.6310) translate(-430,-301.5)"><rect x="430" y="301.5" width="394" height="393" fill="#574f4a"/><use href="#tile" x="-394.0" y="-393.3"/><use href="#tile" x="0.0" y="-393.3"/><use href="#tile" x="394.0" y="-393.3"/><use href="#tile" x="-394.0" y="0.0"/><use href="#tile" x="0.0" y="0.0"/><use href="#tile" x="394.0" y="0.0"/><use href="#tile" x="-394.0" y="393.3"/><use href="#tile" x="0.0" y="393.3"/><use href="#tile" x="394.0" y="393.3"/></g></svg><div class="a" style="left:1252px;top:356px;width:309px;height:1px;background:#dddddd;"></div><div class="a" style="left:1252px;top:358px;width:44px;height:17px;background:#fafafa;"></div><div class="t" style="left:1255px;top:362px;font-size:10px;color:#444;">33.33%</div><div class="a" style="left:1323px;top:364px;width:197px;height:2px;background:#cccccc;border-radius:1px"></div><svg class="a" style="left:1299px;top:362px" width="14" height="10"><path d="M2 8 L6 3 L8 5 L9 4 L12 8Z" fill="#222"/></svg><svg class="a" style="left:1526px;top:358px" width="20" height="14"><path d="M1 12 L8 3 L11 7 L13 5 L19 12Z" fill="#222"/></svg><svg class="a" style="left:1399px;top:363px" width="12" height="12"><path d="M2 11 L6 2 L10 11Z" fill="#fff" stroke="#999" stroke-width="1"/></svg><div class="a" style="left:1250px;top:377px;width:313px;height:525px;background:#efefef;"></div><div class="a" style="left:1250px;top:377px;width:313px;height:23px;background:#d9d9d9;"></div><div class="a" style="left:1347px;top:377px;width:43px;height:23px;background:#efefef;"></div><div class="t" style="left:1259px;top:383px;font-size:9.5px;color:#666;font-weight:bold">Paths</div><div class="t" style="left:1298px;top:383px;font-size:9.5px;color:#666;font-weight:bold">Channels</div><div class="t" style="left:1353px;top:383px;font-size:9.5px;color:#333;font-weight:bold">Layers</div><div class="a" style="left:1549px;top:385px;width:9px;height:7px;border-top:1px solid #999;border-bottom:1px solid #999"></div><div class="a" style="left:1549px;top:388px;width:9px;height:1px;background:#999"></div><div class="a" style="left:1252px;top:426px;width:309px;height:1px;background:#dedede;"></div><div class="a" style="left:1252px;top:450px;width:309px;height:1px;background:#dedede;"></div><div class="a" style="left:1255px;top:408px;width:77px;height:16px;background:#fafafa;border:1px solid #dcdcdc;border-radius:2px"></div><div class="t" style="left:1262px;top:410px;font-size:10px;color:#333;">&#9906;Kind</div><div class="t" style="left:1322px;top:410px;font-size:9px;color:#666;">&#8964;</div><div class="a" style="left:1255px;top:432px;width:104px;height:16px;background:#fafafa;border:1px solid #dcdcdc;border-radius:2px"></div><div class="t" style="left:1260px;top:434px;font-size:10px;color:#333;">Soft Light</div><div class="t" style="left:1362px;top:434px;font-size:10px;color:#888;">Opacity:</div><div class="a" style="left:1402px;top:432px;width:45px;height:16px;background:#fafafa;border:1px solid #dcdcdc;border-radius:2px"></div><div class="t" style="left:1404px;top:434px;font-size:10px;color:#333;">100%</div><div class="t" style="left:1256px;top:458px;font-size:10px;color:#888;">Lock:</div><div class="t" style="left:1385px;top:458px;font-size:10px;color:#888;">Fill:</div><div class="a" style="left:1402px;top:456px;width:45px;height:16px;background:#fafafa;border:1px solid #dcdcdc;border-radius:2px"></div><div class="t" style="left:1404px;top:458px;font-size:10px;color:#333;">100%</div><div class="a" style="left:1436px;top:433px;width:1px;height:14px;background:#dcdcdc;"></div><div class="a" style="left:1436px;top:457px;width:1px;height:14px;background:#dcdcdc;"></div><div class="a" style="left:1252px;top:472px;width:297px;height:410px;background:#efefef;"></div><div class="a" style="left:1252px;top:527px;width:297px;height:1px;background:#dedede;"></div><div class="a" style="left:1276px;top:495px;width:1px;height:32px;background:#e3e3e3;"></div><div class="a" style="left:1291px;top:498px;width:25px;height:25px;background:#fff;border:1px solid #9a9a9a"></div><div class="a" style="left:1304px;top:512px;width:11px;height:11px;background:#fff;border:1px solid #777"></div><div class="t" style="left:1323px;top:506px;font-size:10px;color:#333;">Layer 12</div><svg class="a" style="left:1257px;top:507px" width="12" height="8"><path d="M1 4 Q6 -1 11 4 Q6 9 1 4Z" fill="#333"/><circle cx="6" cy="4" r="1.6" fill="#efefef"/></svg><div class="a" style="left:1252px;top:560px;width:297px;height:1px;background:#dedede;"></div><div class="a" style="left:1276px;top:528px;width:1px;height:32px;background:#e3e3e3;"></div><div class="a" style="left:1291px;top:531px;width:25px;height:25px;background:#fff;border:1px solid #9a9a9a"></div><div class="a" style="left:1304px;top:545px;width:11px;height:11px;background:#fff;border:1px solid #777"></div><div class="t" style="left:1323px;top:539px;font-size:10px;color:#333;">Layer 12</div><svg class="a" style="left:1257px;top:540px" width="12" height="8"><path d="M1 4 Q6 -1 11 4 Q6 9 1 4Z" fill="#333"/><circle cx="6" cy="4" r="1.6" fill="#efefef"/></svg><div class="a" style="left:1252px;top:592px;width:297px;height:1px;background:#dedede;"></div><div class="a" style="left:1276px;top:560px;width:1px;height:32px;background:#e3e3e3;"></div><div class="a" style="left:1291px;top:563px;width:25px;height:25px;background:#fff;border:1px solid #9a9a9a"></div><div class="a" style="left:1304px;top:577px;width:11px;height:11px;background:#fff;border:1px solid #777"></div><div class="t" style="left:1323px;top:571px;font-size:10px;color:#333;">Layer 12</div><svg class="a" style="left:1257px;top:572px" width="12" height="8"><path d="M1 4 Q6 -1 11 4 Q6 9 1 4Z" fill="#333"/><circle cx="6" cy="4" r="1.6" fill="#efefef"/></svg><div class="a" style="left:1252px;top:624px;width:297px;height:1px;background:#dedede;"></div><div class="a" style="left:1276px;top:592px;width:1px;height:32px;background:#e3e3e3;"></div><div class="a" style="left:1291px;top:595px;width:25px;height:25px;background:#fff;border:1px solid #9a9a9a"></div><div class="a" style="left:1304px;top:609px;width:11px;height:11px;background:#fff;border:1px solid #777"></div><div class="t" style="left:1323px;top:603px;font-size:10px;color:#333;">From selection</div><svg class="a" style="left:1257px;top:604px" width="12" height="8"><path d="M1 4 Q6 -1 11 4 Q6 9 1 4Z" fill="#333"/><circle cx="6" cy="4" r="1.6" fill="#efefef"/></svg><div class="a" style="left:1252px;top:656px;width:297px;height:1px;background:#dedede;"></div><div class="a" style="left:1276px;top:624px;width:1px;height:32px;background:#e3e3e3;"></div><div class="a" style="left:1291px;top:627px;width:25px;height:25px;background:#fff;border:1px solid #9a9a9a"></div><div class="a" style="left:1304px;top:641px;width:11px;height:11px;background:#fff;border:1px solid #777"></div><div class="t" style="left:1323px;top:635px;font-size:10px;color:#333;">From selection</div><svg class="a" style="left:1257px;top:636px" width="12" height="8"><path d="M1 4 Q6 -1 11 4 Q6 9 1 4Z" fill="#333"/><circle cx="6" cy="4" r="1.6" fill="#efefef"/></svg><div class="a" style="left:1252px;top:689px;width:297px;height:1px;background:#dedede;"></div><div class="a" style="left:1276px;top:657px;width:1px;height:32px;background:#e3e3e3;"></div><div class="a" style="left:1291px;top:660px;width:25px;height:25px;background:#fff;border:1px solid #9a9a9a"></div><div class="a" style="left:1304px;top:674px;width:11px;height:11px;background:#fff;border:1px solid #777"></div><div class="t" style="left:1323px;top:668px;font-size:10px;color:#333;">From selection</div><svg class="a" style="left:1257px;top:669px" width="12" height="8"><path d="M1 4 Q6 -1 11 4 Q6 9 1 4Z" fill="#333"/><circle cx="6" cy="4" r="1.6" fill="#efefef"/></svg><div class="a" style="left:1252px;top:721px;width:297px;height:1px;background:#dedede;"></div><div class="a" style="left:1276px;top:689px;width:1px;height:32px;background:#e3e3e3;"></div><div class="a" style="left:1291px;top:692px;width:25px;height:25px;background:#fff;border:1px solid #9a9a9a"></div><div class="a" style="left:1304px;top:706px;width:11px;height:11px;background:#fff;border:1px solid #777"></div><div class="t" style="left:1323px;top:700px;font-size:10px;color:#333;">From selection</div><div class="a" style="left:1258px;top:700px;width:10px;height:10px;background:none;border:1px solid #d8d8d8"></div><div class="a" style="left:1252px;top:753px;width:297px;height:1px;background:#dedede;"></div><div class="a" style="left:1276px;top:721px;width:1px;height:32px;background:#e3e3e3;"></div><div class="a" style="left:1291px;top:724px;width:25px;height:25px;background:#fff;border:1px solid #9a9a9a"></div><div class="a" style="left:1304px;top:738px;width:11px;height:11px;background:#fff;border:1px solid #777"></div><div class="t" style="left:1323px;top:732px;font-size:10px;color:#333;">Layer 17</div><svg class="a" style="left:1257px;top:733px" width="12" height="8"><path d="M1 4 Q6 -1 11 4 Q6 9 1 4Z" fill="#333"/><circle cx="6" cy="4" r="1.6" fill="#efefef"/></svg><div class="a" style="left:1252px;top:785px;width:297px;height:1px;background:#dedede;"></div><div class="a" style="left:1276px;top:753px;width:1px;height:32px;background:#e3e3e3;"></div><div class="a" style="left:1291px;top:756px;width:25px;height:25px;background:#fff;border:1px solid #9a9a9a"></div><div class="a" style="left:1304px;top:770px;width:11px;height:11px;background:#fff;border:1px solid #777"></div><div class="t" style="left:1323px;top:764px;font-size:10px;color:#333;">Layer 16</div><svg class="a" style="left:1257px;top:765px" width="12" height="8"><path d="M1 4 Q6 -1 11 4 Q6 9 1 4Z" fill="#333"/><circle cx="6" cy="4" r="1.6" fill="#efefef"/></svg><div class="a" style="left:1252px;top:817px;width:297px;height:1px;background:#dedede;"></div><div class="a" style="left:1276px;top:785px;width:1px;height:32px;background:#e3e3e3;"></div><div class="a" style="left:1291px;top:788px;width:25px;height:25px;background:#fff;border:1px solid #9a9a9a"></div><div class="a" style="left:1304px;top:802px;width:11px;height:11px;background:#fff;border:1px solid #777"></div><div class="t" style="left:1323px;top:796px;font-size:10px;color:#333;">Layer 16</div><svg class="a" style="left:1257px;top:797px" width="12" height="8"><path d="M1 4 Q6 -1 11 4 Q6 9 1 4Z" fill="#333"/><circle cx="6" cy="4" r="1.6" fill="#efefef"/></svg><div class="a" style="left:1252px;top:496px;width:297px;height:1px;background:#dedede;"></div><div class="a" style="left:1276px;top:472px;width:1px;height:24px;background:#e3e3e3;"></div><div class="a" style="left:1291px;top:472px;width:25px;height:20px;background:#fff;border:1px solid #9a9a9a;border-top:none"></div><div class="a" style="left:1304px;top:480px;width:11px;height:11px;background:#fff;border:1px solid #777"></div><div class="t" style="left:1323px;top:475px;font-size:10px;color:#333;">Layer 11</div><svg class="a" style="left:1257px;top:476px" width="12" height="8"><path d="M1 4 Q6 -1 11 4 Q6 9 1 4Z" fill="#333"/><circle cx="6" cy="4" r="1.6" fill="#efefef"/></svg><div class="a" style="left:1276px;top:818px;width:274px;height:32px;background:#b9b9b9;"></div><div class="a" style="left:1252px;top:850px;width:297px;height:1px;background:#dedede;"></div><div class="a" style="left:1278px;top:820px;width:27px;height:28px;background:#d8cccc;border:1px solid #777"></div><div class="t" style="left:1310px;top:829px;font-size:10px;color:#333;">Layer 20</div><svg class="a" style="left:1257px;top:830px" width="12" height="8"><path d="M1 4 Q6 -1 11 4 Q6 9 1 4Z" fill="#333"/><circle cx="6" cy="4" r="1.6" fill="#b9b9b9"/></svg><div class="a" style="left:1279px;top:853px;width:24px;height:26px;background:#f4f4f4;border:1px solid #999"></div><div class="a" style="left:1280px;top:854px;width:22px;height:19px;background:#2e2622;"></div><div class="t" style="left:1310px;top:861px;font-size:10px;color:#333;">Color Fill 1</div><svg class="a" style="left:1257px;top:862px" width="12" height="8"><path d="M1 4 Q6 -1 11 4 Q6 9 1 4Z" fill="#333"/><circle cx="6" cy="4" r="1.6" fill="#efefef"/></svg><div class="a" style="left:1252px;top:882px;width:297px;height:1px;background:#dedede;"></div><div class="a" style="left:1549px;top:472px;width:12px;height:410px;background:#e8e8e8;"></div><div class="a" style="left:1551px;top:786px;width:7px;height:94px;background:#c6c6c6;border-radius:4px"></div><svg class="a" style="left:1250px;top:400px" width="313" height="502" fill="none" stroke="#333" stroke-width="1.1"><g transform="translate(99,15)"><rect x="-5" y="-4" width="10" height="8"/><path d="M-3 2 L-1 -1 L1 1 L2 0 L4 2" stroke-width="0.9"/></g><g transform="translate(118,15)"><circle r="4.5" stroke-width="1.2"/><path d="M3.2 -3.2 A4.5 4.5 0 0 1 -3.2 3.2Z" fill="#333" stroke="none"/></g><g transform="translate(136,15)"><path d="M-4.5 -4.5 H4.5 M0 -4.5 V5 M-2 5 H2 M-4.5 -4.5 V-3 M4.5 -4.5 V-3" stroke-width="1.3"/></g><g transform="translate(156,15)"><rect x="-4" y="-4" width="8" height="8"/><path d="M-5.5 -4 H-2.5 M2.5 -4 H5.5 M-5.5 4 H-2.5 M2.5 4 H5.5" stroke-width="1.6"/></g><g transform="translate(175,15)"><path d="M-4 -5 H2 L4 -3 V5 H-4Z" stroke-width="1"/><rect x="-1" y="0" width="5" height="5" fill="#fff"/></g><g transform="translate(194,12)"><circle r="3.2" fill="#222" stroke="none"/></g><g transform="translate(39,63)"><rect x="-5" y="-5" width="10" height="10" stroke-width="1"/><path d="M-5 0 H5 M0 -5 V5" stroke-width="0.8"/><rect x="-5" y="-5" width="5" height="5" fill="#888" stroke="none"/><rect x="0" y="0" width="5" height="5" fill="#888" stroke="none"/></g><g transform="translate(57,63)"><path d="M-5 5 L4 -4" stroke-width="2"/></g><g transform="translate(73,63)"><path d="M-5 0 H5 M0 -5 V5 M-2 -3 L0 -5 L2 -3 M-2 3 L0 5 L2 3 M-3 -2 L-5 0 L-3 2 M3 -2 L5 0 L3 2" stroke-width="1"/></g><g transform="translate(91,63)"><path d="M-5 -3 H3 V5 M-3 -5 V3 H5" stroke-width="1"/></g><g transform="translate(108,63)"><rect x="-4" y="-1" width="8" height="6" fill="#222" stroke="none"/><path d="M-2.5 -1 V-3 A2.5 2.5 0 0 1 2.5 -3 V-1" stroke-width="1.3"/></g><g transform="translate(77,15)"><path d="M-2.5 -1 L0 1.5 L2.5 -1" stroke="#777"/></g><g transform="translate(191,39)"><path d="M-2.5 -1 L0 1.5 L2.5 -1" stroke="#777"/></g><g transform="translate(191,63)"><path d="M-2.5 -1 L0 1.5 L2.5 -1" stroke="#777"/></g><g transform="translate(104,39)"><path d="M-2.5 -1 L0 1.5 L2.5 -1" stroke="#777"/></g><g transform="translate(157,492)"><rect x="-7" y="-2.5" width="7" height="5" rx="2.5" stroke="#999"/><rect x="0" y="-2.5" width="7" height="5" rx="2.5" stroke="#999"/></g><g transform="translate(180,492)"><text x="-5" y="4" font-size="11" font-style="italic" font-family="Liberation Serif" fill="#444" stroke="none">fx</text></g><g transform="translate(200,492)"><rect x="-6" y="-5" width="12" height="10" fill="#222" stroke="none"/><circle r="3" fill="#fff" stroke="none"/></g><g transform="translate(222,492)"><circle r="5" stroke-width="1.3"/><path d="M3.5 -3.5 A5 5 0 0 1 -3.5 3.5Z" fill="#333" stroke="none"/></g><g transform="translate(243,492)"><path d="M-6 -4 H-2 L-1 -3 H6 V5 H-6Z" stroke="#666"/></g><g transform="translate(264,492)"><rect x="-5" y="-5" width="10" height="10" stroke="#666"/><path d="M-2.5 0 H2.5 M0 -2.5 V2.5" stroke="#666"/></g><g transform="translate(285,492)"><path d="M-5 -3 H5 M-3 -3 V-5 H3 V-3 M-4 -3 V5 H4 V-3 M-1.5 -1 V3 M1.5 -1 V3" stroke="#666"/></g></svg><div class="a" style="left:1041px;top:159px;width:177px;height:734px;background:#eeeeee;box-shadow:0 0 3px rgba(0,0,0,0.35)"></div><div class="a" style="left:1041px;top:159px;width:177px;height:25px;background:#d8d8d8;"></div><div class="a" style="left:1122px;top:159px;width:47px;height:25px;background:#eeeeee;"></div><div class="t" style="left:1049px;top:167px;font-size:9.5px;color:#666;font-weight:bold">Brush Settings</div><div class="t" style="left:1128px;top:167px;font-size:9.5px;color:#333;font-weight:bold">Brushes</div><div class="t" style="left:1186px;top:166px;font-size:11px;color:#333;">&#8250;&#8250;</div><div class="a" style="left:1201px;top:167px;width:1px;height:10px;background:#999;"></div><div class="a" style="left:1207px;top:169px;width:8px;height:6px;border-top:1px solid #888;border-bottom:1px solid #888"></div><div class="a" style="left:1207px;top:172px;width:8px;height:1px;background:#888"></div><div class="t" style="left:1046px;top:193px;font-size:9.5px;color:#aaa;">Size:</div><div class="a" style="left:1128px;top:192px;width:57px;height:11px;background:#fafafa;"></div><div class="a" style="left:1050px;top:212px;width:128px;height:2px;background:#c9c9c9;border-radius:1px"></div><div class="a" style="left:1197px;top:199px;width:13px;height:13px;background:#e4e4e4;border:1px solid #444"></div><svg class="a" style="left:1198px;top:200px" width="12" height="12"><path d="M3 10 L9 3" stroke="#222" stroke-width="1.6"/></svg><svg class="a" style="left:1045px;top:228px" width="11" height="11"><circle cx="4.5" cy="4.5" r="3" fill="none" stroke="#333" stroke-width="1.5"/><path d="M7 7 L10 10" stroke="#333" stroke-width="1.8"/></svg><div class="a" style="left:1058px;top:228px;width:160px;height:12px;background:#fcfcfc;border:1px solid #e2e2e2"></div><div class="t" style="left:1061px;top:229px;font-size:9.5px;color:#bbb;">Search Brushes</div><div class="a" style="left:1042px;top:244px;width:176px;height:26px;background:#efefef;"></div><div class="a" style="left:1050px;top:252px;width:10px;height:10px;border-radius:50%;background:radial-gradient(#111 20%,#777 60%,transparent 75%)"></div><div class="a" style="left:1069px;top:245px;width:1px;height:24px;background:#e0e0e0;"></div><div class="t" style="left:1071px;top:259px;font-size:10px;color:#444;">300</div><div class="a" style="left:1094px;top:245px;width:1px;height:24px;background:#e0e0e0;"></div><div class="t" style="left:1096px;top:259px;font-size:10px;color:#444;">800</div><div class="a" style="left:1119px;top:245px;width:1px;height:24px;background:#e0e0e0;"></div><div class="t" style="left:1121px;top:259px;font-size:10px;color:#444;">700</div><div class="a" style="left:1142px;top:245px;width:1px;height:24px;background:#e0e0e0;"></div><div class="t" style="left:1144px;top:259px;font-size:10px;color:#444;">1500</div><div class="a" style="left:1169px;top:245px;width:1px;height:24px;background:#e0e0e0;"></div><div class="t" style="left:1171px;top:259px;font-size:10px;color:#444;">400</div><div class="a" style="left:1193px;top:245px;width:1px;height:24px;background:#e0e0e0;"></div><div class="t" style="left:1195px;top:259px;font-size:10px;color:#444;">1000</div><svg class="a" style="left:1068px;top:245px" width="150" height="14" fill="none" stroke="#333" stroke-width="1.2"><path d="M8 3 L12 7 M10 2 L11 5 M17 8 L21 3"/><circle cx="9" cy="10" r="0.6" fill="#333"/><path d="M33 3 L37 7 M35 2 L36 5 M42 8 L46 3"/><path d="M55 3 H65 M58 6 Q62 10 68 7 M66 4 L70 6" stroke="#777"/><path d="M88 8 L92 3" /><circle cx="82" cy="4" r="0.8" fill="#999"/><path d="M112 8 L116 3"/><circle cx="106" cy="8" r="0.7" fill="#555"/><path d="M139 8 L143 3"/><circle cx="132" cy="4" r="0.7" fill="#555"/></svg><div class="a" style="left:1042px;top:270px;width:176px;height:623px;background:#e1e1e1;"></div><div class="a" style="left:1209px;top:274px;width:8px;height:40px;background:#c9c9c9;border-radius:4px"></div><div class="t" style="left:1048px;top:277.5px;font-size:10px;color:#666;">&#8250;</div><svg class="a" style="left:1057px;top:276.5px" width="14" height="11"><path d="M1 1.5 H5 L6.5 3 H12.5 V10 H1Z" fill="#d4d4d4" stroke="#777" stroke-width="1"/></svg><div class="t" style="left:1075px;top:277.5px;font-size:10px;color:#444;">General Brushes</div><div class="t" style="left:1048px;top:300.3px;font-size:10px;color:#666;">&#8250;</div><svg class="a" style="left:1057px;top:299.3px" width="14" height="11"><path d="M1 1.5 H5 L6.5 3 H12.5 V10 H1Z" fill="#d4d4d4" stroke="#777" stroke-width="1"/></svg><div class="t" style="left:1075px;top:300.3px;font-size:10px;color:#444;">Dry Media Brushes</div><div class="t" style="left:1048px;top:323.1px;font-size:10px;color:#666;">&#8250;</div><svg class="a" style="left:1057px;top:322.1px" width="14" height="11"><path d="M1 1.5 H5 L6.5 3 H12.5 V10 H1Z" fill="#d4d4d4" stroke="#777" stroke-width="1"/></svg><div class="t" style="left:1075px;top:323.1px;font-size:10px;color:#444;">Wet Media Brushes</div><div class="t" style="left:1048px;top:345.9px;font-size:10px;color:#666;">&#8250;</div><svg class="a" style="left:1057px;top:344.9px" width="14" height="11"><path d="M1 1.5 H5 L6.5 3 H12.5 V10 H1Z" fill="#d4d4d4" stroke="#777" stroke-width="1"/></svg><div class="t" style="left:1075px;top:345.9px;font-size:10px;color:#444;">Special Effects Brushes</div><div class="t" style="left:1048px;top:368.7px;font-size:10px;color:#666;">&#8250;</div><svg class="a" style="left:1057px;top:367.7px" width="14" height="11"><path d="M1 1.5 H5 L6.5 3 H12.5 V10 H1Z" fill="#d4d4d4" stroke="#777" stroke-width="1"/></svg><div class="t" style="left:1075px;top:368.7px;font-size:10px;color:#444;">Legacy Brushes</div><div class="t" style="left:1048px;top:391.5px;font-size:10px;color:#666;">&#8250;</div><svg class="a" style="left:1057px;top:390.5px" width="14" height="11"><path d="M1 1.5 H5 L6.5 3 H12.5 V10 H1Z" fill="#d4d4d4" stroke="#777" stroke-width="1"/></svg><div class="t" style="left:1075px;top:391.5px;font-size:10px;color:#444;">letterers</div><div class="t" style="left:1048px;top:414.3px;font-size:10px;color:#666;">&#8250;</div><svg class="a" style="left:1057px;top:413.3px" width="14" height="11"><path d="M1 1.5 H5 L6.5 3 H12.5 V10 H1Z" fill="#d4d4d4" stroke="#777" stroke-width="1"/></svg><div class="t" style="left:1075px;top:414.3px;font-size:10px;color:#444;">rakes</div><div class="t" style="left:1048px;top:437.1px;font-size:10px;color:#666;">&#8250;</div><svg class="a" style="left:1057px;top:436.1px" width="14" height="11"><path d="M1 1.5 H5 L6.5 3 H12.5 V10 H1Z" fill="#d4d4d4" stroke="#777" stroke-width="1"/></svg><div class="t" style="left:1075px;top:437.1px;font-size:10px;color:#444;">dry_media</div><div class="t" style="left:1048px;top:459.9px;font-size:10px;color:#666;">&#8250;</div><svg class="a" style="left:1057px;top:458.9px" width="14" height="11"><path d="M1 1.5 H5 L6.5 3 H12.5 V10 H1Z" fill="#d4d4d4" stroke="#777" stroke-width="1"/></svg><div class="t" style="left:1075px;top:459.9px;font-size:10px;color:#444;">gouache 2</div><div class="t" style="left:1048px;top:482.70000000000005px;font-size:10px;color:#666;">&#8250;</div><svg class="a" style="left:1057px;top:481.7px" width="14" height="11"><path d="M1 1.5 H5 L6.5 3 H12.5 V10 H1Z" fill="#d4d4d4" stroke="#777" stroke-width="1"/></svg><div class="t" style="left:1075px;top:482.70000000000005px;font-size:10px;color:#444;">gouache</div><div class="t" style="left:1048px;top:505.5px;font-size:10px;color:#666;">&#8250;</div><svg class="a" style="left:1057px;top:504.5px" width="14" height="11"><path d="M1 1.5 H5 L6.5 3 H12.5 V10 H1Z" fill="#d4d4d4" stroke="#777" stroke-width="1"/></svg><div class="t" style="left:1075px;top:505.5px;font-size:10px;color:#444;">megapack</div><div class="t" style="left:1048px;top:528.3px;font-size:10px;color:#666;">&#8964;</div><svg class="a" style="left:1057px;top:527.3px" width="14" height="11"><path d="M1 1.5 H5 L6.5 3 H12.5 V10 H1Z" fill="#d4d4d4" stroke="#777" stroke-width="1"/></svg><div class="t" style="left:1075px;top:528.3px;font-size:10px;color:#444;">spatter_brushes</div><div class="a" style="left:1042px;top:545px;width:176px;height:325px;background:#e6e6e6;"></div><div class="a" style="left:1194px;top:545px;width:15px;height:325px;background:#e1e1e1;"></div><div class="a" style="left:1059px;top:545.0px;width:135px;height:35px;background:#f1f1f1;"></div><div class="t" style="left:1062px;top:567.0px;font-size:9.5px;color:#333;">Kyle's Spatter Brushes - As...</div><svg class="a" style="left:1184px;top:548.0px" width="9" height="9"><path d="M1 8 L7 2" stroke="#222" stroke-width="1.5"/></svg><div class="a" style="left:1059px;top:581.1px;width:135px;height:35px;background:#f1f1f1;"></div><div class="t" style="left:1062px;top:603.1px;font-size:9.5px;color:#333;">Big Basic</div><svg class="a" style="left:1184px;top:584.1px" width="9" height="9"><path d="M1 8 L7 2" stroke="#222" stroke-width="1.5"/></svg><div class="a" style="left:1059px;top:617.2px;width:135px;height:35px;background:#f1f1f1;"></div><div class="t" style="left:1062px;top:639.2px;font-size:9.5px;color:#333;">Dampy Drip 01</div><svg class="a" style="left:1184px;top:620.2px" width="9" height="9"><path d="M1 8 L7 2" stroke="#222" stroke-width="1.5"/></svg><div class="a" style="left:1059px;top:653.3px;width:135px;height:35px;background:#f1f1f1;"></div><div class="t" style="left:1062px;top:675.3px;font-size:9.5px;color:#333;">Dampy Drip 02</div><svg class="a" style="left:1184px;top:656.3px" width="9" height="9"><path d="M1 8 L7 2" stroke="#222" stroke-width="1.5"/></svg><div class="a" style="left:1059px;top:689.4px;width:135px;height:35px;background:#f1f1f1;"></div><div class="t" style="left:1062px;top:711.4px;font-size:9.5px;color:#333;">Dots 1</div><svg class="a" style="left:1184px;top:692.4px" width="9" height="9"><path d="M1 8 L7 2" stroke="#222" stroke-width="1.5"/></svg><div class="a" style="left:1059px;top:725.5px;width:135px;height:35px;background:#f1f1f1;"></div><div class="t" style="left:1062px;top:747.5px;font-size:9.5px;color:#333;">Dusty Bits</div><svg class="a" style="left:1184px;top:728.5px" width="9" height="9"><path d="M1 8 L7 2" stroke="#222" stroke-width="1.5"/></svg><div class="a" style="left:1059px;top:761.6px;width:135px;height:35px;background:#f1f1f1;"></div><div class="t" style="left:1062px;top:783.6px;font-size:9.5px;color:#333;">Etching Dirty</div><svg class="a" style="left:1184px;top:764.6px" width="9" height="9"><path d="M1 8 L7 2" stroke="#222" stroke-width="1.5"/></svg><div class="a" style="left:1059px;top:797.7px;width:135px;height:35px;background:#f1f1f1;"></div><div class="t" style="left:1062px;top:819.7px;font-size:9.5px;color:#333;">Instant Poppy Field</div><svg class="a" style="left:1184px;top:800.7px" width="9" height="9"><path d="M1 8 L7 2" stroke="#222" stroke-width="1.5"/></svg><div class="a" style="left:1059px;top:833.8px;width:135px;height:35px;background:#f1f1f1;"></div><div class="t" style="left:1062px;top:855.8px;font-size:9.5px;color:#333;">Landscaper 1</div><svg class="a" style="left:1184px;top:836.8px" width="9" height="9"><path d="M1 8 L7 2" stroke="#222" stroke-width="1.5"/></svg><svg class="a" style="left:1059px;top:545px" width="135" height="325"><circle cx="63.0" cy="10.4" r="1.4" fill="#333"/><circle cx="64.2" cy="10.1" r="1.0" fill="#333"/><circle cx="37.5" cy="10.1" r="1.1" fill="#333"/><circle cx="95.3" cy="8.0" r="0.7" fill="#333"/><circle cx="28.6" cy="11.3" r="1.2" fill="#333"/><circle cx="24.0" cy="11.8" r="1.5" fill="#333"/><circle cx="82.1" cy="10.7" r="0.6" fill="#333"/><circle cx="21.4" cy="10.1" r="0.5" fill="#333"/><circle cx="38.1" cy="8.8" r="0.4" fill="#333"/><circle cx="64.1" cy="9.6" r="1.3" fill="#333"/><circle cx="69.3" cy="11.0" r="0.9" fill="#333"/><circle cx="82.9" cy="9.7" r="0.7" fill="#333"/><circle cx="114.8" cy="11.7" r="1.3" fill="#333"/><circle cx="87.2" cy="9.0" r="0.7" fill="#333"/><circle cx="47.5" cy="7.6" r="1.2" fill="#333"/><circle cx="58.0" cy="12.2" r="0.8" fill="#333"/><circle cx="111.0" cy="11.3" r="0.4" fill="#333"/><circle cx="39.9" cy="12.0" r="0.9" fill="#333"/><circle cx="113.1" cy="9.6" r="0.5" fill="#333"/><circle cx="79.8" cy="11.7" r="0.7" fill="#333"/><circle cx="28.3" cy="9.3" r="1.5" fill="#333"/><circle cx="92.0" cy="8.0" r="0.7" fill="#333"/><circle cx="29.6" cy="8.1" r="1.3" fill="#333"/><circle cx="36.9" cy="10.3" r="0.9" fill="#333"/><circle cx="38.1" cy="11.1" r="0.5" fill="#333"/><circle cx="81.2" cy="7.7" r="0.9" fill="#333"/><circle cx="40.2" cy="8.9" r="1.5" fill="#333"/><circle cx="96.3" cy="9.0" r="1.4" fill="#333"/><circle cx="40.0" cy="9.5" r="1.3" fill="#333"/><circle cx="81.0" cy="7.6" r="1.5" fill="#333"/><circle cx="40.3" cy="8.8" r="1.2" fill="#333"/><circle cx="51.3" cy="8.8" r="0.5" fill="#333"/><circle cx="28.6" cy="10.3" r="0.7" fill="#333"/><circle cx="77.1" cy="9.2" r="0.9" fill="#333"/><circle cx="111.1" cy="9.9" r="1.0" fill="#333"/><circle cx="102.3" cy="8.6" r="0.6" fill="#333"/><circle cx="106.3" cy="11.3" r="0.7" fill="#333"/><circle cx="38.0" cy="11.2" r="1.4" fill="#333"/><circle cx="38.7" cy="12.2" r="1.4" fill="#333"/><circle cx="77.3" cy="9.5" r="0.5" fill="#333"/><circle cx="23.7" cy="11.7" r="0.7" fill="#333"/><circle cx="86.9" cy="8.6" r="1.3" fill="#333"/><circle cx="76.7" cy="8.7" r="0.6" fill="#333"/><circle cx="88.4" cy="7.6" r="0.7" fill="#333"/><circle cx="73.1" cy="12.3" r="1.1" fill="#333"/><circle cx="46.6" cy="12.3" r="0.6" fill="#333"/><circle cx="21.6" cy="9.2" r="0.9" fill="#333"/><circle cx="25.7" cy="8.7" r="0.8" fill="#333"/><circle cx="74.4" cy="7.6" r="0.8" fill="#333"/><circle cx="104.6" cy="12.0" r="1.1" fill="#333"/><circle cx="85.7" cy="10.5" r="0.6" fill="#333"/><circle cx="23.3" cy="8.2" r="1.4" fill="#333"/><circle cx="86.6" cy="12.6" r="0.4" fill="#333"/><circle cx="80.4" cy="9.9" r="1.2" fill="#333"/><circle cx="50.3" cy="12.9" r="0.5" fill="#333"/><circle cx="71.9" cy="11.6" r="1.4" fill="#333"/><circle cx="90.0" cy="11.1" r="1.3" fill="#333"/><circle cx="106.9" cy="9.4" r="1.2" fill="#333"/><circle cx="105.6" cy="11.6" r="0.9" fill="#333"/><circle cx="95.1" cy="11.8" r="1.0" fill="#333"/><circle cx="79.4" cy="9.3" r="1.0" fill="#333"/><circle cx="77.8" cy="7.4" r="1.1" fill="#333"/><circle cx="114.4" cy="11.3" r="1.2" fill="#333"/><circle cx="56.9" cy="11.5" r="1.0" fill="#333"/><circle cx="61.8" cy="12.2" r="0.5" fill="#333"/><circle cx="91.3" cy="7.5" r="1.1" fill="#333"/><circle cx="65.7" cy="8.1" r="1.2" fill="#333"/><circle cx="67.2" cy="10.8" r="1.4" fill="#333"/><circle cx="44.3" cy="7.4" r="0.7" fill="#333"/><circle cx="84.4" cy="8.3" r="0.6" fill="#333"/><circle cx="106.0" cy="10.7" r="0.9" fill="#333"/><circle cx="104.7" cy="9.3" r="1.1" fill="#333"/><circle cx="38.9" cy="9.7" r="1.3" fill="#333"/><circle cx="106.9" cy="11.6" r="0.8" fill="#333"/><circle cx="75.4" cy="8.8" r="0.5" fill="#333"/><circle cx="67.2" cy="12.4" r="1.3" fill="#333"/><circle cx="87.6" cy="12.5" r="0.7" fill="#333"/><circle cx="36.1" cy="9.8" r="0.7" fill="#333"/><circle cx="40.3" cy="9.6" r="1.1" fill="#333"/><circle cx="66.9" cy="8.7" r="1.3" fill="#333"/><circle cx="113.3" cy="9.8" r="0.5" fill="#333"/><circle cx="23.0" cy="11.4" r="0.4" fill="#333"/><circle cx="87.3" cy="10.4" r="0.7" fill="#333"/><circle cx="95.2" cy="7.6" r="0.5" fill="#333"/><circle cx="63.2" cy="6.8" r="1.3" fill="#333"/><circle cx="42.6" cy="8.1" r="0.5" fill="#333"/><circle cx="79.8" cy="9.7" r="1.1" fill="#333"/><circle cx="82.2" cy="11.8" r="1.5" fill="#333"/><circle cx="85.0" cy="8.3" r="0.9" fill="#333"/><circle cx="37.0" cy="7.7" r="0.9" fill="#333"/><path d="M15 46 Q40 40 65 45 Q90 50 112 44" stroke="#1e1e1e" stroke-width="4" fill="none" stroke-linecap="round"/><circle cx="84.3" cy="44.0" r="0.6" fill="#444"/><circle cx="48.5" cy="47.3" r="0.8" fill="#444"/><circle cx="74.6" cy="47.8" r="0.7" fill="#444"/><circle cx="91.8" cy="48.3" r="0.5" fill="#444"/><circle cx="105.5" cy="47.0" r="0.5" fill="#444"/><circle cx="59.0" cy="47.0" r="1.1" fill="#444"/><circle cx="51.5" cy="46.5" r="1.1" fill="#444"/><circle cx="92.3" cy="48.5" r="0.8" fill="#444"/><circle cx="78.2" cy="44.0" r="1.0" fill="#444"/><circle cx="94.4" cy="46.8" r="1.0" fill="#444"/><circle cx="35.7" cy="48.3" r="1.2" fill="#444"/><circle cx="109.8" cy="46.2" r="1.0" fill="#444"/><circle cx="46.1" cy="48.7" r="1.1" fill="#444"/><circle cx="48.8" cy="43.2" r="0.8" fill="#444"/><circle cx="68.4" cy="48.0" r="0.8" fill="#444"/><circle cx="17.8" cy="47.3" r="0.5" fill="#444"/><circle cx="92.6" cy="44.2" r="0.7" fill="#444"/><circle cx="91.4" cy="44.0" r="0.5" fill="#444"/><circle cx="65.1" cy="47.8" r="1.1" fill="#444"/><circle cx="81.9" cy="48.9" r="0.8" fill="#444"/><circle cx="107.1" cy="44.2" r="0.6" fill="#444"/><circle cx="66.1" cy="44.4" r="1.0" fill="#444"/><circle cx="77.0" cy="46.2" r="1.1" fill="#444"/><circle cx="69.3" cy="44.6" r="0.7" fill="#444"/><circle cx="97.0" cy="48.1" r="0.6" fill="#444"/><circle cx="97.5" cy="48.4" r="0.8" fill="#444"/><circle cx="70.6" cy="43.8" r="0.8" fill="#444"/><circle cx="63.8" cy="46.8" r="0.4" fill="#444"/><circle cx="109.0" cy="46.1" r="0.7" fill="#444"/><circle cx="92.7" cy="46.4" r="0.8" fill="#444"/><circle cx="82.0" cy="43.2" r="0.8" fill="#444"/><circle cx="55.1" cy="49.3" r="1.1" fill="#444"/><circle cx="41.1" cy="45.8" r="0.5" fill="#444"/><circle cx="57.1" cy="48.4" r="1.1" fill="#444"/><circle cx="61.2" cy="44.6" r="0.6" fill="#444"/><circle cx="74.9" cy="49.0" r="0.5" fill="#444"/><circle cx="90.6" cy="43.2" r="0.6" fill="#444"/><circle cx="37.0" cy="47.1" r="0.7" fill="#444"/><circle cx="49.5" cy="46.8" r="0.5" fill="#444"/><circle cx="85.9" cy="43.7" r="0.8" fill="#444"/><circle cx="39.3" cy="44.2" r="0.8" fill="#444"/><circle cx="57.4" cy="45.1" r="0.7" fill="#444"/><circle cx="66.3" cy="43.4" r="0.6" fill="#444"/><circle cx="76.2" cy="47.0" r="0.8" fill="#444"/><circle cx="97.6" cy="46.6" r="1.1" fill="#444"/><circle cx="37.6" cy="47.4" r="1.0" fill="#444"/><circle cx="102.6" cy="45.1" r="0.7" fill="#444"/><circle cx="104.5" cy="44.7" r="1.2" fill="#444"/><circle cx="101.1" cy="44.2" r="0.6" fill="#444"/><circle cx="85.5" cy="44.5" r="0.5" fill="#444"/><circle cx="95.7" cy="45.6" r="1.0" fill="#444"/><circle cx="27.2" cy="45.5" r="0.9" fill="#444"/><circle cx="16.7" cy="44.8" r="0.9" fill="#444"/><circle cx="103.4" cy="48.2" r="0.5" fill="#444"/><circle cx="64.1" cy="48.1" r="0.8" fill="#444"/><circle cx="81.5" cy="44.0" r="0.5" fill="#444"/><circle cx="25.3" cy="43.8" r="0.8" fill="#444"/><circle cx="64.9" cy="46.5" r="0.5" fill="#444"/><circle cx="32.9" cy="44.4" r="1.1" fill="#444"/><circle cx="111.1" cy="47.7" r="0.5" fill="#444"/><circle cx="43.4" cy="87.6" r="0.8" fill="#777"/><circle cx="82.1" cy="82.2" r="0.8" fill="#777"/><circle cx="68.3" cy="83.0" r="0.9" fill="#777"/><circle cx="40.7" cy="85.4" r="1.2" fill="#777"/><circle cx="50.0" cy="83.6" r="1.1" fill="#777"/><circle cx="62.3" cy="80.1" r="0.5" fill="#777"/><circle cx="68.2" cy="77.3" r="1.2" fill="#777"/><circle cx="84.1" cy="86.0" r="1.2" fill="#777"/><circle cx="74.6" cy="82.8" r="0.9" fill="#777"/><circle cx="67.7" cy="90.7" r="1.1" fill="#777"/><circle cx="54.2" cy="88.4" r="1.1" fill="#777"/><circle cx="82.8" cy="87.2" r="0.8" fill="#777"/><circle cx="89.3" cy="87.2" r="1.0" fill="#777"/><circle cx="82.2" cy="86.7" r="0.8" fill="#777"/><circle cx="79.7" cy="79.3" r="0.7" fill="#777"/><circle cx="65.8" cy="77.4" r="0.7" fill="#777"/><circle cx="75.1" cy="85.5" r="0.6" fill="#777"/><circle cx="92.0" cy="85.3" r="0.7" fill="#777"/><circle cx="76.3" cy="84.8" r="0.9" fill="#777"/><circle cx="61.4" cy="90.2" r="1.0" fill="#777"/><circle cx="78.6" cy="86.9" r="1.3" fill="#777"/><circle cx="41.3" cy="84.8" r="1.1" fill="#777"/><circle cx="54.1" cy="83.0" r="0.4" fill="#777"/><circle cx="50.7" cy="82.8" r="0.5" fill="#777"/><circle cx="53.8" cy="88.3" r="0.9" fill="#777"/><circle cx="67.9" cy="90.5" r="0.9" fill="#777"/><circle cx="94.7" cy="85.0" r="1.1" fill="#777"/><circle cx="44.2" cy="84.8" r="1.1" fill="#777"/><circle cx="42.5" cy="87.3" r="0.5" fill="#777"/><circle cx="65.9" cy="79.5" r="0.8" fill="#777"/><circle cx="73.6" cy="78.5" r="1.3" fill="#777"/><circle cx="63.1" cy="84.3" r="0.9" fill="#777"/><circle cx="60.1" cy="81.4" r="1.0" fill="#777"/><circle cx="70.8" cy="81.2" r="1.0" fill="#777"/><circle cx="56.3" cy="78.6" r="0.6" fill="#777"/><circle cx="42.4" cy="81.4" r="1.1" fill="#777"/><circle cx="61.4" cy="89.0" r="1.1" fill="#777"/><circle cx="42.8" cy="87.8" r="1.3" fill="#777"/><circle cx="44.0" cy="87.3" r="0.8" fill="#777"/><circle cx="66.3" cy="90.5" r="0.6" fill="#777"/><circle cx="68.8" cy="90.0" r="1.1" fill="#777"/><circle cx="65.8" cy="90.5" r="1.1" fill="#777"/><circle cx="73.2" cy="79.2" r="1.0" fill="#777"/><circle cx="65.1" cy="80.0" r="0.4" fill="#777"/><circle cx="69.0" cy="78.9" r="0.8" fill="#777"/><circle cx="80.8" cy="118.7" r="0.7" fill="#333"/><circle cx="73.2" cy="118.4" r="1.2" fill="#333"/><circle cx="68.7" cy="122.9" r="1.4" fill="#333"/><circle cx="86.6" cy="117.4" r="0.5" fill="#333"/><circle cx="100.6" cy="120.4" r="1.0" fill="#333"/><circle cx="53.6" cy="117.4" r="1.1" fill="#333"/><circle cx="71.7" cy="119.7" r="1.0" fill="#333"/><circle cx="88.3" cy="117.1" r="0.6" fill="#333"/><circle cx="108.2" cy="120.7" r="1.3" fill="#333"/><circle cx="25.5" cy="117.1" r="0.7" fill="#333"/><circle cx="59.4" cy="119.9" r="0.5" fill="#333"/><circle cx="69.7" cy="115.7" r="0.5" fill="#333"/><circle cx="81.5" cy="119.3" r="1.0" fill="#333"/><circle cx="54.8" cy="118.9" r="0.6" fill="#333"/><circle cx="52.2" cy="120.7" r="1.2" fill="#333"/><circle cx="28.5" cy="117.3" r="1.2" fill="#333"/><circle cx="76.9" cy="120.9" r="0.6" fill="#333"/><circle cx="59.3" cy="117.2" r="1.2" fill="#333"/><circle cx="54.5" cy="120.1" r="1.4" fill="#333"/><circle cx="50.6" cy="119.3" r="1.1" fill="#333"/><circle cx="103.0" cy="118.7" r="0.8" fill="#333"/><circle cx="30.5" cy="120.8" r="0.5" fill="#333"/><circle cx="29.3" cy="119.3" r="0.9" fill="#333"/><circle cx="82.3" cy="117.7" r="1.2" fill="#333"/><circle cx="28.7" cy="117.7" r="1.1" fill="#333"/><circle cx="29.2" cy="118.1" r="1.1" fill="#333"/><circle cx="83.1" cy="117.6" r="0.5" fill="#333"/><circle cx="53.5" cy="120.6" r="0.8" fill="#333"/><circle cx="32.3" cy="120.0" r="1.0" fill="#333"/><circle cx="102.8" cy="121.0" r="1.3" fill="#333"/><circle cx="60.5" cy="121.3" r="0.7" fill="#333"/><circle cx="50.0" cy="118.3" r="1.3" fill="#333"/><circle cx="100.7" cy="117.8" r="0.8" fill="#333"/><circle cx="54.2" cy="118.1" r="0.8" fill="#333"/><circle cx="56.1" cy="116.8" r="1.0" fill="#333"/><circle cx="92.1" cy="119.2" r="1.2" fill="#333"/><circle cx="71.5" cy="116.6" r="1.2" fill="#333"/><circle cx="99.5" cy="117.9" r="0.4" fill="#333"/><circle cx="67.4" cy="119.3" r="1.0" fill="#333"/><circle cx="107.0" cy="119.6" r="1.2" fill="#333"/><circle cx="27.6" cy="119.2" r="1.2" fill="#333"/><circle cx="29.4" cy="117.0" r="1.1" fill="#333"/><circle cx="101.1" cy="117.0" r="1.0" fill="#333"/><circle cx="34.7" cy="120.3" r="1.0" fill="#333"/><circle cx="43.6" cy="117.3" r="1.2" fill="#333"/><circle cx="67.9" cy="121.1" r="0.8" fill="#333"/><circle cx="51.7" cy="122.1" r="1.1" fill="#333"/><circle cx="65.4" cy="119.3" r="1.1" fill="#333"/><circle cx="84.3" cy="121.6" r="0.8" fill="#333"/><circle cx="94.7" cy="119.9" r="1.3" fill="#333"/><circle cx="92.9" cy="120.9" r="1.3" fill="#333"/><circle cx="106.3" cy="119.6" r="0.9" fill="#333"/><circle cx="84.5" cy="120.9" r="0.8" fill="#333"/><circle cx="59.0" cy="116.4" r="1.1" fill="#333"/><circle cx="109.2" cy="118.5" r="0.6" fill="#333"/><circle cx="40.0" cy="118.6" r="0.7" fill="#333"/><circle cx="107.3" cy="117.1" r="0.7" fill="#333"/><circle cx="32.1" cy="119.7" r="1.2" fill="#333"/><circle cx="37.8" cy="116.6" r="0.9" fill="#333"/><circle cx="73.4" cy="122.0" r="0.4" fill="#333"/><circle cx="31.6" cy="117.5" r="0.6" fill="#333"/><circle cx="42.7" cy="120.3" r="1.0" fill="#333"/><circle cx="41.7" cy="117.2" r="0.7" fill="#333"/><circle cx="37.2" cy="120.4" r="0.7" fill="#333"/><circle cx="70.2" cy="121.4" r="0.9" fill="#333"/><circle cx="44.9" cy="121.4" r="1.3" fill="#333"/><circle cx="52.1" cy="119.3" r="1.4" fill="#333"/><circle cx="64.5" cy="116.8" r="0.4" fill="#333"/><circle cx="105.4" cy="120.3" r="0.8" fill="#333"/><circle cx="68.4" cy="119.1" r="0.7" fill="#333"/><circle cx="109.1" cy="119.6" r="0.6" fill="#333"/><circle cx="23.0" cy="118.9" r="0.8" fill="#333"/><circle cx="92.1" cy="120.2" r="1.0" fill="#333"/><circle cx="35.8" cy="117.2" r="0.7" fill="#333"/><circle cx="44.8" cy="121.2" r="0.9" fill="#333"/><circle cx="78.1" cy="122.4" r="0.7" fill="#333"/><circle cx="69.0" cy="116.3" r="1.2" fill="#333"/><circle cx="22.1" cy="120.3" r="1.2" fill="#333"/><circle cx="94.3" cy="116.7" r="0.7" fill="#333"/><circle cx="85.1" cy="116.5" r="0.9" fill="#333"/><circle cx="68.1" cy="228.2" r="0.8" fill="#555"/><circle cx="91.4" cy="225.4" r="1.0" fill="#555"/><circle cx="65.0" cy="227.9" r="0.5" fill="#555"/><circle cx="89.6" cy="225.0" r="0.8" fill="#555"/><circle cx="71.5" cy="224.3" r="1.0" fill="#555"/><circle cx="58.7" cy="225.2" r="0.5" fill="#555"/><circle cx="58.3" cy="225.9" r="0.9" fill="#555"/><circle cx="61.6" cy="226.8" r="0.5" fill="#555"/><circle cx="63.7" cy="225.8" r="1.1" fill="#555"/><circle cx="89.8" cy="226.5" r="0.4" fill="#555"/><circle cx="62.6" cy="226.9" r="0.6" fill="#555"/><circle cx="73.8" cy="225.8" r="0.4" fill="#555"/><circle cx="99.5" cy="226.8" r="0.5" fill="#555"/><circle cx="77.0" cy="225.1" r="0.7" fill="#555"/><circle cx="72.4" cy="225.0" r="0.6" fill="#555"/><circle cx="63.5" cy="226.7" r="0.6" fill="#555"/><circle cx="52.0" cy="226.8" r="0.6" fill="#555"/><circle cx="96.7" cy="226.2" r="0.9" fill="#555"/><circle cx="59.9" cy="227.4" r="0.5" fill="#555"/><circle cx="48.4" cy="224.7" r="0.9" fill="#555"/><circle cx="81.9" cy="260.7" r="0.8" fill="#333"/><circle cx="87.7" cy="263.6" r="0.5" fill="#333"/><circle cx="60.2" cy="260.8" r="0.5" fill="#333"/><circle cx="68.3" cy="259.5" r="1.4" fill="#333"/><circle cx="69.2" cy="263.1" r="1.1" fill="#333"/><circle cx="84.5" cy="265.1" r="0.8" fill="#333"/><circle cx="64.9" cy="262.3" r="0.4" fill="#333"/><circle cx="68.0" cy="264.6" r="1.5" fill="#333"/><circle cx="85.5" cy="264.0" r="1.1" fill="#333"/><circle cx="50.8" cy="262.2" r="0.8" fill="#333"/><circle cx="79.3" cy="260.0" r="0.8" fill="#333"/><circle cx="72.9" cy="265.6" r="1.3" fill="#333"/><circle cx="77.5" cy="260.3" r="1.2" fill="#333"/><circle cx="90.6" cy="263.3" r="0.8" fill="#333"/><circle cx="72.5" cy="259.8" r="1.2" fill="#333"/><circle cx="94.4" cy="263.1" r="1.2" fill="#333"/><circle cx="87.6" cy="261.2" r="1.4" fill="#333"/><circle cx="78.2" cy="260.6" r="0.5" fill="#333"/><circle cx="61.0" cy="263.5" r="1.2" fill="#333"/><circle cx="64.8" cy="266.2" r="0.8" fill="#333"/><circle cx="70.8" cy="259.7" r="1.5" fill="#333"/><circle cx="56.1" cy="265.3" r="1.0" fill="#333"/><circle cx="75.2" cy="263.5" r="0.7" fill="#333"/><circle cx="90.9" cy="265.6" r="1.3" fill="#333"/><circle cx="77.1" cy="259.9" r="1.3" fill="#333"/><circle cx="50.1" cy="301.8" r="0.6" fill="#333"/><circle cx="74.9" cy="301.8" r="0.6" fill="#333"/><circle cx="72.7" cy="295.4" r="0.4" fill="#333"/><circle cx="40.7" cy="302.0" r="1.3" fill="#333"/><circle cx="82.3" cy="297.5" r="1.1" fill="#333"/><circle cx="89.2" cy="298.2" r="1.0" fill="#333"/><circle cx="94.9" cy="296.0" r="0.6" fill="#333"/><circle cx="65.7" cy="295.9" r="0.8" fill="#333"/><circle cx="74.5" cy="296.3" r="0.9" fill="#333"/><circle cx="47.9" cy="299.5" r="0.7" fill="#333"/><circle cx="80.8" cy="295.4" r="1.1" fill="#333"/><circle cx="37.6" cy="301.7" r="1.0" fill="#333"/><circle cx="65.9" cy="298.2" r="1.0" fill="#333"/><circle cx="85.0" cy="300.9" r="1.2" fill="#333"/><circle cx="67.3" cy="303.4" r="1.2" fill="#333"/><circle cx="99.4" cy="298.5" r="0.8" fill="#333"/><circle cx="74.2" cy="302.4" r="0.9" fill="#333"/><circle cx="70.7" cy="298.4" r="1.3" fill="#333"/><circle cx="52.9" cy="295.7" r="1.1" fill="#333"/><circle cx="103.3" cy="300.3" r="1.0" fill="#333"/><circle cx="90.4" cy="297.7" r="1.0" fill="#333"/><circle cx="31.1" cy="297.1" r="0.8" fill="#333"/><circle cx="68.7" cy="298.1" r="0.5" fill="#333"/><circle cx="85.5" cy="299.2" r="0.6" fill="#333"/><circle cx="51.6" cy="298.2" r="0.6" fill="#333"/><circle cx="31.0" cy="301.1" r="1.4" fill="#333"/><circle cx="82.9" cy="301.8" r="0.8" fill="#333"/><circle cx="95.1" cy="297.3" r="1.1" fill="#333"/><circle cx="74.3" cy="302.4" r="0.5" fill="#333"/><circle cx="93.9" cy="296.6" r="0.9" fill="#333"/><circle cx="107.7" cy="296.5" r="0.6" fill="#333"/><circle cx="51.0" cy="297.7" r="0.5" fill="#333"/><circle cx="102.9" cy="300.7" r="0.8" fill="#333"/><circle cx="56.0" cy="299.7" r="0.4" fill="#333"/><circle cx="27.7" cy="300.9" r="0.7" fill="#333"/><circle cx="68.4" cy="302.9" r="1.4" fill="#333"/><circle cx="66.1" cy="296.4" r="0.7" fill="#333"/><circle cx="105.3" cy="301.1" r="0.6" fill="#333"/><circle cx="97.9" cy="298.1" r="0.9" fill="#333"/><circle cx="40.0" cy="301.3" r="1.4" fill="#333"/><circle cx="42.6" cy="299.8" r="0.6" fill="#333"/><circle cx="101.6" cy="296.5" r="0.5" fill="#333"/><circle cx="88.1" cy="297.7" r="1.3" fill="#333"/><circle cx="100.7" cy="300.2" r="0.5" fill="#333"/><circle cx="85.5" cy="302.2" r="0.8" fill="#333"/><circle cx="31.9" cy="297.6" r="0.7" fill="#333"/><circle cx="86.8" cy="296.8" r="0.6" fill="#333"/><circle cx="45.5" cy="300.1" r="1.2" fill="#333"/><circle cx="57.4" cy="300.3" r="1.3" fill="#333"/><circle cx="76.3" cy="296.8" r="0.7" fill="#333"/><circle cx="105.6" cy="299.9" r="0.7" fill="#333"/><circle cx="80.7" cy="295.8" r="1.4" fill="#333"/><circle cx="63.3" cy="299.2" r="0.9" fill="#333"/><circle cx="28.9" cy="299.5" r="0.7" fill="#333"/><circle cx="46.8" cy="301.0" r="0.5" fill="#333"/><circle cx="49.8" cy="300.8" r="0.6" fill="#333"/><circle cx="49.3" cy="299.3" r="0.6" fill="#333"/><circle cx="103.0" cy="301.6" r="0.4" fill="#333"/><circle cx="65.2" cy="301.2" r="0.8" fill="#333"/><circle cx="105.8" cy="299.0" r="0.6" fill="#333"/><circle cx="73.4" cy="300.2" r="0.8" fill="#333"/><circle cx="82.3" cy="301.1" r="0.9" fill="#333"/><circle cx="69.0" cy="302.1" r="1.1" fill="#333"/><circle cx="70.3" cy="303.0" r="0.6" fill="#333"/><circle cx="92.8" cy="296.8" r="1.0" fill="#333"/><circle cx="45.5" cy="298.6" r="1.2" fill="#333"/><circle cx="93.4" cy="300.9" r="0.6" fill="#333"/><circle cx="67.6" cy="296.5" r="1.0" fill="#333"/><circle cx="68.4" cy="294.8" r="1.0" fill="#333"/><circle cx="87.2" cy="299.5" r="1.3" fill="#333"/><circle cx="40.7" cy="296.9" r="0.4" fill="#333"/><circle cx="68.2" cy="298.4" r="0.8" fill="#333"/><circle cx="47.9" cy="301.0" r="0.5" fill="#333"/><circle cx="103.9" cy="299.4" r="0.9" fill="#333"/><circle cx="93.9" cy="297.3" r="0.5" fill="#333"/><circle cx="52.1" cy="295.7" r="0.7" fill="#333"/><circle cx="79.0" cy="299.2" r="0.7" fill="#333"/><circle cx="76.2" cy="295.6" r="1.2" fill="#333"/><circle cx="39.9" cy="297.5" r="0.6" fill="#333"/><circle cx="85.1" cy="301.4" r="1.2" fill="#333"/></svg><div class="a" style="left:1042px;top:870px;width:176px;height:20px;background:#eeeeee;"></div><div class="a" style="left:1050px;top:877px;width:50px;height:1px;background:#bbb;"></div><svg class="a" style="left:1053px;top:874px" width="14" height="12"><path d="M1 11 Q7 0 13 11Z" fill="#fff" stroke="#777"/></svg><svg class="a" style="left:1140px;top:874px" width="12" height="10"><path d="M1 1.5 H5 L6.5 3 H11 V9 H1Z" fill="#ddd" stroke="#777"/></svg><div class="a" style="left:1163px;top:874px;width:10px;height:10px;background:none;border:1px solid #888"></div><div class="t" style="left:1165px;top:874px;font-size:9px;color:#666;">+</div><svg class="a" style="left:1186px;top:873px" width="10" height="12"><path d="M1 3 H9 M3 3 V1.5 H7 V3 M2 3 V11 H8 V3" fill="none" stroke="#888"/></svg></body></html>
